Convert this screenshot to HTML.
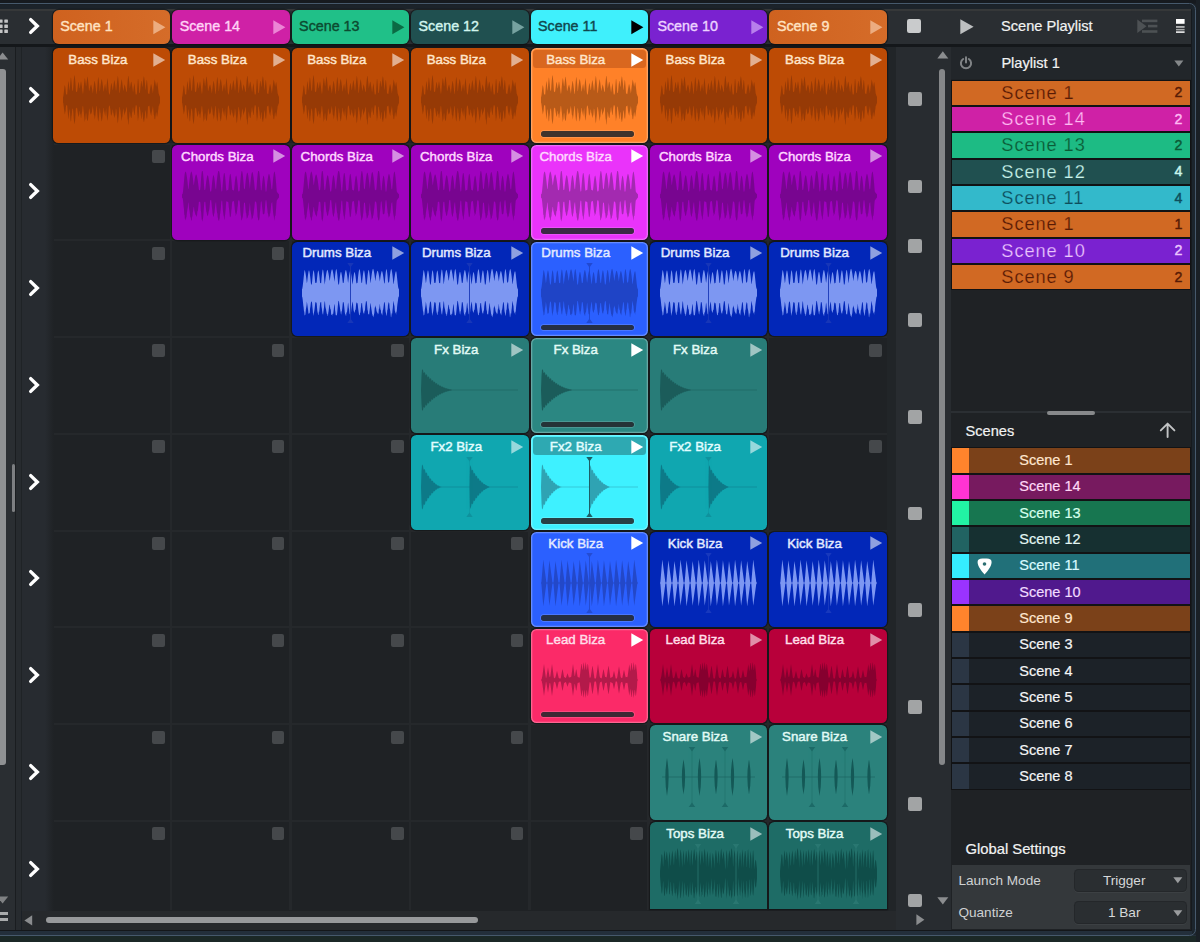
<!DOCTYPE html>
<html lang="en"><head><meta charset="utf-8"><title>Scene Launcher</title>
<style>
*{box-sizing:border-box;margin:0;padding:0}
html,body{width:1200px;height:942px;overflow:hidden;background:#1b2026}
body{position:relative;font-family:"Liberation Sans",Arial,Helvetica,sans-serif;color:#fff;-webkit-font-smoothing:antialiased}
.a{position:absolute}
.t{position:absolute;white-space:nowrap;line-height:1}
svg{position:absolute;overflow:visible}
.sc{position:absolute;top:10.2px;height:33.4px;width:117.5px;border-radius:6px;box-shadow:0 0 0 1.2px rgba(10,12,14,.55)}
.sc .t{left:7.5px;top:8.9px;font-size:14.3px;-webkit-text-stroke:.4px currentColor}
.cl{position:absolute;width:117.5px;height:94.9px;border-radius:5.5px;box-shadow:0 0 0 1.2px rgba(10,12,14,.5);overflow:hidden}
.cl .n{position:absolute;left:0;width:90.4px;top:3.7px;text-align:center;font-size:13.3px;line-height:15px;white-space:nowrap;-webkit-text-stroke:.45px currentColor}
.cl .pb{position:absolute;left:10.3px;width:93.6px;top:83.4px;height:5.4px;border-radius:2.7px;background:rgba(36,40,44,.88);box-shadow:0 0 0 .7px rgba(255,255,255,.2)}
.cl .st{position:absolute;left:2px;right:2px;top:1.8px;height:18.6px;border-radius:3.5px}
.em{position:absolute;width:12.7px;height:13.2px;border-radius:2px;background:#45484b}
.sq{position:absolute;left:908.2px;width:13.8px;height:13.8px;border-radius:2.2px;background:#a2a4a5}
.pr{position:absolute;left:951.5px;width:238.9px;height:24.2px}
.pr .t{left:49.8px;top:3px;font-size:18.2px;letter-spacing:.95px}
.pr .c{position:absolute;right:7.9px;top:4.7px;font-size:14.2px;line-height:1;-webkit-text-stroke:.45px currentColor}
.sr{position:absolute;left:951.5px;width:238.9px;height:24.3px}
.sr i{position:absolute;left:0;top:0;width:17.8px;height:100%}
.sr .t{left:67.8px;top:4.6px;font-size:14.5px;-webkit-text-stroke:.2px currentColor}
.dd{position:absolute;left:1075.2px;width:110.4px;height:20.8px;border-radius:3.5px;background:#2a2e31;box-shadow:0 0 0 1px #24272a, 0 1px 0 1px #3c4043}
.dd .t{left:0;width:98px;text-align:center;top:3.6px;font-size:13.6px;color:#d6d8d9}
</style></head><body>

<div class="a" style="left:0;top:0;width:1200px;height:8.5px;background:linear-gradient(180deg,#161a1f 0,#161a1f 30%,#1c232a 60%)"></div>
<div class="a" style="left:0;top:8.5px;width:1190.5px;height:35.7px;background:#2a2e32;border-top:2.2px solid #363839"></div>
<div class="a" style="left:0;top:44.2px;width:1190.5px;height:2.4px;background:#14171a"></div>
<div class="a" style="left:0;top:46.6px;width:1190.5px;height:864px;background:#1f2225"></div>
<div class="a" style="left:0;top:46.6px;width:14.5px;height:883px;background:#2a2e32"></div>
<div class="a" style="left:14.5px;top:46.6px;width:1.8px;height:883px;background:#1a1d20"></div>
<div class="a" style="left:16.3px;top:46.6px;width:4.5px;height:883px;background:#272b2f"></div>
<div class="a" style="left:20.8px;top:46.6px;width:1.2px;height:864px;background:#1f2326"></div>
<div class="a" style="left:22px;top:46.6px;width:32px;height:864px;background:linear-gradient(90deg,#272b30 0,#272b30 72%,#1f2225 100%)"></div>
<div class="a" style="left:0;top:68.8px;width:5.5px;height:696px;background:#8f9193;border-radius:0 3px 3px 0"></div>
<svg style="left:0;top:51.5px" width="9" height="8"><path d="M-3 7.6 L2.6 0.4 L8.2 7.6Z" fill="#8b8d8f"/></svg>
<svg style="left:0;top:896px" width="9" height="8"><path d="M-3 0.4 L2.6 7.4 L8.2 0.4Z" fill="#7f8183"/></svg>
<div class="a" style="left:0;top:912px;width:8px;height:3px;background:#a9abac"></div><div class="a" style="left:0;top:917.5px;width:8px;height:3px;background:#a9abac"></div>
<div class="a" style="left:11.6px;top:463.5px;width:3.6px;height:48px;background:#7d7f82;border-radius:2px"></div>
<div class="a" style="left:887px;top:46.6px;width:9px;height:864px;background:#212528"></div>
<div class="a" style="left:896px;top:46.6px;width:55px;height:883px;background:#282c30"></div>
<div class="a" style="left:951px;top:46.6px;width:239.5px;height:883px;background:#1f2225"></div>
<div class="a" style="left:22px;top:911px;width:874px;height:18.6px;background:#26292c"></div>
<div class="a" style="left:0;top:929.6px;width:1196px;height:1.8px;background:#14171a"></div>
<div class="a" style="left:0;top:931.4px;width:1200px;height:5px;background:#232f3b"></div>
<div class="a" style="left:0;top:936.4px;width:1200px;height:6px;background:#1b2826"></div>
<div class="a" style="left:1190.5px;top:8.5px;width:1.6px;height:922px;background:#161a1e"></div>
<div class="a" style="left:1192.1px;top:6px;width:4px;height:929px;background:#1c252d"></div>
<div class="a" style="left:1196.3px;top:0;width:3.7px;height:942px;background:#1a2026"></div>
<div class="a" style="left:46px;top:916.8px;width:432px;height:6.5px;background:#97999b;border-radius:3.2px"></div>
<svg style="left:24px;top:914.6px" width="9" height="11"><path d="M8.2 0.3 L0.4 5.4 L8.2 10.5Z" fill="#8a8c8e"/></svg>
<svg style="left:916px;top:914.2px" width="9" height="12"><path d="M0.4 0.3 L8.4 5.8 L0.4 11.3Z" fill="#8a8c8e"/></svg>
<svg style="left:0;top:0" width="10" height="40" fill="#c4c5c6"><rect x="-1" y="19.4" width="3.6" height="3.3" rx=".5"/><rect x="-1" y="24.6" width="3.6" height="3.3" rx=".5"/><rect x="-1" y="29.6" width="3.6" height="3.3" rx=".5"/><rect x="4.3" y="19.4" width="3.6" height="3.3" rx=".5"/><rect x="4.3" y="24.6" width="3.6" height="3.3" rx=".5"/><rect x="4.3" y="29.6" width="3.6" height="3.3" rx=".5"/></svg>
<svg style="left:27px;top:17.4px" width="14" height="18"><path d="M3.7 2.6 L10.3 9 L3.7 15.4" fill="none" stroke="#fff" stroke-width="3.4" stroke-linecap="round" stroke-linejoin="miter"/></svg>
<svg style="left:27px;top:85.5px" width="14" height="18"><path d="M3.7 2.6 L10.3 9 L3.7 15.4" fill="none" stroke="#fff" stroke-width="3.4" stroke-linecap="round" stroke-linejoin="miter"/></svg>
<svg style="left:27px;top:182.25px" width="14" height="18"><path d="M3.7 2.6 L10.3 9 L3.7 15.4" fill="none" stroke="#fff" stroke-width="3.4" stroke-linecap="round" stroke-linejoin="miter"/></svg>
<svg style="left:27px;top:279px" width="14" height="18"><path d="M3.7 2.6 L10.3 9 L3.7 15.4" fill="none" stroke="#fff" stroke-width="3.4" stroke-linecap="round" stroke-linejoin="miter"/></svg>
<svg style="left:27px;top:375.75px" width="14" height="18"><path d="M3.7 2.6 L10.3 9 L3.7 15.4" fill="none" stroke="#fff" stroke-width="3.4" stroke-linecap="round" stroke-linejoin="miter"/></svg>
<svg style="left:27px;top:472.5px" width="14" height="18"><path d="M3.7 2.6 L10.3 9 L3.7 15.4" fill="none" stroke="#fff" stroke-width="3.4" stroke-linecap="round" stroke-linejoin="miter"/></svg>
<svg style="left:27px;top:569.25px" width="14" height="18"><path d="M3.7 2.6 L10.3 9 L3.7 15.4" fill="none" stroke="#fff" stroke-width="3.4" stroke-linecap="round" stroke-linejoin="miter"/></svg>
<svg style="left:27px;top:666px" width="14" height="18"><path d="M3.7 2.6 L10.3 9 L3.7 15.4" fill="none" stroke="#fff" stroke-width="3.4" stroke-linecap="round" stroke-linejoin="miter"/></svg>
<svg style="left:27px;top:762.75px" width="14" height="18"><path d="M3.7 2.6 L10.3 9 L3.7 15.4" fill="none" stroke="#fff" stroke-width="3.4" stroke-linecap="round" stroke-linejoin="miter"/></svg>
<svg style="left:27px;top:859.5px" width="14" height="18"><path d="M3.7 2.6 L10.3 9 L3.7 15.4" fill="none" stroke="#fff" stroke-width="3.4" stroke-linecap="round" stroke-linejoin="miter"/></svg>
<div class="sc" style="left:52.7px;background:#cf621f;background:linear-gradient(90deg,#cf621f,#d56c29)"><span class="t" style="color:#ffe2c2">Scene 1</span><svg style="left:100.6px;top:9.4px" width="13" height="15"><path d="M0.3 0.3 L12.4 7.2 L0.3 14.2Z" fill="rgba(255,225,200,.55)"/></svg></div>
<div class="sc" style="left:172.15px;background:#cf21a6"><span class="t" style="color:#ffd3f6">Scene 14</span><svg style="left:100.6px;top:9.4px" width="13" height="15"><path d="M0.3 0.3 L12.4 7.2 L0.3 14.2Z" fill="rgba(255,200,245,.6)"/></svg></div>
<div class="sc" style="left:291.6px;background:#20c088"><span class="t" style="color:#0c4a30">Scene 13</span><svg style="left:100.6px;top:9.4px" width="13" height="15"><path d="M0.3 0.3 L12.4 7.2 L0.3 14.2Z" fill="#0b6a44"/></svg></div>
<div class="sc" style="left:411.05px;background:#205050"><span class="t" style="color:#d2f5ee">Scene 12</span><svg style="left:100.6px;top:9.4px" width="13" height="15"><path d="M0.3 0.3 L12.4 7.2 L0.3 14.2Z" fill="rgba(190,230,225,.55)"/></svg></div>
<div class="sc" style="left:530.5px;background:#3ff0fc"><span class="t" style="color:#10464c">Scene 11</span><svg style="left:100.6px;top:9.4px" width="13" height="15"><path d="M0.3 0.3 L12.4 7.2 L0.3 14.2Z" fill="#000"/></svg></div>
<div class="sc" style="left:649.95px;background:#7a22d0"><span class="t" style="color:#ecd3ff">Scene 10</span><svg style="left:100.6px;top:9.4px" width="13" height="15"><path d="M0.3 0.3 L12.4 7.2 L0.3 14.2Z" fill="rgba(225,190,255,.6)"/></svg></div>
<div class="sc" style="left:769.4px;background:#cf621f;background:linear-gradient(90deg,#cf621f,#d56c29)"><span class="t" style="color:#ffe2c2">Scene 9</span><svg style="left:100.6px;top:9.4px" width="13" height="15"><path d="M0.3 0.3 L12.4 7.2 L0.3 14.2Z" fill="rgba(255,225,200,.55)"/></svg></div>
<div class="a" style="left:169.65px;top:144px;width:2.6px;height:766px;background:#25282b"></div>
<div class="a" style="left:289.1px;top:144px;width:2.6px;height:766px;background:#25282b"></div>
<div class="a" style="left:408.55px;top:144px;width:2.6px;height:766px;background:#25282b"></div>
<div class="a" style="left:528px;top:144px;width:2.6px;height:766px;background:#25282b"></div>
<div class="a" style="left:647.45px;top:144px;width:2.6px;height:766px;background:#25282b"></div>
<div class="a" style="left:766.9px;top:144px;width:2.6px;height:766px;background:#25282b"></div>
<div class="a" style="left:54px;top:142.65px;width:833px;height:2px;background:#25282b"></div>
<div class="a" style="left:54px;top:239.4px;width:833px;height:2px;background:#25282b"></div>
<div class="a" style="left:54px;top:336.15px;width:833px;height:2px;background:#25282b"></div>
<div class="a" style="left:54px;top:432.9px;width:833px;height:2px;background:#25282b"></div>
<div class="a" style="left:54px;top:529.65px;width:833px;height:2px;background:#25282b"></div>
<div class="a" style="left:54px;top:626.4px;width:833px;height:2px;background:#25282b"></div>
<div class="a" style="left:54px;top:723.15px;width:833px;height:2px;background:#25282b"></div>
<div class="a" style="left:54px;top:819.9px;width:833px;height:2px;background:#25282b"></div>
<div class="cl" style="left:52.7px;top:48.1px;height:94.9px;background:#bd4b05"><span class="n" style="color:#ffe6cc">Bass Biza</span><svg style="left:100.4px;top:4.6px" width="13" height="15"><path d="M0.3 0.3 L12.2 7 L0.3 13.8Z" fill="rgba(255,255,255,.56)"/></svg><svg style="left:10.3px;top:26.5px" width="97" height="50" viewBox="0 0 97 50"><path d="M0 22.28 L0.32 21.18 L0.65 18.64 L0.97 16.02 L1.3 13.17 L1.62 10.16 L1.95 10.8 L2.27 12.03 L2.6 14.32 L2.92 18.31 L3.24 19.44 L3.57 19.49 L3.89 19.5 L4.22 19.47 L4.54 14.73 L4.87 10.95 L5.19 7.62 L5.52 6.1 L5.84 8.92 L6.16 12.09 L6.49 16.07 L6.81 14.11 L7.14 9.73 L7.46 5.98 L7.79 2.56 L8.11 3.21 L8.43 6.17 L8.76 9.52 L9.08 13.8 L9.41 15.87 L9.73 15.72 L10.06 15.61 L10.38 10.38 L10.71 6.44 L11.03 3.06 L11.35 0.5 L11.68 0.5 L12 3.51 L12.33 7.09 L12.65 11.24 L12.98 16.4 L13.3 16.65 L13.63 16.92 L13.95 17.21 L14.27 15.38 L14.6 12.7 L14.92 10.53 L15.25 8.59 L15.57 6.8 L15.9 8.06 L16.22 10.39 L16.55 12.88 L16.87 13.4 L17.19 11.01 L17.52 8.81 L17.84 6.71 L18.17 6.86 L18.49 8.9 L18.82 11.07 L19.14 13.43 L19.46 16.22 L19.79 18.73 L20.11 18.49 L20.44 15.43 L20.76 11.71 L21.09 8.54 L21.41 5.66 L21.74 2.95 L22.06 3.93 L22.38 6.16 L22.71 8.65 L23.03 11.54 L23.36 10.56 L23.68 7.28 L24.01 4.39 L24.33 1.76 L24.66 2.09 L24.98 4.68 L25.3 7.54 L25.63 10.84 L25.95 15.47 L26.28 15.95 L26.6 14.69 L26.93 13.08 L27.25 11.8 L27.58 10.68 L27.9 9.68 L28.22 9.67 L28.55 11.23 L28.87 12.87 L29.2 14.63 L29.52 16.62 L29.85 18.82 L30.17 16.06 L30.49 13.12 L30.82 10.62 L31.14 8.33 L31.47 6.16 L31.79 6.02 L32.12 8.21 L32.44 10.51 L32.77 13.01 L33.09 15.92 L33.41 18.95 L33.74 18.74 L34.06 15.35 L34.39 10.84 L34.71 7.05 L35.04 3.6 L35.36 1.82 L35.69 4.57 L36.01 7.61 L36.33 11.14 L36.66 16.29 L36.98 16.08 L37.31 12.5 L37.63 9.99 L37.96 7.8 L38.28 5.83 L38.61 4.01 L38.93 4.73 L39.25 6.61 L39.58 8.66 L39.9 10.95 L40.23 13.7 L40.55 16.15 L40.88 16.38 L41.2 13.53 L41.53 11.51 L41.85 9.79 L42.17 8.95 L42.5 11.13 L42.82 13.51 L43.15 16.29 L43.47 12.26 L43.8 8.79 L44.12 5.71 L44.44 2.85 L44.77 5.27 L45.09 8.58 L45.42 12.22 L45.74 16.59 L46.07 19.47 L46.39 19.4 L46.72 19.29 L47.04 17.46 L47.36 14.51 L47.69 12.04 L48.01 9.78 L48.34 7.64 L48.66 9.01 L48.99 10.72 L49.31 12.64 L49.64 15.02 L49.96 15.04 L50.28 11.98 L50.61 9.45 L50.93 7.18 L51.26 5.09 L51.58 6.09 L51.91 7.95 L52.23 10.05 L52.56 12.54 L52.88 15.51 L53.2 15.56 L53.53 12.43 L53.85 8.82 L54.18 5.85 L54.5 3.21 L54.83 0.79 L55.15 2.5 L55.47 5.51 L55.8 8.78 L56.12 12.47 L56.45 17.75 L56.77 18.04 L57.1 15.69 L57.42 12.55 L57.75 9.97 L58.07 7.64 L58.39 5.45 L58.72 3.88 L59.04 6.24 L59.37 8.7 L59.69 11.31 L60.02 14.19 L60.34 16.25 L60.67 14.31 L60.99 12.53 L61.31 10.84 L61.64 9.37 L61.96 10.56 L62.29 11.81 L62.61 13.19 L62.94 14.77 L63.26 17.04 L63.59 17.11 L63.91 15.41 L64.23 10.71 L64.56 7.03 L64.88 3.77 L65.21 0.78 L65.53 1.28 L65.86 4.01 L66.18 7.04 L66.51 10.57 L66.83 13.51 L67.15 11.39 L67.48 9.64 L67.8 8.11 L68.13 6.73 L68.45 7.02 L68.78 8.8 L69.1 10.72 L69.42 12.83 L69.75 15.32 L70.07 17.45 L70.4 15.18 L70.72 12.41 L71.05 10.13 L71.37 8.08 L71.7 10.45 L72.02 13.19 L72.34 16.37 L72.67 19.32 L72.99 19.42 L73.32 19.48 L73.64 19.5 L73.97 17.51 L74.29 12 L74.62 7.65 L74.94 3.73 L75.26 4.15 L75.59 7.77 L75.91 11.88 L76.24 17.66 L76.56 17.99 L76.89 17.7 L77.21 15.29 L77.54 11.57 L77.86 8.5 L78.18 5.73 L78.51 6.16 L78.83 8.51 L79.16 11.22 L79.48 12.05 L79.81 8.84 L80.13 6.09 L80.45 3.62 L80.78 1.35 L81.1 2.08 L81.43 4.48 L81.75 7.1 L82.08 10.03 L82.4 13.55 L82.73 15.42 L83.05 10.97 L83.37 7.72 L83.7 4.9 L84.02 5.55 L84.35 8.98 L84.67 12.85 L85 18.29 L85.32 18.55 L85.65 18.79 L85.97 19 L86.29 19.17 L86.62 17.02 L86.94 14.77 L87.27 12.84 L87.59 11.05 L87.92 9.34 L88.24 9.2 L88.57 10.78 L88.89 12.44 L89.21 14.24 L89.54 16.36 L89.86 18.54 L90.19 15.96 L90.51 13.03 L90.84 10.52 L91.16 8.22 L91.48 6.05 L91.81 4.6 L92.13 6.14 L92.46 7.81 L92.78 9.66 L93.11 11.8 L93.43 10.24 L93.76 8.55 L94.08 7 L94.4 8.11 L94.73 10.57 L95.05 13.36 L95.38 16.11 L95.7 18.65 L96.03 19.52 L96.35 20.39 L96.68 21.24 L97 22.06 L97 27.81 L96.68 28.67 L96.35 29.41 L96.03 30.69 L95.7 30.74 L95.38 33.93 L95.05 35.84 L94.73 38.53 L94.4 40.33 L94.08 41.94 L93.76 40.74 L93.43 38.04 L93.11 37.07 L92.78 39.15 L92.46 41.73 L92.13 44.17 L91.81 44.3 L91.48 43.81 L91.16 40.56 L90.84 39.95 L90.51 36.85 L90.19 33.29 L89.86 31.01 L89.54 33.41 L89.21 34.81 L88.89 36.59 L88.57 37.94 L88.24 40.72 L87.92 39.89 L87.59 38.43 L87.27 37.48 L86.94 35.23 L86.62 32.15 L86.29 30.27 L85.97 31.14 L85.65 31.11 L85.32 31.17 L85 31.46 L84.67 37 L84.35 41.04 L84.02 44.27 L83.7 43.2 L83.37 42.27 L83.05 38.27 L82.73 34.92 L82.4 35.99 L82.08 38.37 L81.75 41.95 L81.43 44.21 L81.1 46.63 L80.78 47.21 L80.45 45.16 L80.13 43.92 L79.81 40.82 L79.48 36.91 L79.16 37.52 L78.83 40.15 L78.51 44.07 L78.18 43.7 L77.86 40.37 L77.54 36.95 L77.21 35 L76.89 32.3 L76.56 31.29 L76.24 32.3 L75.91 37.62 L75.59 42.28 L75.26 43.47 L74.94 46.43 L74.62 41.87 L74.29 38.42 L73.97 32.6 L73.64 30.43 L73.32 30.6 L72.99 30.02 L72.67 30.76 L72.34 32.63 L72.02 35.73 L71.7 39.85 L71.37 40.16 L71.05 38.3 L70.72 36.17 L70.4 34.85 L70.07 31.82 L69.75 33.52 L69.42 36.85 L69.1 37.81 L68.78 40.72 L68.45 42.93 L68.13 43.03 L67.8 42 L67.48 40.69 L67.15 38.42 L66.83 36.6 L66.51 37.98 L66.18 42.13 L65.86 44.35 L65.53 48.88 L65.21 49.8 L64.88 44.95 L64.56 43.5 L64.23 39.59 L63.91 34.09 L63.59 32.48 L63.26 32.1 L62.94 35.14 L62.61 36.41 L62.29 37.12 L61.96 38.78 L61.64 40.49 L61.31 38.42 L60.99 37.38 L60.67 35.26 L60.34 33.22 L60.02 35.26 L59.69 38.42 L59.37 41.44 L59.04 42.65 L58.72 46.23 L58.39 44.09 L58.07 41.31 L57.75 38.65 L57.42 36.11 L57.1 33.76 L56.77 31.92 L56.45 32.02 L56.12 36.27 L55.8 40.13 L55.47 42.75 L55.15 46.1 L54.83 48.57 L54.5 46.43 L54.18 42.93 L53.85 40.05 L53.53 36.69 L53.2 34.07 L52.88 33.48 L52.56 37.66 L52.23 40.49 L51.91 40.19 L51.58 42.02 L51.26 42.93 L50.93 40.84 L50.61 38.69 L50.28 38.07 L49.96 34.52 L49.64 34.46 L49.31 36.92 L48.99 38.18 L48.66 39.77 L48.34 40.41 L48.01 40.5 L47.69 37.71 L47.36 34.25 L47.04 32.63 L46.72 30.76 L46.39 30.75 L46.07 30.57 L45.74 32.63 L45.42 37.92 L45.09 40.85 L44.77 42.98 L44.44 45.73 L44.12 44.39 L43.8 40.5 L43.47 37.97 L43.15 33.01 L42.82 35.74 L42.5 38.56 L42.17 41.54 L41.85 39.39 L41.53 38.01 L41.2 36.31 L40.88 33 L40.55 33.03 L40.23 36.29 L39.9 37.39 L39.58 40.89 L39.25 43.83 L38.93 45.74 L38.61 46.57 L38.28 44 L37.96 42.62 L37.63 38.32 L37.31 37.62 L36.98 33.26 L36.66 33.48 L36.33 37.35 L36.01 40.94 L35.69 44.09 L35.36 46.47 L35.04 45.61 L34.71 42.7 L34.39 39.35 L34.06 34.64 L33.74 30.73 L33.41 31.22 L33.09 34.37 L32.77 36.38 L32.44 40.04 L32.12 42.14 L31.79 44.57 L31.47 41.6 L31.14 40.09 L30.82 39.77 L30.49 36.23 L30.17 33.47 L29.85 30.85 L29.52 32.84 L29.2 34.57 L28.87 37.22 L28.55 37.76 L28.22 38.81 L27.9 39.33 L27.58 39.44 L27.25 37.97 L26.93 37.03 L26.6 34.53 L26.28 33.23 L25.95 34.67 L25.63 39.29 L25.3 40.89 L24.98 44.6 L24.66 45.61 L24.33 46.29 L24.01 44.62 L23.68 43.1 L23.36 39.21 L23.03 37.57 L22.71 39.83 L22.38 44.15 L22.06 45.02 L21.74 47.34 L21.41 43.06 L21.09 40.33 L20.76 36.91 L20.44 34.49 L20.11 31.19 L19.79 30.71 L19.46 33.06 L19.14 36.67 L18.82 37.76 L18.49 39.96 L18.17 43.1 L17.84 42.76 L17.52 39.32 L17.19 39.04 L16.87 35.9 L16.55 36.25 L16.22 39.25 L15.9 40.91 L15.57 41.93 L15.25 40.39 L14.92 38.48 L14.6 36.99 L14.27 34.17 L13.95 32.17 L13.63 33.35 L13.3 33.25 L12.98 32.66 L12.65 37.16 L12.33 42.87 L12 46.34 L11.68 47.94 L11.35 49.22 L11.03 45.95 L10.71 43.19 L10.38 38.01 L10.06 34.22 L9.73 34.08 L9.41 33.06 L9.08 35.9 L8.76 39.65 L8.43 41.61 L8.11 46.08 L7.79 46.62 L7.46 44.71 L7.14 39.17 L6.81 35 L6.49 33.89 L6.16 37.26 L5.84 40.45 L5.52 44.47 L5.19 42.02 L4.87 38.62 L4.54 35.02 L4.22 30.44 L3.89 30.3 L3.57 30.26 L3.24 30.23 L2.92 31.84 L2.6 36.03 L2.27 37.06 L1.95 39.47 L1.62 38.16 L1.3 35.71 L0.97 33.78 L0.65 31.01 L0.32 28.49 L0 27.41Z" fill="#963a06"/></svg></div>
<div class="cl" style="left:172.15px;top:48.1px;height:94.9px;background:#bd4b05"><span class="n" style="color:#ffe6cc">Bass Biza</span><svg style="left:100.4px;top:4.6px" width="13" height="15"><path d="M0.3 0.3 L12.2 7 L0.3 13.8Z" fill="rgba(255,255,255,.56)"/></svg><svg style="left:10.3px;top:26.5px" width="97" height="50" viewBox="0 0 97 50"><path d="M0 22.28 L0.32 21.18 L0.65 18.64 L0.97 16.02 L1.3 13.17 L1.62 10.16 L1.95 10.8 L2.27 12.03 L2.6 14.32 L2.92 18.31 L3.24 19.44 L3.57 19.49 L3.89 19.5 L4.22 19.47 L4.54 14.73 L4.87 10.95 L5.19 7.62 L5.52 6.1 L5.84 8.92 L6.16 12.09 L6.49 16.07 L6.81 14.11 L7.14 9.73 L7.46 5.98 L7.79 2.56 L8.11 3.21 L8.43 6.17 L8.76 9.52 L9.08 13.8 L9.41 15.87 L9.73 15.72 L10.06 15.61 L10.38 10.38 L10.71 6.44 L11.03 3.06 L11.35 0.5 L11.68 0.5 L12 3.51 L12.33 7.09 L12.65 11.24 L12.98 16.4 L13.3 16.65 L13.63 16.92 L13.95 17.21 L14.27 15.38 L14.6 12.7 L14.92 10.53 L15.25 8.59 L15.57 6.8 L15.9 8.06 L16.22 10.39 L16.55 12.88 L16.87 13.4 L17.19 11.01 L17.52 8.81 L17.84 6.71 L18.17 6.86 L18.49 8.9 L18.82 11.07 L19.14 13.43 L19.46 16.22 L19.79 18.73 L20.11 18.49 L20.44 15.43 L20.76 11.71 L21.09 8.54 L21.41 5.66 L21.74 2.95 L22.06 3.93 L22.38 6.16 L22.71 8.65 L23.03 11.54 L23.36 10.56 L23.68 7.28 L24.01 4.39 L24.33 1.76 L24.66 2.09 L24.98 4.68 L25.3 7.54 L25.63 10.84 L25.95 15.47 L26.28 15.95 L26.6 14.69 L26.93 13.08 L27.25 11.8 L27.58 10.68 L27.9 9.68 L28.22 9.67 L28.55 11.23 L28.87 12.87 L29.2 14.63 L29.52 16.62 L29.85 18.82 L30.17 16.06 L30.49 13.12 L30.82 10.62 L31.14 8.33 L31.47 6.16 L31.79 6.02 L32.12 8.21 L32.44 10.51 L32.77 13.01 L33.09 15.92 L33.41 18.95 L33.74 18.74 L34.06 15.35 L34.39 10.84 L34.71 7.05 L35.04 3.6 L35.36 1.82 L35.69 4.57 L36.01 7.61 L36.33 11.14 L36.66 16.29 L36.98 16.08 L37.31 12.5 L37.63 9.99 L37.96 7.8 L38.28 5.83 L38.61 4.01 L38.93 4.73 L39.25 6.61 L39.58 8.66 L39.9 10.95 L40.23 13.7 L40.55 16.15 L40.88 16.38 L41.2 13.53 L41.53 11.51 L41.85 9.79 L42.17 8.95 L42.5 11.13 L42.82 13.51 L43.15 16.29 L43.47 12.26 L43.8 8.79 L44.12 5.71 L44.44 2.85 L44.77 5.27 L45.09 8.58 L45.42 12.22 L45.74 16.59 L46.07 19.47 L46.39 19.4 L46.72 19.29 L47.04 17.46 L47.36 14.51 L47.69 12.04 L48.01 9.78 L48.34 7.64 L48.66 9.01 L48.99 10.72 L49.31 12.64 L49.64 15.02 L49.96 15.04 L50.28 11.98 L50.61 9.45 L50.93 7.18 L51.26 5.09 L51.58 6.09 L51.91 7.95 L52.23 10.05 L52.56 12.54 L52.88 15.51 L53.2 15.56 L53.53 12.43 L53.85 8.82 L54.18 5.85 L54.5 3.21 L54.83 0.79 L55.15 2.5 L55.47 5.51 L55.8 8.78 L56.12 12.47 L56.45 17.75 L56.77 18.04 L57.1 15.69 L57.42 12.55 L57.75 9.97 L58.07 7.64 L58.39 5.45 L58.72 3.88 L59.04 6.24 L59.37 8.7 L59.69 11.31 L60.02 14.19 L60.34 16.25 L60.67 14.31 L60.99 12.53 L61.31 10.84 L61.64 9.37 L61.96 10.56 L62.29 11.81 L62.61 13.19 L62.94 14.77 L63.26 17.04 L63.59 17.11 L63.91 15.41 L64.23 10.71 L64.56 7.03 L64.88 3.77 L65.21 0.78 L65.53 1.28 L65.86 4.01 L66.18 7.04 L66.51 10.57 L66.83 13.51 L67.15 11.39 L67.48 9.64 L67.8 8.11 L68.13 6.73 L68.45 7.02 L68.78 8.8 L69.1 10.72 L69.42 12.83 L69.75 15.32 L70.07 17.45 L70.4 15.18 L70.72 12.41 L71.05 10.13 L71.37 8.08 L71.7 10.45 L72.02 13.19 L72.34 16.37 L72.67 19.32 L72.99 19.42 L73.32 19.48 L73.64 19.5 L73.97 17.51 L74.29 12 L74.62 7.65 L74.94 3.73 L75.26 4.15 L75.59 7.77 L75.91 11.88 L76.24 17.66 L76.56 17.99 L76.89 17.7 L77.21 15.29 L77.54 11.57 L77.86 8.5 L78.18 5.73 L78.51 6.16 L78.83 8.51 L79.16 11.22 L79.48 12.05 L79.81 8.84 L80.13 6.09 L80.45 3.62 L80.78 1.35 L81.1 2.08 L81.43 4.48 L81.75 7.1 L82.08 10.03 L82.4 13.55 L82.73 15.42 L83.05 10.97 L83.37 7.72 L83.7 4.9 L84.02 5.55 L84.35 8.98 L84.67 12.85 L85 18.29 L85.32 18.55 L85.65 18.79 L85.97 19 L86.29 19.17 L86.62 17.02 L86.94 14.77 L87.27 12.84 L87.59 11.05 L87.92 9.34 L88.24 9.2 L88.57 10.78 L88.89 12.44 L89.21 14.24 L89.54 16.36 L89.86 18.54 L90.19 15.96 L90.51 13.03 L90.84 10.52 L91.16 8.22 L91.48 6.05 L91.81 4.6 L92.13 6.14 L92.46 7.81 L92.78 9.66 L93.11 11.8 L93.43 10.24 L93.76 8.55 L94.08 7 L94.4 8.11 L94.73 10.57 L95.05 13.36 L95.38 16.11 L95.7 18.65 L96.03 19.52 L96.35 20.39 L96.68 21.24 L97 22.06 L97 27.81 L96.68 28.67 L96.35 29.41 L96.03 30.69 L95.7 30.74 L95.38 33.93 L95.05 35.84 L94.73 38.53 L94.4 40.33 L94.08 41.94 L93.76 40.74 L93.43 38.04 L93.11 37.07 L92.78 39.15 L92.46 41.73 L92.13 44.17 L91.81 44.3 L91.48 43.81 L91.16 40.56 L90.84 39.95 L90.51 36.85 L90.19 33.29 L89.86 31.01 L89.54 33.41 L89.21 34.81 L88.89 36.59 L88.57 37.94 L88.24 40.72 L87.92 39.89 L87.59 38.43 L87.27 37.48 L86.94 35.23 L86.62 32.15 L86.29 30.27 L85.97 31.14 L85.65 31.11 L85.32 31.17 L85 31.46 L84.67 37 L84.35 41.04 L84.02 44.27 L83.7 43.2 L83.37 42.27 L83.05 38.27 L82.73 34.92 L82.4 35.99 L82.08 38.37 L81.75 41.95 L81.43 44.21 L81.1 46.63 L80.78 47.21 L80.45 45.16 L80.13 43.92 L79.81 40.82 L79.48 36.91 L79.16 37.52 L78.83 40.15 L78.51 44.07 L78.18 43.7 L77.86 40.37 L77.54 36.95 L77.21 35 L76.89 32.3 L76.56 31.29 L76.24 32.3 L75.91 37.62 L75.59 42.28 L75.26 43.47 L74.94 46.43 L74.62 41.87 L74.29 38.42 L73.97 32.6 L73.64 30.43 L73.32 30.6 L72.99 30.02 L72.67 30.76 L72.34 32.63 L72.02 35.73 L71.7 39.85 L71.37 40.16 L71.05 38.3 L70.72 36.17 L70.4 34.85 L70.07 31.82 L69.75 33.52 L69.42 36.85 L69.1 37.81 L68.78 40.72 L68.45 42.93 L68.13 43.03 L67.8 42 L67.48 40.69 L67.15 38.42 L66.83 36.6 L66.51 37.98 L66.18 42.13 L65.86 44.35 L65.53 48.88 L65.21 49.8 L64.88 44.95 L64.56 43.5 L64.23 39.59 L63.91 34.09 L63.59 32.48 L63.26 32.1 L62.94 35.14 L62.61 36.41 L62.29 37.12 L61.96 38.78 L61.64 40.49 L61.31 38.42 L60.99 37.38 L60.67 35.26 L60.34 33.22 L60.02 35.26 L59.69 38.42 L59.37 41.44 L59.04 42.65 L58.72 46.23 L58.39 44.09 L58.07 41.31 L57.75 38.65 L57.42 36.11 L57.1 33.76 L56.77 31.92 L56.45 32.02 L56.12 36.27 L55.8 40.13 L55.47 42.75 L55.15 46.1 L54.83 48.57 L54.5 46.43 L54.18 42.93 L53.85 40.05 L53.53 36.69 L53.2 34.07 L52.88 33.48 L52.56 37.66 L52.23 40.49 L51.91 40.19 L51.58 42.02 L51.26 42.93 L50.93 40.84 L50.61 38.69 L50.28 38.07 L49.96 34.52 L49.64 34.46 L49.31 36.92 L48.99 38.18 L48.66 39.77 L48.34 40.41 L48.01 40.5 L47.69 37.71 L47.36 34.25 L47.04 32.63 L46.72 30.76 L46.39 30.75 L46.07 30.57 L45.74 32.63 L45.42 37.92 L45.09 40.85 L44.77 42.98 L44.44 45.73 L44.12 44.39 L43.8 40.5 L43.47 37.97 L43.15 33.01 L42.82 35.74 L42.5 38.56 L42.17 41.54 L41.85 39.39 L41.53 38.01 L41.2 36.31 L40.88 33 L40.55 33.03 L40.23 36.29 L39.9 37.39 L39.58 40.89 L39.25 43.83 L38.93 45.74 L38.61 46.57 L38.28 44 L37.96 42.62 L37.63 38.32 L37.31 37.62 L36.98 33.26 L36.66 33.48 L36.33 37.35 L36.01 40.94 L35.69 44.09 L35.36 46.47 L35.04 45.61 L34.71 42.7 L34.39 39.35 L34.06 34.64 L33.74 30.73 L33.41 31.22 L33.09 34.37 L32.77 36.38 L32.44 40.04 L32.12 42.14 L31.79 44.57 L31.47 41.6 L31.14 40.09 L30.82 39.77 L30.49 36.23 L30.17 33.47 L29.85 30.85 L29.52 32.84 L29.2 34.57 L28.87 37.22 L28.55 37.76 L28.22 38.81 L27.9 39.33 L27.58 39.44 L27.25 37.97 L26.93 37.03 L26.6 34.53 L26.28 33.23 L25.95 34.67 L25.63 39.29 L25.3 40.89 L24.98 44.6 L24.66 45.61 L24.33 46.29 L24.01 44.62 L23.68 43.1 L23.36 39.21 L23.03 37.57 L22.71 39.83 L22.38 44.15 L22.06 45.02 L21.74 47.34 L21.41 43.06 L21.09 40.33 L20.76 36.91 L20.44 34.49 L20.11 31.19 L19.79 30.71 L19.46 33.06 L19.14 36.67 L18.82 37.76 L18.49 39.96 L18.17 43.1 L17.84 42.76 L17.52 39.32 L17.19 39.04 L16.87 35.9 L16.55 36.25 L16.22 39.25 L15.9 40.91 L15.57 41.93 L15.25 40.39 L14.92 38.48 L14.6 36.99 L14.27 34.17 L13.95 32.17 L13.63 33.35 L13.3 33.25 L12.98 32.66 L12.65 37.16 L12.33 42.87 L12 46.34 L11.68 47.94 L11.35 49.22 L11.03 45.95 L10.71 43.19 L10.38 38.01 L10.06 34.22 L9.73 34.08 L9.41 33.06 L9.08 35.9 L8.76 39.65 L8.43 41.61 L8.11 46.08 L7.79 46.62 L7.46 44.71 L7.14 39.17 L6.81 35 L6.49 33.89 L6.16 37.26 L5.84 40.45 L5.52 44.47 L5.19 42.02 L4.87 38.62 L4.54 35.02 L4.22 30.44 L3.89 30.3 L3.57 30.26 L3.24 30.23 L2.92 31.84 L2.6 36.03 L2.27 37.06 L1.95 39.47 L1.62 38.16 L1.3 35.71 L0.97 33.78 L0.65 31.01 L0.32 28.49 L0 27.41Z" fill="#963a06"/></svg></div>
<div class="cl" style="left:291.6px;top:48.1px;height:94.9px;background:#bd4b05"><span class="n" style="color:#ffe6cc">Bass Biza</span><svg style="left:100.4px;top:4.6px" width="13" height="15"><path d="M0.3 0.3 L12.2 7 L0.3 13.8Z" fill="rgba(255,255,255,.56)"/></svg><svg style="left:10.3px;top:26.5px" width="97" height="50" viewBox="0 0 97 50"><path d="M0 22.28 L0.32 21.18 L0.65 18.64 L0.97 16.02 L1.3 13.17 L1.62 10.16 L1.95 10.8 L2.27 12.03 L2.6 14.32 L2.92 18.31 L3.24 19.44 L3.57 19.49 L3.89 19.5 L4.22 19.47 L4.54 14.73 L4.87 10.95 L5.19 7.62 L5.52 6.1 L5.84 8.92 L6.16 12.09 L6.49 16.07 L6.81 14.11 L7.14 9.73 L7.46 5.98 L7.79 2.56 L8.11 3.21 L8.43 6.17 L8.76 9.52 L9.08 13.8 L9.41 15.87 L9.73 15.72 L10.06 15.61 L10.38 10.38 L10.71 6.44 L11.03 3.06 L11.35 0.5 L11.68 0.5 L12 3.51 L12.33 7.09 L12.65 11.24 L12.98 16.4 L13.3 16.65 L13.63 16.92 L13.95 17.21 L14.27 15.38 L14.6 12.7 L14.92 10.53 L15.25 8.59 L15.57 6.8 L15.9 8.06 L16.22 10.39 L16.55 12.88 L16.87 13.4 L17.19 11.01 L17.52 8.81 L17.84 6.71 L18.17 6.86 L18.49 8.9 L18.82 11.07 L19.14 13.43 L19.46 16.22 L19.79 18.73 L20.11 18.49 L20.44 15.43 L20.76 11.71 L21.09 8.54 L21.41 5.66 L21.74 2.95 L22.06 3.93 L22.38 6.16 L22.71 8.65 L23.03 11.54 L23.36 10.56 L23.68 7.28 L24.01 4.39 L24.33 1.76 L24.66 2.09 L24.98 4.68 L25.3 7.54 L25.63 10.84 L25.95 15.47 L26.28 15.95 L26.6 14.69 L26.93 13.08 L27.25 11.8 L27.58 10.68 L27.9 9.68 L28.22 9.67 L28.55 11.23 L28.87 12.87 L29.2 14.63 L29.52 16.62 L29.85 18.82 L30.17 16.06 L30.49 13.12 L30.82 10.62 L31.14 8.33 L31.47 6.16 L31.79 6.02 L32.12 8.21 L32.44 10.51 L32.77 13.01 L33.09 15.92 L33.41 18.95 L33.74 18.74 L34.06 15.35 L34.39 10.84 L34.71 7.05 L35.04 3.6 L35.36 1.82 L35.69 4.57 L36.01 7.61 L36.33 11.14 L36.66 16.29 L36.98 16.08 L37.31 12.5 L37.63 9.99 L37.96 7.8 L38.28 5.83 L38.61 4.01 L38.93 4.73 L39.25 6.61 L39.58 8.66 L39.9 10.95 L40.23 13.7 L40.55 16.15 L40.88 16.38 L41.2 13.53 L41.53 11.51 L41.85 9.79 L42.17 8.95 L42.5 11.13 L42.82 13.51 L43.15 16.29 L43.47 12.26 L43.8 8.79 L44.12 5.71 L44.44 2.85 L44.77 5.27 L45.09 8.58 L45.42 12.22 L45.74 16.59 L46.07 19.47 L46.39 19.4 L46.72 19.29 L47.04 17.46 L47.36 14.51 L47.69 12.04 L48.01 9.78 L48.34 7.64 L48.66 9.01 L48.99 10.72 L49.31 12.64 L49.64 15.02 L49.96 15.04 L50.28 11.98 L50.61 9.45 L50.93 7.18 L51.26 5.09 L51.58 6.09 L51.91 7.95 L52.23 10.05 L52.56 12.54 L52.88 15.51 L53.2 15.56 L53.53 12.43 L53.85 8.82 L54.18 5.85 L54.5 3.21 L54.83 0.79 L55.15 2.5 L55.47 5.51 L55.8 8.78 L56.12 12.47 L56.45 17.75 L56.77 18.04 L57.1 15.69 L57.42 12.55 L57.75 9.97 L58.07 7.64 L58.39 5.45 L58.72 3.88 L59.04 6.24 L59.37 8.7 L59.69 11.31 L60.02 14.19 L60.34 16.25 L60.67 14.31 L60.99 12.53 L61.31 10.84 L61.64 9.37 L61.96 10.56 L62.29 11.81 L62.61 13.19 L62.94 14.77 L63.26 17.04 L63.59 17.11 L63.91 15.41 L64.23 10.71 L64.56 7.03 L64.88 3.77 L65.21 0.78 L65.53 1.28 L65.86 4.01 L66.18 7.04 L66.51 10.57 L66.83 13.51 L67.15 11.39 L67.48 9.64 L67.8 8.11 L68.13 6.73 L68.45 7.02 L68.78 8.8 L69.1 10.72 L69.42 12.83 L69.75 15.32 L70.07 17.45 L70.4 15.18 L70.72 12.41 L71.05 10.13 L71.37 8.08 L71.7 10.45 L72.02 13.19 L72.34 16.37 L72.67 19.32 L72.99 19.42 L73.32 19.48 L73.64 19.5 L73.97 17.51 L74.29 12 L74.62 7.65 L74.94 3.73 L75.26 4.15 L75.59 7.77 L75.91 11.88 L76.24 17.66 L76.56 17.99 L76.89 17.7 L77.21 15.29 L77.54 11.57 L77.86 8.5 L78.18 5.73 L78.51 6.16 L78.83 8.51 L79.16 11.22 L79.48 12.05 L79.81 8.84 L80.13 6.09 L80.45 3.62 L80.78 1.35 L81.1 2.08 L81.43 4.48 L81.75 7.1 L82.08 10.03 L82.4 13.55 L82.73 15.42 L83.05 10.97 L83.37 7.72 L83.7 4.9 L84.02 5.55 L84.35 8.98 L84.67 12.85 L85 18.29 L85.32 18.55 L85.65 18.79 L85.97 19 L86.29 19.17 L86.62 17.02 L86.94 14.77 L87.27 12.84 L87.59 11.05 L87.92 9.34 L88.24 9.2 L88.57 10.78 L88.89 12.44 L89.21 14.24 L89.54 16.36 L89.86 18.54 L90.19 15.96 L90.51 13.03 L90.84 10.52 L91.16 8.22 L91.48 6.05 L91.81 4.6 L92.13 6.14 L92.46 7.81 L92.78 9.66 L93.11 11.8 L93.43 10.24 L93.76 8.55 L94.08 7 L94.4 8.11 L94.73 10.57 L95.05 13.36 L95.38 16.11 L95.7 18.65 L96.03 19.52 L96.35 20.39 L96.68 21.24 L97 22.06 L97 27.81 L96.68 28.67 L96.35 29.41 L96.03 30.69 L95.7 30.74 L95.38 33.93 L95.05 35.84 L94.73 38.53 L94.4 40.33 L94.08 41.94 L93.76 40.74 L93.43 38.04 L93.11 37.07 L92.78 39.15 L92.46 41.73 L92.13 44.17 L91.81 44.3 L91.48 43.81 L91.16 40.56 L90.84 39.95 L90.51 36.85 L90.19 33.29 L89.86 31.01 L89.54 33.41 L89.21 34.81 L88.89 36.59 L88.57 37.94 L88.24 40.72 L87.92 39.89 L87.59 38.43 L87.27 37.48 L86.94 35.23 L86.62 32.15 L86.29 30.27 L85.97 31.14 L85.65 31.11 L85.32 31.17 L85 31.46 L84.67 37 L84.35 41.04 L84.02 44.27 L83.7 43.2 L83.37 42.27 L83.05 38.27 L82.73 34.92 L82.4 35.99 L82.08 38.37 L81.75 41.95 L81.43 44.21 L81.1 46.63 L80.78 47.21 L80.45 45.16 L80.13 43.92 L79.81 40.82 L79.48 36.91 L79.16 37.52 L78.83 40.15 L78.51 44.07 L78.18 43.7 L77.86 40.37 L77.54 36.95 L77.21 35 L76.89 32.3 L76.56 31.29 L76.24 32.3 L75.91 37.62 L75.59 42.28 L75.26 43.47 L74.94 46.43 L74.62 41.87 L74.29 38.42 L73.97 32.6 L73.64 30.43 L73.32 30.6 L72.99 30.02 L72.67 30.76 L72.34 32.63 L72.02 35.73 L71.7 39.85 L71.37 40.16 L71.05 38.3 L70.72 36.17 L70.4 34.85 L70.07 31.82 L69.75 33.52 L69.42 36.85 L69.1 37.81 L68.78 40.72 L68.45 42.93 L68.13 43.03 L67.8 42 L67.48 40.69 L67.15 38.42 L66.83 36.6 L66.51 37.98 L66.18 42.13 L65.86 44.35 L65.53 48.88 L65.21 49.8 L64.88 44.95 L64.56 43.5 L64.23 39.59 L63.91 34.09 L63.59 32.48 L63.26 32.1 L62.94 35.14 L62.61 36.41 L62.29 37.12 L61.96 38.78 L61.64 40.49 L61.31 38.42 L60.99 37.38 L60.67 35.26 L60.34 33.22 L60.02 35.26 L59.69 38.42 L59.37 41.44 L59.04 42.65 L58.72 46.23 L58.39 44.09 L58.07 41.31 L57.75 38.65 L57.42 36.11 L57.1 33.76 L56.77 31.92 L56.45 32.02 L56.12 36.27 L55.8 40.13 L55.47 42.75 L55.15 46.1 L54.83 48.57 L54.5 46.43 L54.18 42.93 L53.85 40.05 L53.53 36.69 L53.2 34.07 L52.88 33.48 L52.56 37.66 L52.23 40.49 L51.91 40.19 L51.58 42.02 L51.26 42.93 L50.93 40.84 L50.61 38.69 L50.28 38.07 L49.96 34.52 L49.64 34.46 L49.31 36.92 L48.99 38.18 L48.66 39.77 L48.34 40.41 L48.01 40.5 L47.69 37.71 L47.36 34.25 L47.04 32.63 L46.72 30.76 L46.39 30.75 L46.07 30.57 L45.74 32.63 L45.42 37.92 L45.09 40.85 L44.77 42.98 L44.44 45.73 L44.12 44.39 L43.8 40.5 L43.47 37.97 L43.15 33.01 L42.82 35.74 L42.5 38.56 L42.17 41.54 L41.85 39.39 L41.53 38.01 L41.2 36.31 L40.88 33 L40.55 33.03 L40.23 36.29 L39.9 37.39 L39.58 40.89 L39.25 43.83 L38.93 45.74 L38.61 46.57 L38.28 44 L37.96 42.62 L37.63 38.32 L37.31 37.62 L36.98 33.26 L36.66 33.48 L36.33 37.35 L36.01 40.94 L35.69 44.09 L35.36 46.47 L35.04 45.61 L34.71 42.7 L34.39 39.35 L34.06 34.64 L33.74 30.73 L33.41 31.22 L33.09 34.37 L32.77 36.38 L32.44 40.04 L32.12 42.14 L31.79 44.57 L31.47 41.6 L31.14 40.09 L30.82 39.77 L30.49 36.23 L30.17 33.47 L29.85 30.85 L29.52 32.84 L29.2 34.57 L28.87 37.22 L28.55 37.76 L28.22 38.81 L27.9 39.33 L27.58 39.44 L27.25 37.97 L26.93 37.03 L26.6 34.53 L26.28 33.23 L25.95 34.67 L25.63 39.29 L25.3 40.89 L24.98 44.6 L24.66 45.61 L24.33 46.29 L24.01 44.62 L23.68 43.1 L23.36 39.21 L23.03 37.57 L22.71 39.83 L22.38 44.15 L22.06 45.02 L21.74 47.34 L21.41 43.06 L21.09 40.33 L20.76 36.91 L20.44 34.49 L20.11 31.19 L19.79 30.71 L19.46 33.06 L19.14 36.67 L18.82 37.76 L18.49 39.96 L18.17 43.1 L17.84 42.76 L17.52 39.32 L17.19 39.04 L16.87 35.9 L16.55 36.25 L16.22 39.25 L15.9 40.91 L15.57 41.93 L15.25 40.39 L14.92 38.48 L14.6 36.99 L14.27 34.17 L13.95 32.17 L13.63 33.35 L13.3 33.25 L12.98 32.66 L12.65 37.16 L12.33 42.87 L12 46.34 L11.68 47.94 L11.35 49.22 L11.03 45.95 L10.71 43.19 L10.38 38.01 L10.06 34.22 L9.73 34.08 L9.41 33.06 L9.08 35.9 L8.76 39.65 L8.43 41.61 L8.11 46.08 L7.79 46.62 L7.46 44.71 L7.14 39.17 L6.81 35 L6.49 33.89 L6.16 37.26 L5.84 40.45 L5.52 44.47 L5.19 42.02 L4.87 38.62 L4.54 35.02 L4.22 30.44 L3.89 30.3 L3.57 30.26 L3.24 30.23 L2.92 31.84 L2.6 36.03 L2.27 37.06 L1.95 39.47 L1.62 38.16 L1.3 35.71 L0.97 33.78 L0.65 31.01 L0.32 28.49 L0 27.41Z" fill="#963a06"/></svg></div>
<div class="cl" style="left:411.05px;top:48.1px;height:94.9px;background:#bd4b05"><span class="n" style="color:#ffe6cc">Bass Biza</span><svg style="left:100.4px;top:4.6px" width="13" height="15"><path d="M0.3 0.3 L12.2 7 L0.3 13.8Z" fill="rgba(255,255,255,.56)"/></svg><svg style="left:10.3px;top:26.5px" width="97" height="50" viewBox="0 0 97 50"><path d="M0 22.28 L0.32 21.18 L0.65 18.64 L0.97 16.02 L1.3 13.17 L1.62 10.16 L1.95 10.8 L2.27 12.03 L2.6 14.32 L2.92 18.31 L3.24 19.44 L3.57 19.49 L3.89 19.5 L4.22 19.47 L4.54 14.73 L4.87 10.95 L5.19 7.62 L5.52 6.1 L5.84 8.92 L6.16 12.09 L6.49 16.07 L6.81 14.11 L7.14 9.73 L7.46 5.98 L7.79 2.56 L8.11 3.21 L8.43 6.17 L8.76 9.52 L9.08 13.8 L9.41 15.87 L9.73 15.72 L10.06 15.61 L10.38 10.38 L10.71 6.44 L11.03 3.06 L11.35 0.5 L11.68 0.5 L12 3.51 L12.33 7.09 L12.65 11.24 L12.98 16.4 L13.3 16.65 L13.63 16.92 L13.95 17.21 L14.27 15.38 L14.6 12.7 L14.92 10.53 L15.25 8.59 L15.57 6.8 L15.9 8.06 L16.22 10.39 L16.55 12.88 L16.87 13.4 L17.19 11.01 L17.52 8.81 L17.84 6.71 L18.17 6.86 L18.49 8.9 L18.82 11.07 L19.14 13.43 L19.46 16.22 L19.79 18.73 L20.11 18.49 L20.44 15.43 L20.76 11.71 L21.09 8.54 L21.41 5.66 L21.74 2.95 L22.06 3.93 L22.38 6.16 L22.71 8.65 L23.03 11.54 L23.36 10.56 L23.68 7.28 L24.01 4.39 L24.33 1.76 L24.66 2.09 L24.98 4.68 L25.3 7.54 L25.63 10.84 L25.95 15.47 L26.28 15.95 L26.6 14.69 L26.93 13.08 L27.25 11.8 L27.58 10.68 L27.9 9.68 L28.22 9.67 L28.55 11.23 L28.87 12.87 L29.2 14.63 L29.52 16.62 L29.85 18.82 L30.17 16.06 L30.49 13.12 L30.82 10.62 L31.14 8.33 L31.47 6.16 L31.79 6.02 L32.12 8.21 L32.44 10.51 L32.77 13.01 L33.09 15.92 L33.41 18.95 L33.74 18.74 L34.06 15.35 L34.39 10.84 L34.71 7.05 L35.04 3.6 L35.36 1.82 L35.69 4.57 L36.01 7.61 L36.33 11.14 L36.66 16.29 L36.98 16.08 L37.31 12.5 L37.63 9.99 L37.96 7.8 L38.28 5.83 L38.61 4.01 L38.93 4.73 L39.25 6.61 L39.58 8.66 L39.9 10.95 L40.23 13.7 L40.55 16.15 L40.88 16.38 L41.2 13.53 L41.53 11.51 L41.85 9.79 L42.17 8.95 L42.5 11.13 L42.82 13.51 L43.15 16.29 L43.47 12.26 L43.8 8.79 L44.12 5.71 L44.44 2.85 L44.77 5.27 L45.09 8.58 L45.42 12.22 L45.74 16.59 L46.07 19.47 L46.39 19.4 L46.72 19.29 L47.04 17.46 L47.36 14.51 L47.69 12.04 L48.01 9.78 L48.34 7.64 L48.66 9.01 L48.99 10.72 L49.31 12.64 L49.64 15.02 L49.96 15.04 L50.28 11.98 L50.61 9.45 L50.93 7.18 L51.26 5.09 L51.58 6.09 L51.91 7.95 L52.23 10.05 L52.56 12.54 L52.88 15.51 L53.2 15.56 L53.53 12.43 L53.85 8.82 L54.18 5.85 L54.5 3.21 L54.83 0.79 L55.15 2.5 L55.47 5.51 L55.8 8.78 L56.12 12.47 L56.45 17.75 L56.77 18.04 L57.1 15.69 L57.42 12.55 L57.75 9.97 L58.07 7.64 L58.39 5.45 L58.72 3.88 L59.04 6.24 L59.37 8.7 L59.69 11.31 L60.02 14.19 L60.34 16.25 L60.67 14.31 L60.99 12.53 L61.31 10.84 L61.64 9.37 L61.96 10.56 L62.29 11.81 L62.61 13.19 L62.94 14.77 L63.26 17.04 L63.59 17.11 L63.91 15.41 L64.23 10.71 L64.56 7.03 L64.88 3.77 L65.21 0.78 L65.53 1.28 L65.86 4.01 L66.18 7.04 L66.51 10.57 L66.83 13.51 L67.15 11.39 L67.48 9.64 L67.8 8.11 L68.13 6.73 L68.45 7.02 L68.78 8.8 L69.1 10.72 L69.42 12.83 L69.75 15.32 L70.07 17.45 L70.4 15.18 L70.72 12.41 L71.05 10.13 L71.37 8.08 L71.7 10.45 L72.02 13.19 L72.34 16.37 L72.67 19.32 L72.99 19.42 L73.32 19.48 L73.64 19.5 L73.97 17.51 L74.29 12 L74.62 7.65 L74.94 3.73 L75.26 4.15 L75.59 7.77 L75.91 11.88 L76.24 17.66 L76.56 17.99 L76.89 17.7 L77.21 15.29 L77.54 11.57 L77.86 8.5 L78.18 5.73 L78.51 6.16 L78.83 8.51 L79.16 11.22 L79.48 12.05 L79.81 8.84 L80.13 6.09 L80.45 3.62 L80.78 1.35 L81.1 2.08 L81.43 4.48 L81.75 7.1 L82.08 10.03 L82.4 13.55 L82.73 15.42 L83.05 10.97 L83.37 7.72 L83.7 4.9 L84.02 5.55 L84.35 8.98 L84.67 12.85 L85 18.29 L85.32 18.55 L85.65 18.79 L85.97 19 L86.29 19.17 L86.62 17.02 L86.94 14.77 L87.27 12.84 L87.59 11.05 L87.92 9.34 L88.24 9.2 L88.57 10.78 L88.89 12.44 L89.21 14.24 L89.54 16.36 L89.86 18.54 L90.19 15.96 L90.51 13.03 L90.84 10.52 L91.16 8.22 L91.48 6.05 L91.81 4.6 L92.13 6.14 L92.46 7.81 L92.78 9.66 L93.11 11.8 L93.43 10.24 L93.76 8.55 L94.08 7 L94.4 8.11 L94.73 10.57 L95.05 13.36 L95.38 16.11 L95.7 18.65 L96.03 19.52 L96.35 20.39 L96.68 21.24 L97 22.06 L97 27.81 L96.68 28.67 L96.35 29.41 L96.03 30.69 L95.7 30.74 L95.38 33.93 L95.05 35.84 L94.73 38.53 L94.4 40.33 L94.08 41.94 L93.76 40.74 L93.43 38.04 L93.11 37.07 L92.78 39.15 L92.46 41.73 L92.13 44.17 L91.81 44.3 L91.48 43.81 L91.16 40.56 L90.84 39.95 L90.51 36.85 L90.19 33.29 L89.86 31.01 L89.54 33.41 L89.21 34.81 L88.89 36.59 L88.57 37.94 L88.24 40.72 L87.92 39.89 L87.59 38.43 L87.27 37.48 L86.94 35.23 L86.62 32.15 L86.29 30.27 L85.97 31.14 L85.65 31.11 L85.32 31.17 L85 31.46 L84.67 37 L84.35 41.04 L84.02 44.27 L83.7 43.2 L83.37 42.27 L83.05 38.27 L82.73 34.92 L82.4 35.99 L82.08 38.37 L81.75 41.95 L81.43 44.21 L81.1 46.63 L80.78 47.21 L80.45 45.16 L80.13 43.92 L79.81 40.82 L79.48 36.91 L79.16 37.52 L78.83 40.15 L78.51 44.07 L78.18 43.7 L77.86 40.37 L77.54 36.95 L77.21 35 L76.89 32.3 L76.56 31.29 L76.24 32.3 L75.91 37.62 L75.59 42.28 L75.26 43.47 L74.94 46.43 L74.62 41.87 L74.29 38.42 L73.97 32.6 L73.64 30.43 L73.32 30.6 L72.99 30.02 L72.67 30.76 L72.34 32.63 L72.02 35.73 L71.7 39.85 L71.37 40.16 L71.05 38.3 L70.72 36.17 L70.4 34.85 L70.07 31.82 L69.75 33.52 L69.42 36.85 L69.1 37.81 L68.78 40.72 L68.45 42.93 L68.13 43.03 L67.8 42 L67.48 40.69 L67.15 38.42 L66.83 36.6 L66.51 37.98 L66.18 42.13 L65.86 44.35 L65.53 48.88 L65.21 49.8 L64.88 44.95 L64.56 43.5 L64.23 39.59 L63.91 34.09 L63.59 32.48 L63.26 32.1 L62.94 35.14 L62.61 36.41 L62.29 37.12 L61.96 38.78 L61.64 40.49 L61.31 38.42 L60.99 37.38 L60.67 35.26 L60.34 33.22 L60.02 35.26 L59.69 38.42 L59.37 41.44 L59.04 42.65 L58.72 46.23 L58.39 44.09 L58.07 41.31 L57.75 38.65 L57.42 36.11 L57.1 33.76 L56.77 31.92 L56.45 32.02 L56.12 36.27 L55.8 40.13 L55.47 42.75 L55.15 46.1 L54.83 48.57 L54.5 46.43 L54.18 42.93 L53.85 40.05 L53.53 36.69 L53.2 34.07 L52.88 33.48 L52.56 37.66 L52.23 40.49 L51.91 40.19 L51.58 42.02 L51.26 42.93 L50.93 40.84 L50.61 38.69 L50.28 38.07 L49.96 34.52 L49.64 34.46 L49.31 36.92 L48.99 38.18 L48.66 39.77 L48.34 40.41 L48.01 40.5 L47.69 37.71 L47.36 34.25 L47.04 32.63 L46.72 30.76 L46.39 30.75 L46.07 30.57 L45.74 32.63 L45.42 37.92 L45.09 40.85 L44.77 42.98 L44.44 45.73 L44.12 44.39 L43.8 40.5 L43.47 37.97 L43.15 33.01 L42.82 35.74 L42.5 38.56 L42.17 41.54 L41.85 39.39 L41.53 38.01 L41.2 36.31 L40.88 33 L40.55 33.03 L40.23 36.29 L39.9 37.39 L39.58 40.89 L39.25 43.83 L38.93 45.74 L38.61 46.57 L38.28 44 L37.96 42.62 L37.63 38.32 L37.31 37.62 L36.98 33.26 L36.66 33.48 L36.33 37.35 L36.01 40.94 L35.69 44.09 L35.36 46.47 L35.04 45.61 L34.71 42.7 L34.39 39.35 L34.06 34.64 L33.74 30.73 L33.41 31.22 L33.09 34.37 L32.77 36.38 L32.44 40.04 L32.12 42.14 L31.79 44.57 L31.47 41.6 L31.14 40.09 L30.82 39.77 L30.49 36.23 L30.17 33.47 L29.85 30.85 L29.52 32.84 L29.2 34.57 L28.87 37.22 L28.55 37.76 L28.22 38.81 L27.9 39.33 L27.58 39.44 L27.25 37.97 L26.93 37.03 L26.6 34.53 L26.28 33.23 L25.95 34.67 L25.63 39.29 L25.3 40.89 L24.98 44.6 L24.66 45.61 L24.33 46.29 L24.01 44.62 L23.68 43.1 L23.36 39.21 L23.03 37.57 L22.71 39.83 L22.38 44.15 L22.06 45.02 L21.74 47.34 L21.41 43.06 L21.09 40.33 L20.76 36.91 L20.44 34.49 L20.11 31.19 L19.79 30.71 L19.46 33.06 L19.14 36.67 L18.82 37.76 L18.49 39.96 L18.17 43.1 L17.84 42.76 L17.52 39.32 L17.19 39.04 L16.87 35.9 L16.55 36.25 L16.22 39.25 L15.9 40.91 L15.57 41.93 L15.25 40.39 L14.92 38.48 L14.6 36.99 L14.27 34.17 L13.95 32.17 L13.63 33.35 L13.3 33.25 L12.98 32.66 L12.65 37.16 L12.33 42.87 L12 46.34 L11.68 47.94 L11.35 49.22 L11.03 45.95 L10.71 43.19 L10.38 38.01 L10.06 34.22 L9.73 34.08 L9.41 33.06 L9.08 35.9 L8.76 39.65 L8.43 41.61 L8.11 46.08 L7.79 46.62 L7.46 44.71 L7.14 39.17 L6.81 35 L6.49 33.89 L6.16 37.26 L5.84 40.45 L5.52 44.47 L5.19 42.02 L4.87 38.62 L4.54 35.02 L4.22 30.44 L3.89 30.3 L3.57 30.26 L3.24 30.23 L2.92 31.84 L2.6 36.03 L2.27 37.06 L1.95 39.47 L1.62 38.16 L1.3 35.71 L0.97 33.78 L0.65 31.01 L0.32 28.49 L0 27.41Z" fill="#963a06"/></svg></div>
<div class="cl" style="left:530.5px;top:48.1px;height:94.9px;background:#ff8128;box-shadow:0 0 0 1.2px rgba(10,12,14,.5), inset 0 0 0 1.3px rgba(255,255,255,.28)"><div class="st" style="background:#d9671f"></div><span class="n" style="color:#ffe6cc">Bass Biza</span><svg style="left:100.4px;top:4.6px" width="13" height="15"><path d="M0.3 0.3 L12.2 7 L0.3 13.8Z" fill="#fff"/></svg><svg style="left:10.3px;top:26.5px" width="97" height="50" viewBox="0 0 97 50"><path d="M0 22.28 L0.32 21.18 L0.65 18.64 L0.97 16.02 L1.3 13.17 L1.62 10.16 L1.95 10.8 L2.27 12.03 L2.6 14.32 L2.92 18.31 L3.24 19.44 L3.57 19.49 L3.89 19.5 L4.22 19.47 L4.54 14.73 L4.87 10.95 L5.19 7.62 L5.52 6.1 L5.84 8.92 L6.16 12.09 L6.49 16.07 L6.81 14.11 L7.14 9.73 L7.46 5.98 L7.79 2.56 L8.11 3.21 L8.43 6.17 L8.76 9.52 L9.08 13.8 L9.41 15.87 L9.73 15.72 L10.06 15.61 L10.38 10.38 L10.71 6.44 L11.03 3.06 L11.35 0.5 L11.68 0.5 L12 3.51 L12.33 7.09 L12.65 11.24 L12.98 16.4 L13.3 16.65 L13.63 16.92 L13.95 17.21 L14.27 15.38 L14.6 12.7 L14.92 10.53 L15.25 8.59 L15.57 6.8 L15.9 8.06 L16.22 10.39 L16.55 12.88 L16.87 13.4 L17.19 11.01 L17.52 8.81 L17.84 6.71 L18.17 6.86 L18.49 8.9 L18.82 11.07 L19.14 13.43 L19.46 16.22 L19.79 18.73 L20.11 18.49 L20.44 15.43 L20.76 11.71 L21.09 8.54 L21.41 5.66 L21.74 2.95 L22.06 3.93 L22.38 6.16 L22.71 8.65 L23.03 11.54 L23.36 10.56 L23.68 7.28 L24.01 4.39 L24.33 1.76 L24.66 2.09 L24.98 4.68 L25.3 7.54 L25.63 10.84 L25.95 15.47 L26.28 15.95 L26.6 14.69 L26.93 13.08 L27.25 11.8 L27.58 10.68 L27.9 9.68 L28.22 9.67 L28.55 11.23 L28.87 12.87 L29.2 14.63 L29.52 16.62 L29.85 18.82 L30.17 16.06 L30.49 13.12 L30.82 10.62 L31.14 8.33 L31.47 6.16 L31.79 6.02 L32.12 8.21 L32.44 10.51 L32.77 13.01 L33.09 15.92 L33.41 18.95 L33.74 18.74 L34.06 15.35 L34.39 10.84 L34.71 7.05 L35.04 3.6 L35.36 1.82 L35.69 4.57 L36.01 7.61 L36.33 11.14 L36.66 16.29 L36.98 16.08 L37.31 12.5 L37.63 9.99 L37.96 7.8 L38.28 5.83 L38.61 4.01 L38.93 4.73 L39.25 6.61 L39.58 8.66 L39.9 10.95 L40.23 13.7 L40.55 16.15 L40.88 16.38 L41.2 13.53 L41.53 11.51 L41.85 9.79 L42.17 8.95 L42.5 11.13 L42.82 13.51 L43.15 16.29 L43.47 12.26 L43.8 8.79 L44.12 5.71 L44.44 2.85 L44.77 5.27 L45.09 8.58 L45.42 12.22 L45.74 16.59 L46.07 19.47 L46.39 19.4 L46.72 19.29 L47.04 17.46 L47.36 14.51 L47.69 12.04 L48.01 9.78 L48.34 7.64 L48.66 9.01 L48.99 10.72 L49.31 12.64 L49.64 15.02 L49.96 15.04 L50.28 11.98 L50.61 9.45 L50.93 7.18 L51.26 5.09 L51.58 6.09 L51.91 7.95 L52.23 10.05 L52.56 12.54 L52.88 15.51 L53.2 15.56 L53.53 12.43 L53.85 8.82 L54.18 5.85 L54.5 3.21 L54.83 0.79 L55.15 2.5 L55.47 5.51 L55.8 8.78 L56.12 12.47 L56.45 17.75 L56.77 18.04 L57.1 15.69 L57.42 12.55 L57.75 9.97 L58.07 7.64 L58.39 5.45 L58.72 3.88 L59.04 6.24 L59.37 8.7 L59.69 11.31 L60.02 14.19 L60.34 16.25 L60.67 14.31 L60.99 12.53 L61.31 10.84 L61.64 9.37 L61.96 10.56 L62.29 11.81 L62.61 13.19 L62.94 14.77 L63.26 17.04 L63.59 17.11 L63.91 15.41 L64.23 10.71 L64.56 7.03 L64.88 3.77 L65.21 0.78 L65.53 1.28 L65.86 4.01 L66.18 7.04 L66.51 10.57 L66.83 13.51 L67.15 11.39 L67.48 9.64 L67.8 8.11 L68.13 6.73 L68.45 7.02 L68.78 8.8 L69.1 10.72 L69.42 12.83 L69.75 15.32 L70.07 17.45 L70.4 15.18 L70.72 12.41 L71.05 10.13 L71.37 8.08 L71.7 10.45 L72.02 13.19 L72.34 16.37 L72.67 19.32 L72.99 19.42 L73.32 19.48 L73.64 19.5 L73.97 17.51 L74.29 12 L74.62 7.65 L74.94 3.73 L75.26 4.15 L75.59 7.77 L75.91 11.88 L76.24 17.66 L76.56 17.99 L76.89 17.7 L77.21 15.29 L77.54 11.57 L77.86 8.5 L78.18 5.73 L78.51 6.16 L78.83 8.51 L79.16 11.22 L79.48 12.05 L79.81 8.84 L80.13 6.09 L80.45 3.62 L80.78 1.35 L81.1 2.08 L81.43 4.48 L81.75 7.1 L82.08 10.03 L82.4 13.55 L82.73 15.42 L83.05 10.97 L83.37 7.72 L83.7 4.9 L84.02 5.55 L84.35 8.98 L84.67 12.85 L85 18.29 L85.32 18.55 L85.65 18.79 L85.97 19 L86.29 19.17 L86.62 17.02 L86.94 14.77 L87.27 12.84 L87.59 11.05 L87.92 9.34 L88.24 9.2 L88.57 10.78 L88.89 12.44 L89.21 14.24 L89.54 16.36 L89.86 18.54 L90.19 15.96 L90.51 13.03 L90.84 10.52 L91.16 8.22 L91.48 6.05 L91.81 4.6 L92.13 6.14 L92.46 7.81 L92.78 9.66 L93.11 11.8 L93.43 10.24 L93.76 8.55 L94.08 7 L94.4 8.11 L94.73 10.57 L95.05 13.36 L95.38 16.11 L95.7 18.65 L96.03 19.52 L96.35 20.39 L96.68 21.24 L97 22.06 L97 27.81 L96.68 28.67 L96.35 29.41 L96.03 30.69 L95.7 30.74 L95.38 33.93 L95.05 35.84 L94.73 38.53 L94.4 40.33 L94.08 41.94 L93.76 40.74 L93.43 38.04 L93.11 37.07 L92.78 39.15 L92.46 41.73 L92.13 44.17 L91.81 44.3 L91.48 43.81 L91.16 40.56 L90.84 39.95 L90.51 36.85 L90.19 33.29 L89.86 31.01 L89.54 33.41 L89.21 34.81 L88.89 36.59 L88.57 37.94 L88.24 40.72 L87.92 39.89 L87.59 38.43 L87.27 37.48 L86.94 35.23 L86.62 32.15 L86.29 30.27 L85.97 31.14 L85.65 31.11 L85.32 31.17 L85 31.46 L84.67 37 L84.35 41.04 L84.02 44.27 L83.7 43.2 L83.37 42.27 L83.05 38.27 L82.73 34.92 L82.4 35.99 L82.08 38.37 L81.75 41.95 L81.43 44.21 L81.1 46.63 L80.78 47.21 L80.45 45.16 L80.13 43.92 L79.81 40.82 L79.48 36.91 L79.16 37.52 L78.83 40.15 L78.51 44.07 L78.18 43.7 L77.86 40.37 L77.54 36.95 L77.21 35 L76.89 32.3 L76.56 31.29 L76.24 32.3 L75.91 37.62 L75.59 42.28 L75.26 43.47 L74.94 46.43 L74.62 41.87 L74.29 38.42 L73.97 32.6 L73.64 30.43 L73.32 30.6 L72.99 30.02 L72.67 30.76 L72.34 32.63 L72.02 35.73 L71.7 39.85 L71.37 40.16 L71.05 38.3 L70.72 36.17 L70.4 34.85 L70.07 31.82 L69.75 33.52 L69.42 36.85 L69.1 37.81 L68.78 40.72 L68.45 42.93 L68.13 43.03 L67.8 42 L67.48 40.69 L67.15 38.42 L66.83 36.6 L66.51 37.98 L66.18 42.13 L65.86 44.35 L65.53 48.88 L65.21 49.8 L64.88 44.95 L64.56 43.5 L64.23 39.59 L63.91 34.09 L63.59 32.48 L63.26 32.1 L62.94 35.14 L62.61 36.41 L62.29 37.12 L61.96 38.78 L61.64 40.49 L61.31 38.42 L60.99 37.38 L60.67 35.26 L60.34 33.22 L60.02 35.26 L59.69 38.42 L59.37 41.44 L59.04 42.65 L58.72 46.23 L58.39 44.09 L58.07 41.31 L57.75 38.65 L57.42 36.11 L57.1 33.76 L56.77 31.92 L56.45 32.02 L56.12 36.27 L55.8 40.13 L55.47 42.75 L55.15 46.1 L54.83 48.57 L54.5 46.43 L54.18 42.93 L53.85 40.05 L53.53 36.69 L53.2 34.07 L52.88 33.48 L52.56 37.66 L52.23 40.49 L51.91 40.19 L51.58 42.02 L51.26 42.93 L50.93 40.84 L50.61 38.69 L50.28 38.07 L49.96 34.52 L49.64 34.46 L49.31 36.92 L48.99 38.18 L48.66 39.77 L48.34 40.41 L48.01 40.5 L47.69 37.71 L47.36 34.25 L47.04 32.63 L46.72 30.76 L46.39 30.75 L46.07 30.57 L45.74 32.63 L45.42 37.92 L45.09 40.85 L44.77 42.98 L44.44 45.73 L44.12 44.39 L43.8 40.5 L43.47 37.97 L43.15 33.01 L42.82 35.74 L42.5 38.56 L42.17 41.54 L41.85 39.39 L41.53 38.01 L41.2 36.31 L40.88 33 L40.55 33.03 L40.23 36.29 L39.9 37.39 L39.58 40.89 L39.25 43.83 L38.93 45.74 L38.61 46.57 L38.28 44 L37.96 42.62 L37.63 38.32 L37.31 37.62 L36.98 33.26 L36.66 33.48 L36.33 37.35 L36.01 40.94 L35.69 44.09 L35.36 46.47 L35.04 45.61 L34.71 42.7 L34.39 39.35 L34.06 34.64 L33.74 30.73 L33.41 31.22 L33.09 34.37 L32.77 36.38 L32.44 40.04 L32.12 42.14 L31.79 44.57 L31.47 41.6 L31.14 40.09 L30.82 39.77 L30.49 36.23 L30.17 33.47 L29.85 30.85 L29.52 32.84 L29.2 34.57 L28.87 37.22 L28.55 37.76 L28.22 38.81 L27.9 39.33 L27.58 39.44 L27.25 37.97 L26.93 37.03 L26.6 34.53 L26.28 33.23 L25.95 34.67 L25.63 39.29 L25.3 40.89 L24.98 44.6 L24.66 45.61 L24.33 46.29 L24.01 44.62 L23.68 43.1 L23.36 39.21 L23.03 37.57 L22.71 39.83 L22.38 44.15 L22.06 45.02 L21.74 47.34 L21.41 43.06 L21.09 40.33 L20.76 36.91 L20.44 34.49 L20.11 31.19 L19.79 30.71 L19.46 33.06 L19.14 36.67 L18.82 37.76 L18.49 39.96 L18.17 43.1 L17.84 42.76 L17.52 39.32 L17.19 39.04 L16.87 35.9 L16.55 36.25 L16.22 39.25 L15.9 40.91 L15.57 41.93 L15.25 40.39 L14.92 38.48 L14.6 36.99 L14.27 34.17 L13.95 32.17 L13.63 33.35 L13.3 33.25 L12.98 32.66 L12.65 37.16 L12.33 42.87 L12 46.34 L11.68 47.94 L11.35 49.22 L11.03 45.95 L10.71 43.19 L10.38 38.01 L10.06 34.22 L9.73 34.08 L9.41 33.06 L9.08 35.9 L8.76 39.65 L8.43 41.61 L8.11 46.08 L7.79 46.62 L7.46 44.71 L7.14 39.17 L6.81 35 L6.49 33.89 L6.16 37.26 L5.84 40.45 L5.52 44.47 L5.19 42.02 L4.87 38.62 L4.54 35.02 L4.22 30.44 L3.89 30.3 L3.57 30.26 L3.24 30.23 L2.92 31.84 L2.6 36.03 L2.27 37.06 L1.95 39.47 L1.62 38.16 L1.3 35.71 L0.97 33.78 L0.65 31.01 L0.32 28.49 L0 27.41Z" fill="#b85a18"/></svg><div class="pb"></div></div>
<div class="cl" style="left:649.95px;top:48.1px;height:94.9px;background:#bd4b05"><span class="n" style="color:#ffe6cc">Bass Biza</span><svg style="left:100.4px;top:4.6px" width="13" height="15"><path d="M0.3 0.3 L12.2 7 L0.3 13.8Z" fill="rgba(255,255,255,.56)"/></svg><svg style="left:10.3px;top:26.5px" width="97" height="50" viewBox="0 0 97 50"><path d="M0 22.28 L0.32 21.18 L0.65 18.64 L0.97 16.02 L1.3 13.17 L1.62 10.16 L1.95 10.8 L2.27 12.03 L2.6 14.32 L2.92 18.31 L3.24 19.44 L3.57 19.49 L3.89 19.5 L4.22 19.47 L4.54 14.73 L4.87 10.95 L5.19 7.62 L5.52 6.1 L5.84 8.92 L6.16 12.09 L6.49 16.07 L6.81 14.11 L7.14 9.73 L7.46 5.98 L7.79 2.56 L8.11 3.21 L8.43 6.17 L8.76 9.52 L9.08 13.8 L9.41 15.87 L9.73 15.72 L10.06 15.61 L10.38 10.38 L10.71 6.44 L11.03 3.06 L11.35 0.5 L11.68 0.5 L12 3.51 L12.33 7.09 L12.65 11.24 L12.98 16.4 L13.3 16.65 L13.63 16.92 L13.95 17.21 L14.27 15.38 L14.6 12.7 L14.92 10.53 L15.25 8.59 L15.57 6.8 L15.9 8.06 L16.22 10.39 L16.55 12.88 L16.87 13.4 L17.19 11.01 L17.52 8.81 L17.84 6.71 L18.17 6.86 L18.49 8.9 L18.82 11.07 L19.14 13.43 L19.46 16.22 L19.79 18.73 L20.11 18.49 L20.44 15.43 L20.76 11.71 L21.09 8.54 L21.41 5.66 L21.74 2.95 L22.06 3.93 L22.38 6.16 L22.71 8.65 L23.03 11.54 L23.36 10.56 L23.68 7.28 L24.01 4.39 L24.33 1.76 L24.66 2.09 L24.98 4.68 L25.3 7.54 L25.63 10.84 L25.95 15.47 L26.28 15.95 L26.6 14.69 L26.93 13.08 L27.25 11.8 L27.58 10.68 L27.9 9.68 L28.22 9.67 L28.55 11.23 L28.87 12.87 L29.2 14.63 L29.52 16.62 L29.85 18.82 L30.17 16.06 L30.49 13.12 L30.82 10.62 L31.14 8.33 L31.47 6.16 L31.79 6.02 L32.12 8.21 L32.44 10.51 L32.77 13.01 L33.09 15.92 L33.41 18.95 L33.74 18.74 L34.06 15.35 L34.39 10.84 L34.71 7.05 L35.04 3.6 L35.36 1.82 L35.69 4.57 L36.01 7.61 L36.33 11.14 L36.66 16.29 L36.98 16.08 L37.31 12.5 L37.63 9.99 L37.96 7.8 L38.28 5.83 L38.61 4.01 L38.93 4.73 L39.25 6.61 L39.58 8.66 L39.9 10.95 L40.23 13.7 L40.55 16.15 L40.88 16.38 L41.2 13.53 L41.53 11.51 L41.85 9.79 L42.17 8.95 L42.5 11.13 L42.82 13.51 L43.15 16.29 L43.47 12.26 L43.8 8.79 L44.12 5.71 L44.44 2.85 L44.77 5.27 L45.09 8.58 L45.42 12.22 L45.74 16.59 L46.07 19.47 L46.39 19.4 L46.72 19.29 L47.04 17.46 L47.36 14.51 L47.69 12.04 L48.01 9.78 L48.34 7.64 L48.66 9.01 L48.99 10.72 L49.31 12.64 L49.64 15.02 L49.96 15.04 L50.28 11.98 L50.61 9.45 L50.93 7.18 L51.26 5.09 L51.58 6.09 L51.91 7.95 L52.23 10.05 L52.56 12.54 L52.88 15.51 L53.2 15.56 L53.53 12.43 L53.85 8.82 L54.18 5.85 L54.5 3.21 L54.83 0.79 L55.15 2.5 L55.47 5.51 L55.8 8.78 L56.12 12.47 L56.45 17.75 L56.77 18.04 L57.1 15.69 L57.42 12.55 L57.75 9.97 L58.07 7.64 L58.39 5.45 L58.72 3.88 L59.04 6.24 L59.37 8.7 L59.69 11.31 L60.02 14.19 L60.34 16.25 L60.67 14.31 L60.99 12.53 L61.31 10.84 L61.64 9.37 L61.96 10.56 L62.29 11.81 L62.61 13.19 L62.94 14.77 L63.26 17.04 L63.59 17.11 L63.91 15.41 L64.23 10.71 L64.56 7.03 L64.88 3.77 L65.21 0.78 L65.53 1.28 L65.86 4.01 L66.18 7.04 L66.51 10.57 L66.83 13.51 L67.15 11.39 L67.48 9.64 L67.8 8.11 L68.13 6.73 L68.45 7.02 L68.78 8.8 L69.1 10.72 L69.42 12.83 L69.75 15.32 L70.07 17.45 L70.4 15.18 L70.72 12.41 L71.05 10.13 L71.37 8.08 L71.7 10.45 L72.02 13.19 L72.34 16.37 L72.67 19.32 L72.99 19.42 L73.32 19.48 L73.64 19.5 L73.97 17.51 L74.29 12 L74.62 7.65 L74.94 3.73 L75.26 4.15 L75.59 7.77 L75.91 11.88 L76.24 17.66 L76.56 17.99 L76.89 17.7 L77.21 15.29 L77.54 11.57 L77.86 8.5 L78.18 5.73 L78.51 6.16 L78.83 8.51 L79.16 11.22 L79.48 12.05 L79.81 8.84 L80.13 6.09 L80.45 3.62 L80.78 1.35 L81.1 2.08 L81.43 4.48 L81.75 7.1 L82.08 10.03 L82.4 13.55 L82.73 15.42 L83.05 10.97 L83.37 7.72 L83.7 4.9 L84.02 5.55 L84.35 8.98 L84.67 12.85 L85 18.29 L85.32 18.55 L85.65 18.79 L85.97 19 L86.29 19.17 L86.62 17.02 L86.94 14.77 L87.27 12.84 L87.59 11.05 L87.92 9.34 L88.24 9.2 L88.57 10.78 L88.89 12.44 L89.21 14.24 L89.54 16.36 L89.86 18.54 L90.19 15.96 L90.51 13.03 L90.84 10.52 L91.16 8.22 L91.48 6.05 L91.81 4.6 L92.13 6.14 L92.46 7.81 L92.78 9.66 L93.11 11.8 L93.43 10.24 L93.76 8.55 L94.08 7 L94.4 8.11 L94.73 10.57 L95.05 13.36 L95.38 16.11 L95.7 18.65 L96.03 19.52 L96.35 20.39 L96.68 21.24 L97 22.06 L97 27.81 L96.68 28.67 L96.35 29.41 L96.03 30.69 L95.7 30.74 L95.38 33.93 L95.05 35.84 L94.73 38.53 L94.4 40.33 L94.08 41.94 L93.76 40.74 L93.43 38.04 L93.11 37.07 L92.78 39.15 L92.46 41.73 L92.13 44.17 L91.81 44.3 L91.48 43.81 L91.16 40.56 L90.84 39.95 L90.51 36.85 L90.19 33.29 L89.86 31.01 L89.54 33.41 L89.21 34.81 L88.89 36.59 L88.57 37.94 L88.24 40.72 L87.92 39.89 L87.59 38.43 L87.27 37.48 L86.94 35.23 L86.62 32.15 L86.29 30.27 L85.97 31.14 L85.65 31.11 L85.32 31.17 L85 31.46 L84.67 37 L84.35 41.04 L84.02 44.27 L83.7 43.2 L83.37 42.27 L83.05 38.27 L82.73 34.92 L82.4 35.99 L82.08 38.37 L81.75 41.95 L81.43 44.21 L81.1 46.63 L80.78 47.21 L80.45 45.16 L80.13 43.92 L79.81 40.82 L79.48 36.91 L79.16 37.52 L78.83 40.15 L78.51 44.07 L78.18 43.7 L77.86 40.37 L77.54 36.95 L77.21 35 L76.89 32.3 L76.56 31.29 L76.24 32.3 L75.91 37.62 L75.59 42.28 L75.26 43.47 L74.94 46.43 L74.62 41.87 L74.29 38.42 L73.97 32.6 L73.64 30.43 L73.32 30.6 L72.99 30.02 L72.67 30.76 L72.34 32.63 L72.02 35.73 L71.7 39.85 L71.37 40.16 L71.05 38.3 L70.72 36.17 L70.4 34.85 L70.07 31.82 L69.75 33.52 L69.42 36.85 L69.1 37.81 L68.78 40.72 L68.45 42.93 L68.13 43.03 L67.8 42 L67.48 40.69 L67.15 38.42 L66.83 36.6 L66.51 37.98 L66.18 42.13 L65.86 44.35 L65.53 48.88 L65.21 49.8 L64.88 44.95 L64.56 43.5 L64.23 39.59 L63.91 34.09 L63.59 32.48 L63.26 32.1 L62.94 35.14 L62.61 36.41 L62.29 37.12 L61.96 38.78 L61.64 40.49 L61.31 38.42 L60.99 37.38 L60.67 35.26 L60.34 33.22 L60.02 35.26 L59.69 38.42 L59.37 41.44 L59.04 42.65 L58.72 46.23 L58.39 44.09 L58.07 41.31 L57.75 38.65 L57.42 36.11 L57.1 33.76 L56.77 31.92 L56.45 32.02 L56.12 36.27 L55.8 40.13 L55.47 42.75 L55.15 46.1 L54.83 48.57 L54.5 46.43 L54.18 42.93 L53.85 40.05 L53.53 36.69 L53.2 34.07 L52.88 33.48 L52.56 37.66 L52.23 40.49 L51.91 40.19 L51.58 42.02 L51.26 42.93 L50.93 40.84 L50.61 38.69 L50.28 38.07 L49.96 34.52 L49.64 34.46 L49.31 36.92 L48.99 38.18 L48.66 39.77 L48.34 40.41 L48.01 40.5 L47.69 37.71 L47.36 34.25 L47.04 32.63 L46.72 30.76 L46.39 30.75 L46.07 30.57 L45.74 32.63 L45.42 37.92 L45.09 40.85 L44.77 42.98 L44.44 45.73 L44.12 44.39 L43.8 40.5 L43.47 37.97 L43.15 33.01 L42.82 35.74 L42.5 38.56 L42.17 41.54 L41.85 39.39 L41.53 38.01 L41.2 36.31 L40.88 33 L40.55 33.03 L40.23 36.29 L39.9 37.39 L39.58 40.89 L39.25 43.83 L38.93 45.74 L38.61 46.57 L38.28 44 L37.96 42.62 L37.63 38.32 L37.31 37.62 L36.98 33.26 L36.66 33.48 L36.33 37.35 L36.01 40.94 L35.69 44.09 L35.36 46.47 L35.04 45.61 L34.71 42.7 L34.39 39.35 L34.06 34.64 L33.74 30.73 L33.41 31.22 L33.09 34.37 L32.77 36.38 L32.44 40.04 L32.12 42.14 L31.79 44.57 L31.47 41.6 L31.14 40.09 L30.82 39.77 L30.49 36.23 L30.17 33.47 L29.85 30.85 L29.52 32.84 L29.2 34.57 L28.87 37.22 L28.55 37.76 L28.22 38.81 L27.9 39.33 L27.58 39.44 L27.25 37.97 L26.93 37.03 L26.6 34.53 L26.28 33.23 L25.95 34.67 L25.63 39.29 L25.3 40.89 L24.98 44.6 L24.66 45.61 L24.33 46.29 L24.01 44.62 L23.68 43.1 L23.36 39.21 L23.03 37.57 L22.71 39.83 L22.38 44.15 L22.06 45.02 L21.74 47.34 L21.41 43.06 L21.09 40.33 L20.76 36.91 L20.44 34.49 L20.11 31.19 L19.79 30.71 L19.46 33.06 L19.14 36.67 L18.82 37.76 L18.49 39.96 L18.17 43.1 L17.84 42.76 L17.52 39.32 L17.19 39.04 L16.87 35.9 L16.55 36.25 L16.22 39.25 L15.9 40.91 L15.57 41.93 L15.25 40.39 L14.92 38.48 L14.6 36.99 L14.27 34.17 L13.95 32.17 L13.63 33.35 L13.3 33.25 L12.98 32.66 L12.65 37.16 L12.33 42.87 L12 46.34 L11.68 47.94 L11.35 49.22 L11.03 45.95 L10.71 43.19 L10.38 38.01 L10.06 34.22 L9.73 34.08 L9.41 33.06 L9.08 35.9 L8.76 39.65 L8.43 41.61 L8.11 46.08 L7.79 46.62 L7.46 44.71 L7.14 39.17 L6.81 35 L6.49 33.89 L6.16 37.26 L5.84 40.45 L5.52 44.47 L5.19 42.02 L4.87 38.62 L4.54 35.02 L4.22 30.44 L3.89 30.3 L3.57 30.26 L3.24 30.23 L2.92 31.84 L2.6 36.03 L2.27 37.06 L1.95 39.47 L1.62 38.16 L1.3 35.71 L0.97 33.78 L0.65 31.01 L0.32 28.49 L0 27.41Z" fill="#963a06"/></svg></div>
<div class="cl" style="left:769.4px;top:48.1px;height:94.9px;background:#bd4b05"><span class="n" style="color:#ffe6cc">Bass Biza</span><svg style="left:100.4px;top:4.6px" width="13" height="15"><path d="M0.3 0.3 L12.2 7 L0.3 13.8Z" fill="rgba(255,255,255,.56)"/></svg><svg style="left:10.3px;top:26.5px" width="97" height="50" viewBox="0 0 97 50"><path d="M0 22.28 L0.32 21.18 L0.65 18.64 L0.97 16.02 L1.3 13.17 L1.62 10.16 L1.95 10.8 L2.27 12.03 L2.6 14.32 L2.92 18.31 L3.24 19.44 L3.57 19.49 L3.89 19.5 L4.22 19.47 L4.54 14.73 L4.87 10.95 L5.19 7.62 L5.52 6.1 L5.84 8.92 L6.16 12.09 L6.49 16.07 L6.81 14.11 L7.14 9.73 L7.46 5.98 L7.79 2.56 L8.11 3.21 L8.43 6.17 L8.76 9.52 L9.08 13.8 L9.41 15.87 L9.73 15.72 L10.06 15.61 L10.38 10.38 L10.71 6.44 L11.03 3.06 L11.35 0.5 L11.68 0.5 L12 3.51 L12.33 7.09 L12.65 11.24 L12.98 16.4 L13.3 16.65 L13.63 16.92 L13.95 17.21 L14.27 15.38 L14.6 12.7 L14.92 10.53 L15.25 8.59 L15.57 6.8 L15.9 8.06 L16.22 10.39 L16.55 12.88 L16.87 13.4 L17.19 11.01 L17.52 8.81 L17.84 6.71 L18.17 6.86 L18.49 8.9 L18.82 11.07 L19.14 13.43 L19.46 16.22 L19.79 18.73 L20.11 18.49 L20.44 15.43 L20.76 11.71 L21.09 8.54 L21.41 5.66 L21.74 2.95 L22.06 3.93 L22.38 6.16 L22.71 8.65 L23.03 11.54 L23.36 10.56 L23.68 7.28 L24.01 4.39 L24.33 1.76 L24.66 2.09 L24.98 4.68 L25.3 7.54 L25.63 10.84 L25.95 15.47 L26.28 15.95 L26.6 14.69 L26.93 13.08 L27.25 11.8 L27.58 10.68 L27.9 9.68 L28.22 9.67 L28.55 11.23 L28.87 12.87 L29.2 14.63 L29.52 16.62 L29.85 18.82 L30.17 16.06 L30.49 13.12 L30.82 10.62 L31.14 8.33 L31.47 6.16 L31.79 6.02 L32.12 8.21 L32.44 10.51 L32.77 13.01 L33.09 15.92 L33.41 18.95 L33.74 18.74 L34.06 15.35 L34.39 10.84 L34.71 7.05 L35.04 3.6 L35.36 1.82 L35.69 4.57 L36.01 7.61 L36.33 11.14 L36.66 16.29 L36.98 16.08 L37.31 12.5 L37.63 9.99 L37.96 7.8 L38.28 5.83 L38.61 4.01 L38.93 4.73 L39.25 6.61 L39.58 8.66 L39.9 10.95 L40.23 13.7 L40.55 16.15 L40.88 16.38 L41.2 13.53 L41.53 11.51 L41.85 9.79 L42.17 8.95 L42.5 11.13 L42.82 13.51 L43.15 16.29 L43.47 12.26 L43.8 8.79 L44.12 5.71 L44.44 2.85 L44.77 5.27 L45.09 8.58 L45.42 12.22 L45.74 16.59 L46.07 19.47 L46.39 19.4 L46.72 19.29 L47.04 17.46 L47.36 14.51 L47.69 12.04 L48.01 9.78 L48.34 7.64 L48.66 9.01 L48.99 10.72 L49.31 12.64 L49.64 15.02 L49.96 15.04 L50.28 11.98 L50.61 9.45 L50.93 7.18 L51.26 5.09 L51.58 6.09 L51.91 7.95 L52.23 10.05 L52.56 12.54 L52.88 15.51 L53.2 15.56 L53.53 12.43 L53.85 8.82 L54.18 5.85 L54.5 3.21 L54.83 0.79 L55.15 2.5 L55.47 5.51 L55.8 8.78 L56.12 12.47 L56.45 17.75 L56.77 18.04 L57.1 15.69 L57.42 12.55 L57.75 9.97 L58.07 7.64 L58.39 5.45 L58.72 3.88 L59.04 6.24 L59.37 8.7 L59.69 11.31 L60.02 14.19 L60.34 16.25 L60.67 14.31 L60.99 12.53 L61.31 10.84 L61.64 9.37 L61.96 10.56 L62.29 11.81 L62.61 13.19 L62.94 14.77 L63.26 17.04 L63.59 17.11 L63.91 15.41 L64.23 10.71 L64.56 7.03 L64.88 3.77 L65.21 0.78 L65.53 1.28 L65.86 4.01 L66.18 7.04 L66.51 10.57 L66.83 13.51 L67.15 11.39 L67.48 9.64 L67.8 8.11 L68.13 6.73 L68.45 7.02 L68.78 8.8 L69.1 10.72 L69.42 12.83 L69.75 15.32 L70.07 17.45 L70.4 15.18 L70.72 12.41 L71.05 10.13 L71.37 8.08 L71.7 10.45 L72.02 13.19 L72.34 16.37 L72.67 19.32 L72.99 19.42 L73.32 19.48 L73.64 19.5 L73.97 17.51 L74.29 12 L74.62 7.65 L74.94 3.73 L75.26 4.15 L75.59 7.77 L75.91 11.88 L76.24 17.66 L76.56 17.99 L76.89 17.7 L77.21 15.29 L77.54 11.57 L77.86 8.5 L78.18 5.73 L78.51 6.16 L78.83 8.51 L79.16 11.22 L79.48 12.05 L79.81 8.84 L80.13 6.09 L80.45 3.62 L80.78 1.35 L81.1 2.08 L81.43 4.48 L81.75 7.1 L82.08 10.03 L82.4 13.55 L82.73 15.42 L83.05 10.97 L83.37 7.72 L83.7 4.9 L84.02 5.55 L84.35 8.98 L84.67 12.85 L85 18.29 L85.32 18.55 L85.65 18.79 L85.97 19 L86.29 19.17 L86.62 17.02 L86.94 14.77 L87.27 12.84 L87.59 11.05 L87.92 9.34 L88.24 9.2 L88.57 10.78 L88.89 12.44 L89.21 14.24 L89.54 16.36 L89.86 18.54 L90.19 15.96 L90.51 13.03 L90.84 10.52 L91.16 8.22 L91.48 6.05 L91.81 4.6 L92.13 6.14 L92.46 7.81 L92.78 9.66 L93.11 11.8 L93.43 10.24 L93.76 8.55 L94.08 7 L94.4 8.11 L94.73 10.57 L95.05 13.36 L95.38 16.11 L95.7 18.65 L96.03 19.52 L96.35 20.39 L96.68 21.24 L97 22.06 L97 27.81 L96.68 28.67 L96.35 29.41 L96.03 30.69 L95.7 30.74 L95.38 33.93 L95.05 35.84 L94.73 38.53 L94.4 40.33 L94.08 41.94 L93.76 40.74 L93.43 38.04 L93.11 37.07 L92.78 39.15 L92.46 41.73 L92.13 44.17 L91.81 44.3 L91.48 43.81 L91.16 40.56 L90.84 39.95 L90.51 36.85 L90.19 33.29 L89.86 31.01 L89.54 33.41 L89.21 34.81 L88.89 36.59 L88.57 37.94 L88.24 40.72 L87.92 39.89 L87.59 38.43 L87.27 37.48 L86.94 35.23 L86.62 32.15 L86.29 30.27 L85.97 31.14 L85.65 31.11 L85.32 31.17 L85 31.46 L84.67 37 L84.35 41.04 L84.02 44.27 L83.7 43.2 L83.37 42.27 L83.05 38.27 L82.73 34.92 L82.4 35.99 L82.08 38.37 L81.75 41.95 L81.43 44.21 L81.1 46.63 L80.78 47.21 L80.45 45.16 L80.13 43.92 L79.81 40.82 L79.48 36.91 L79.16 37.52 L78.83 40.15 L78.51 44.07 L78.18 43.7 L77.86 40.37 L77.54 36.95 L77.21 35 L76.89 32.3 L76.56 31.29 L76.24 32.3 L75.91 37.62 L75.59 42.28 L75.26 43.47 L74.94 46.43 L74.62 41.87 L74.29 38.42 L73.97 32.6 L73.64 30.43 L73.32 30.6 L72.99 30.02 L72.67 30.76 L72.34 32.63 L72.02 35.73 L71.7 39.85 L71.37 40.16 L71.05 38.3 L70.72 36.17 L70.4 34.85 L70.07 31.82 L69.75 33.52 L69.42 36.85 L69.1 37.81 L68.78 40.72 L68.45 42.93 L68.13 43.03 L67.8 42 L67.48 40.69 L67.15 38.42 L66.83 36.6 L66.51 37.98 L66.18 42.13 L65.86 44.35 L65.53 48.88 L65.21 49.8 L64.88 44.95 L64.56 43.5 L64.23 39.59 L63.91 34.09 L63.59 32.48 L63.26 32.1 L62.94 35.14 L62.61 36.41 L62.29 37.12 L61.96 38.78 L61.64 40.49 L61.31 38.42 L60.99 37.38 L60.67 35.26 L60.34 33.22 L60.02 35.26 L59.69 38.42 L59.37 41.44 L59.04 42.65 L58.72 46.23 L58.39 44.09 L58.07 41.31 L57.75 38.65 L57.42 36.11 L57.1 33.76 L56.77 31.92 L56.45 32.02 L56.12 36.27 L55.8 40.13 L55.47 42.75 L55.15 46.1 L54.83 48.57 L54.5 46.43 L54.18 42.93 L53.85 40.05 L53.53 36.69 L53.2 34.07 L52.88 33.48 L52.56 37.66 L52.23 40.49 L51.91 40.19 L51.58 42.02 L51.26 42.93 L50.93 40.84 L50.61 38.69 L50.28 38.07 L49.96 34.52 L49.64 34.46 L49.31 36.92 L48.99 38.18 L48.66 39.77 L48.34 40.41 L48.01 40.5 L47.69 37.71 L47.36 34.25 L47.04 32.63 L46.72 30.76 L46.39 30.75 L46.07 30.57 L45.74 32.63 L45.42 37.92 L45.09 40.85 L44.77 42.98 L44.44 45.73 L44.12 44.39 L43.8 40.5 L43.47 37.97 L43.15 33.01 L42.82 35.74 L42.5 38.56 L42.17 41.54 L41.85 39.39 L41.53 38.01 L41.2 36.31 L40.88 33 L40.55 33.03 L40.23 36.29 L39.9 37.39 L39.58 40.89 L39.25 43.83 L38.93 45.74 L38.61 46.57 L38.28 44 L37.96 42.62 L37.63 38.32 L37.31 37.62 L36.98 33.26 L36.66 33.48 L36.33 37.35 L36.01 40.94 L35.69 44.09 L35.36 46.47 L35.04 45.61 L34.71 42.7 L34.39 39.35 L34.06 34.64 L33.74 30.73 L33.41 31.22 L33.09 34.37 L32.77 36.38 L32.44 40.04 L32.12 42.14 L31.79 44.57 L31.47 41.6 L31.14 40.09 L30.82 39.77 L30.49 36.23 L30.17 33.47 L29.85 30.85 L29.52 32.84 L29.2 34.57 L28.87 37.22 L28.55 37.76 L28.22 38.81 L27.9 39.33 L27.58 39.44 L27.25 37.97 L26.93 37.03 L26.6 34.53 L26.28 33.23 L25.95 34.67 L25.63 39.29 L25.3 40.89 L24.98 44.6 L24.66 45.61 L24.33 46.29 L24.01 44.62 L23.68 43.1 L23.36 39.21 L23.03 37.57 L22.71 39.83 L22.38 44.15 L22.06 45.02 L21.74 47.34 L21.41 43.06 L21.09 40.33 L20.76 36.91 L20.44 34.49 L20.11 31.19 L19.79 30.71 L19.46 33.06 L19.14 36.67 L18.82 37.76 L18.49 39.96 L18.17 43.1 L17.84 42.76 L17.52 39.32 L17.19 39.04 L16.87 35.9 L16.55 36.25 L16.22 39.25 L15.9 40.91 L15.57 41.93 L15.25 40.39 L14.92 38.48 L14.6 36.99 L14.27 34.17 L13.95 32.17 L13.63 33.35 L13.3 33.25 L12.98 32.66 L12.65 37.16 L12.33 42.87 L12 46.34 L11.68 47.94 L11.35 49.22 L11.03 45.95 L10.71 43.19 L10.38 38.01 L10.06 34.22 L9.73 34.08 L9.41 33.06 L9.08 35.9 L8.76 39.65 L8.43 41.61 L8.11 46.08 L7.79 46.62 L7.46 44.71 L7.14 39.17 L6.81 35 L6.49 33.89 L6.16 37.26 L5.84 40.45 L5.52 44.47 L5.19 42.02 L4.87 38.62 L4.54 35.02 L4.22 30.44 L3.89 30.3 L3.57 30.26 L3.24 30.23 L2.92 31.84 L2.6 36.03 L2.27 37.06 L1.95 39.47 L1.62 38.16 L1.3 35.71 L0.97 33.78 L0.65 31.01 L0.32 28.49 L0 27.41Z" fill="#963a06"/></svg></div>
<div class="em" style="left:152.3px;top:150.05px"></div>
<div class="cl" style="left:172.15px;top:144.85px;height:94.9px;background:#9f02be"><span class="n" style="color:#ffd8ff">Chords Biza</span><svg style="left:100.4px;top:4.6px" width="13" height="15"><path d="M0.3 0.3 L12.2 7 L0.3 13.8Z" fill="rgba(255,255,255,.56)"/></svg><svg style="left:10.3px;top:26.5px" width="97" height="50" viewBox="0 0 97 50"><path d="M0 23.48 L0.32 23.08 L0.65 22.67 L0.97 20.78 L1.3 17.75 L1.62 14.37 L1.95 10.74 L2.27 6.97 L2.6 3.72 L2.92 2.04 L3.24 0.88 L3.57 0.46 L3.89 1 L4.22 2.12 L4.54 3.72 L4.87 5.77 L5.19 8.22 L5.52 11.06 L5.84 14.27 L6.16 17.84 L6.49 18.3 L6.81 15.47 L7.14 12.29 L7.46 9.45 L7.79 6.95 L8.11 4.82 L8.43 3.07 L8.76 1.73 L9.08 0.85 L9.41 0.57 L9.73 1.22 L10.06 2.45 L10.38 4.12 L10.71 6.19 L11.03 8.61 L11.35 11.36 L11.68 14.41 L12 13.19 L12.33 10.77 L12.65 8.64 L12.98 6.8 L13.3 5.29 L13.63 4.14 L13.95 3.43 L14.27 3.43 L14.6 4.09 L14.92 5.18 L15.25 6.64 L15.57 8.42 L15.9 10.51 L16.22 12.89 L16.55 15.56 L16.87 18.49 L17.19 19.3 L17.52 19.13 L17.84 18.96 L18.17 18.81 L18.49 15.75 L18.82 10.92 L19.14 6.78 L19.46 3.38 L19.79 0.8 L20.11 0 L20.44 0 L20.76 0.39 L21.09 2.79 L21.41 6.03 L21.74 10.02 L22.06 14.72 L22.38 18.79 L22.71 18.94 L23.03 19.1 L23.36 18.33 L23.68 15.12 L24.01 12.27 L24.33 9.79 L24.66 7.7 L24.98 6.03 L25.3 4.84 L25.63 4.22 L25.95 4.54 L26.28 5.62 L26.6 7.21 L26.93 9.24 L27.25 11.67 L27.58 14.46 L27.9 17.59 L28.22 20.59 L28.55 20.51 L28.87 20.41 L29.2 20.28 L29.52 17.83 L29.85 14.22 L30.17 11.06 L30.49 8.39 L30.82 6.26 L31.14 4.75 L31.47 4.08 L31.79 4.65 L32.12 5.97 L32.44 7.91 L32.77 10.39 L33.09 13.39 L33.41 16.86 L33.74 18.33 L34.06 18.13 L34.39 14.3 L34.71 10.85 L35.04 7.79 L35.36 5.14 L35.69 2.94 L36.01 1.2 L36.33 0 L36.66 0 L36.98 0 L37.31 1.07 L37.63 2.85 L37.96 5.11 L38.28 7.8 L38.61 10.88 L38.93 14.33 L39.25 18.13 L39.58 20.38 L39.9 20.49 L40.23 20.03 L40.55 15.29 L40.88 11.13 L41.2 7.61 L41.53 4.78 L41.85 2.73 L42.17 1.64 L42.5 2.18 L42.82 3.84 L43.15 6.33 L43.47 9.53 L43.8 13.39 L44.12 17.87 L44.44 19.66 L44.77 19.48 L45.09 19.31 L45.42 19.14 L45.74 18.98 L46.07 18.83 L46.39 18.69 L46.72 14.32 L47.04 10.5 L47.36 7.33 L47.69 4.87 L48.01 3.23 L48.34 2.71 L48.66 3.74 L48.99 5.71 L49.31 8.45 L49.64 11.88 L49.96 15.93 L50.28 18.78 L50.61 18.92 L50.93 19.08 L51.26 19.25 L51.58 19.43 L51.91 19.6 L52.23 17.18 L52.56 13.68 L52.88 10.67 L53.2 8.17 L53.53 6.24 L53.85 4.95 L54.18 4.55 L54.5 5.43 L54.83 7.07 L55.15 9.32 L55.47 12.11 L55.8 15.39 L56.12 19.13 L56.45 20.52 L56.77 20.42 L57.1 20.29 L57.42 20.15 L57.75 18.67 L58.07 14.03 L58.39 9.91 L58.72 6.37 L59.04 3.45 L59.37 1.23 L59.69 0 L60.02 0 L60.34 0.9 L60.67 2.89 L60.99 5.58 L61.31 8.92 L61.64 12.84 L61.96 17.34 L62.29 18.3 L62.61 18.32 L62.94 17.09 L63.26 13.69 L63.59 10.65 L63.91 8 L64.23 5.75 L64.56 3.94 L64.88 2.6 L65.21 1.8 L65.53 1.8 L65.86 2.74 L66.18 4.26 L66.51 6.24 L66.83 8.65 L67.15 11.43 L67.48 14.58 L67.8 18.05 L68.13 14.9 L68.45 11.54 L68.78 8.56 L69.1 5.99 L69.42 3.85 L69.75 2.21 L70.07 1.13 L70.4 0.94 L70.72 1.74 L71.05 3.13 L71.37 5.03 L71.7 7.39 L72.02 10.17 L72.34 13.36 L72.67 16.92 L72.99 19.32 L73.32 19.15 L73.64 18.99 L73.97 18.84 L74.29 18.7 L74.62 15.87 L74.94 11.44 L75.26 7.57 L75.59 4.32 L75.91 1.72 L76.24 0 L76.56 0 L76.89 0 L77.21 1.01 L77.54 3.4 L77.86 6.46 L78.18 10.15 L78.51 14.42 L78.83 19.07 L79.16 19.24 L79.48 19.41 L79.81 16.8 L80.13 13.26 L80.45 10.25 L80.78 7.79 L81.1 5.95 L81.43 4.82 L81.75 4.79 L82.08 5.98 L82.4 7.91 L82.73 10.46 L83.05 13.55 L83.37 17.16 L83.7 20.66 L84.02 20.61 L84.35 20.53 L84.67 17.58 L85 14.29 L85.32 11.33 L85.65 8.73 L85.97 6.52 L86.29 4.74 L86.62 3.46 L86.94 2.83 L87.27 3.21 L87.59 4.21 L87.92 5.72 L88.24 7.67 L88.57 10.04 L88.89 12.8 L89.21 15.93 L89.54 18.34 L89.86 18.31 L90.19 18.3 L90.51 14.51 L90.84 10.68 L91.16 7.37 L91.48 4.64 L91.81 2.51 L92.13 1.08 L92.46 0.52 L92.78 1.35 L93.11 3.05 L93.43 5.44 L93.76 8.42 L94.08 11.95 L94.4 15.98 L94.73 20.37 L95.05 20.91 L95.38 21.42 L95.7 21.89 L96.03 22.32 L96.35 22.73 L96.68 23.12 L97 23.49 L97 26.48 L96.68 26.72 L96.35 27.3 L96.03 27.38 L95.7 28.09 L95.38 28.73 L95.05 29.24 L94.73 29.61 L94.4 32.98 L94.08 37.87 L93.76 41.69 L93.43 44.78 L93.11 45.12 L92.78 46.07 L92.46 49.73 L92.13 48.29 L91.81 45.34 L91.48 44 L91.16 41.91 L90.84 38.86 L90.51 35.04 L90.19 31.05 L89.86 31.86 L89.54 31.69 L89.21 33.4 L88.89 36.58 L88.57 39.83 L88.24 42.57 L87.92 42.17 L87.59 46.05 L87.27 45.21 L86.94 45.21 L86.62 46.89 L86.29 44.1 L85.97 42.4 L85.65 41.69 L85.32 38.08 L85 35.51 L84.67 32.37 L84.35 29.35 L84.02 29.17 L83.7 29.36 L83.37 31.92 L83.05 36.07 L82.73 39.86 L82.4 42.55 L82.08 43.12 L81.75 43.6 L81.43 42.87 L81.1 43.57 L80.78 42.2 L80.45 38.83 L80.13 36.2 L79.81 32.91 L79.48 30.18 L79.16 30.38 L78.83 30.72 L78.51 34.82 L78.18 39.87 L77.86 41.66 L77.54 46.58 L77.21 48.43 L76.89 49.58 L76.56 48.9 L76.24 49.43 L75.91 46.58 L75.59 46.47 L75.26 40.77 L74.94 37.51 L74.62 33.39 L74.29 31.33 L73.97 31.35 L73.64 30.55 L73.32 30.64 L72.99 30.01 L72.67 33.17 L72.34 36.7 L72.02 38.74 L71.7 41.74 L71.37 44.56 L71.05 44.67 L70.72 47.25 L70.4 47.27 L70.07 47.88 L69.75 48.65 L69.42 44.69 L69.1 42.99 L68.78 40.77 L68.45 38.96 L68.13 34.31 L67.8 31.77 L67.48 35.7 L67.15 39.02 L66.83 40.38 L66.51 44.43 L66.18 44.22 L65.86 45.39 L65.53 47.01 L65.21 46.81 L64.88 47.91 L64.56 45.65 L64.23 42.37 L63.91 41.63 L63.59 38.93 L63.26 35.15 L62.94 31.96 L62.61 31.83 L62.29 31.27 L61.96 32.49 L61.64 37.58 L61.31 41.62 L60.99 43.84 L60.67 46.56 L60.34 46.76 L60.02 48.48 L59.69 49.57 L59.37 49.01 L59.04 45.41 L58.72 43.83 L58.39 40.59 L58.07 35.68 L57.75 30.91 L57.42 29.69 L57.1 29.21 L56.77 29.48 L56.45 28.97 L56.12 30.51 L55.8 34.74 L55.47 36.58 L55.15 39.83 L54.83 41.58 L54.5 43.49 L54.18 43 L53.85 45.54 L53.53 42.23 L53.2 41.4 L52.88 39.02 L52.56 35.65 L52.23 32.46 L51.91 29.78 L51.58 30.08 L51.26 30.23 L50.93 30.51 L50.61 30.48 L50.28 30.53 L49.96 33.31 L49.64 37.54 L49.31 39.67 L48.99 43.92 L48.66 46.04 L48.34 45.39 L48.01 46.42 L47.69 44.14 L47.36 41 L47.04 37.83 L46.72 35.63 L46.39 31.2 L46.07 31.2 L45.74 30.9 L45.42 30.55 L45.09 30.61 L44.77 30.37 L44.44 30.37 L44.12 31.47 L43.8 36.57 L43.47 40.39 L43.15 43.5 L42.82 45.23 L42.5 48.5 L42.17 48.68 L41.85 45.19 L41.53 44.51 L41.2 41.74 L40.88 39.32 L40.55 35.07 L40.23 29.92 L39.9 29.6 L39.58 29.69 L39.25 31.43 L38.93 35.8 L38.61 39.09 L38.28 41.91 L37.96 43.61 L37.63 47.32 L37.31 48.54 L36.98 50.27 L36.66 48.85 L36.33 49.69 L36.01 46.9 L35.69 46.35 L35.36 42.51 L35.04 41.74 L34.71 38.92 L34.39 36.03 L34.06 31.36 L33.74 31.6 L33.41 33.16 L33.09 36.12 L32.77 38.51 L32.44 41.97 L32.12 42.85 L31.79 45.39 L31.47 45.63 L31.14 45.07 L30.82 43.81 L30.49 41.7 L30.17 38.07 L29.85 35.98 L29.52 32.21 L29.2 29.36 L28.87 29.11 L28.55 29.19 L28.22 29.23 L27.9 32.27 L27.58 35.9 L27.25 38.84 L26.93 39.82 L26.6 41.07 L26.28 43.31 L25.95 43.96 L25.63 44.88 L25.3 45.09 L24.98 43.17 L24.66 41.48 L24.33 40.76 L24.01 37.94 L23.68 35.27 L23.36 31.35 L23.03 30.47 L22.71 31.16 L22.38 30.61 L22.06 34.76 L21.74 38.43 L21.41 44.09 L21.09 46.79 L20.76 50.4 L20.44 49.93 L20.11 47.52 L19.79 49.54 L19.46 45.73 L19.14 41.13 L18.82 39.45 L18.49 33.22 L18.17 30.86 L17.84 30.75 L17.52 30.95 L17.19 30.56 L16.87 30.98 L16.55 33.92 L16.22 36.69 L15.9 40.04 L15.57 39.72 L15.25 41.63 L14.92 45.6 L14.6 45.7 L14.27 44.5 L13.95 44.26 L13.63 43.95 L13.3 43.35 L12.98 41.92 L12.65 40.83 L12.33 39.62 L12 36.03 L11.68 35.88 L11.35 38.34 L11.03 40.32 L10.71 41.83 L10.38 46.53 L10.06 44.98 L9.73 49.19 L9.41 49.61 L9.08 49.14 L8.76 45.88 L8.43 47.02 L8.11 44.45 L7.79 41.91 L7.46 39.54 L7.14 38.1 L6.81 34.81 L6.49 31.7 L6.16 31.53 L5.84 36.08 L5.52 37.67 L5.19 39.89 L4.87 41.95 L4.54 45.69 L4.22 46.48 L3.89 49.15 L3.57 46.66 L3.24 49.49 L2.92 47.96 L2.6 43.81 L2.27 43.68 L1.95 37.68 L1.62 35.55 L1.3 31.94 L0.97 28.93 L0.65 27.23 L0.32 26.94 L0 26.42Z" fill="#780590"/></svg></div>
<div class="cl" style="left:291.6px;top:144.85px;height:94.9px;background:#9f02be"><span class="n" style="color:#ffd8ff">Chords Biza</span><svg style="left:100.4px;top:4.6px" width="13" height="15"><path d="M0.3 0.3 L12.2 7 L0.3 13.8Z" fill="rgba(255,255,255,.56)"/></svg><svg style="left:10.3px;top:26.5px" width="97" height="50" viewBox="0 0 97 50"><path d="M0 23.48 L0.32 23.08 L0.65 22.67 L0.97 20.78 L1.3 17.75 L1.62 14.37 L1.95 10.74 L2.27 6.97 L2.6 3.72 L2.92 2.04 L3.24 0.88 L3.57 0.46 L3.89 1 L4.22 2.12 L4.54 3.72 L4.87 5.77 L5.19 8.22 L5.52 11.06 L5.84 14.27 L6.16 17.84 L6.49 18.3 L6.81 15.47 L7.14 12.29 L7.46 9.45 L7.79 6.95 L8.11 4.82 L8.43 3.07 L8.76 1.73 L9.08 0.85 L9.41 0.57 L9.73 1.22 L10.06 2.45 L10.38 4.12 L10.71 6.19 L11.03 8.61 L11.35 11.36 L11.68 14.41 L12 13.19 L12.33 10.77 L12.65 8.64 L12.98 6.8 L13.3 5.29 L13.63 4.14 L13.95 3.43 L14.27 3.43 L14.6 4.09 L14.92 5.18 L15.25 6.64 L15.57 8.42 L15.9 10.51 L16.22 12.89 L16.55 15.56 L16.87 18.49 L17.19 19.3 L17.52 19.13 L17.84 18.96 L18.17 18.81 L18.49 15.75 L18.82 10.92 L19.14 6.78 L19.46 3.38 L19.79 0.8 L20.11 0 L20.44 0 L20.76 0.39 L21.09 2.79 L21.41 6.03 L21.74 10.02 L22.06 14.72 L22.38 18.79 L22.71 18.94 L23.03 19.1 L23.36 18.33 L23.68 15.12 L24.01 12.27 L24.33 9.79 L24.66 7.7 L24.98 6.03 L25.3 4.84 L25.63 4.22 L25.95 4.54 L26.28 5.62 L26.6 7.21 L26.93 9.24 L27.25 11.67 L27.58 14.46 L27.9 17.59 L28.22 20.59 L28.55 20.51 L28.87 20.41 L29.2 20.28 L29.52 17.83 L29.85 14.22 L30.17 11.06 L30.49 8.39 L30.82 6.26 L31.14 4.75 L31.47 4.08 L31.79 4.65 L32.12 5.97 L32.44 7.91 L32.77 10.39 L33.09 13.39 L33.41 16.86 L33.74 18.33 L34.06 18.13 L34.39 14.3 L34.71 10.85 L35.04 7.79 L35.36 5.14 L35.69 2.94 L36.01 1.2 L36.33 0 L36.66 0 L36.98 0 L37.31 1.07 L37.63 2.85 L37.96 5.11 L38.28 7.8 L38.61 10.88 L38.93 14.33 L39.25 18.13 L39.58 20.38 L39.9 20.49 L40.23 20.03 L40.55 15.29 L40.88 11.13 L41.2 7.61 L41.53 4.78 L41.85 2.73 L42.17 1.64 L42.5 2.18 L42.82 3.84 L43.15 6.33 L43.47 9.53 L43.8 13.39 L44.12 17.87 L44.44 19.66 L44.77 19.48 L45.09 19.31 L45.42 19.14 L45.74 18.98 L46.07 18.83 L46.39 18.69 L46.72 14.32 L47.04 10.5 L47.36 7.33 L47.69 4.87 L48.01 3.23 L48.34 2.71 L48.66 3.74 L48.99 5.71 L49.31 8.45 L49.64 11.88 L49.96 15.93 L50.28 18.78 L50.61 18.92 L50.93 19.08 L51.26 19.25 L51.58 19.43 L51.91 19.6 L52.23 17.18 L52.56 13.68 L52.88 10.67 L53.2 8.17 L53.53 6.24 L53.85 4.95 L54.18 4.55 L54.5 5.43 L54.83 7.07 L55.15 9.32 L55.47 12.11 L55.8 15.39 L56.12 19.13 L56.45 20.52 L56.77 20.42 L57.1 20.29 L57.42 20.15 L57.75 18.67 L58.07 14.03 L58.39 9.91 L58.72 6.37 L59.04 3.45 L59.37 1.23 L59.69 0 L60.02 0 L60.34 0.9 L60.67 2.89 L60.99 5.58 L61.31 8.92 L61.64 12.84 L61.96 17.34 L62.29 18.3 L62.61 18.32 L62.94 17.09 L63.26 13.69 L63.59 10.65 L63.91 8 L64.23 5.75 L64.56 3.94 L64.88 2.6 L65.21 1.8 L65.53 1.8 L65.86 2.74 L66.18 4.26 L66.51 6.24 L66.83 8.65 L67.15 11.43 L67.48 14.58 L67.8 18.05 L68.13 14.9 L68.45 11.54 L68.78 8.56 L69.1 5.99 L69.42 3.85 L69.75 2.21 L70.07 1.13 L70.4 0.94 L70.72 1.74 L71.05 3.13 L71.37 5.03 L71.7 7.39 L72.02 10.17 L72.34 13.36 L72.67 16.92 L72.99 19.32 L73.32 19.15 L73.64 18.99 L73.97 18.84 L74.29 18.7 L74.62 15.87 L74.94 11.44 L75.26 7.57 L75.59 4.32 L75.91 1.72 L76.24 0 L76.56 0 L76.89 0 L77.21 1.01 L77.54 3.4 L77.86 6.46 L78.18 10.15 L78.51 14.42 L78.83 19.07 L79.16 19.24 L79.48 19.41 L79.81 16.8 L80.13 13.26 L80.45 10.25 L80.78 7.79 L81.1 5.95 L81.43 4.82 L81.75 4.79 L82.08 5.98 L82.4 7.91 L82.73 10.46 L83.05 13.55 L83.37 17.16 L83.7 20.66 L84.02 20.61 L84.35 20.53 L84.67 17.58 L85 14.29 L85.32 11.33 L85.65 8.73 L85.97 6.52 L86.29 4.74 L86.62 3.46 L86.94 2.83 L87.27 3.21 L87.59 4.21 L87.92 5.72 L88.24 7.67 L88.57 10.04 L88.89 12.8 L89.21 15.93 L89.54 18.34 L89.86 18.31 L90.19 18.3 L90.51 14.51 L90.84 10.68 L91.16 7.37 L91.48 4.64 L91.81 2.51 L92.13 1.08 L92.46 0.52 L92.78 1.35 L93.11 3.05 L93.43 5.44 L93.76 8.42 L94.08 11.95 L94.4 15.98 L94.73 20.37 L95.05 20.91 L95.38 21.42 L95.7 21.89 L96.03 22.32 L96.35 22.73 L96.68 23.12 L97 23.49 L97 26.48 L96.68 26.72 L96.35 27.3 L96.03 27.38 L95.7 28.09 L95.38 28.73 L95.05 29.24 L94.73 29.61 L94.4 32.98 L94.08 37.87 L93.76 41.69 L93.43 44.78 L93.11 45.12 L92.78 46.07 L92.46 49.73 L92.13 48.29 L91.81 45.34 L91.48 44 L91.16 41.91 L90.84 38.86 L90.51 35.04 L90.19 31.05 L89.86 31.86 L89.54 31.69 L89.21 33.4 L88.89 36.58 L88.57 39.83 L88.24 42.57 L87.92 42.17 L87.59 46.05 L87.27 45.21 L86.94 45.21 L86.62 46.89 L86.29 44.1 L85.97 42.4 L85.65 41.69 L85.32 38.08 L85 35.51 L84.67 32.37 L84.35 29.35 L84.02 29.17 L83.7 29.36 L83.37 31.92 L83.05 36.07 L82.73 39.86 L82.4 42.55 L82.08 43.12 L81.75 43.6 L81.43 42.87 L81.1 43.57 L80.78 42.2 L80.45 38.83 L80.13 36.2 L79.81 32.91 L79.48 30.18 L79.16 30.38 L78.83 30.72 L78.51 34.82 L78.18 39.87 L77.86 41.66 L77.54 46.58 L77.21 48.43 L76.89 49.58 L76.56 48.9 L76.24 49.43 L75.91 46.58 L75.59 46.47 L75.26 40.77 L74.94 37.51 L74.62 33.39 L74.29 31.33 L73.97 31.35 L73.64 30.55 L73.32 30.64 L72.99 30.01 L72.67 33.17 L72.34 36.7 L72.02 38.74 L71.7 41.74 L71.37 44.56 L71.05 44.67 L70.72 47.25 L70.4 47.27 L70.07 47.88 L69.75 48.65 L69.42 44.69 L69.1 42.99 L68.78 40.77 L68.45 38.96 L68.13 34.31 L67.8 31.77 L67.48 35.7 L67.15 39.02 L66.83 40.38 L66.51 44.43 L66.18 44.22 L65.86 45.39 L65.53 47.01 L65.21 46.81 L64.88 47.91 L64.56 45.65 L64.23 42.37 L63.91 41.63 L63.59 38.93 L63.26 35.15 L62.94 31.96 L62.61 31.83 L62.29 31.27 L61.96 32.49 L61.64 37.58 L61.31 41.62 L60.99 43.84 L60.67 46.56 L60.34 46.76 L60.02 48.48 L59.69 49.57 L59.37 49.01 L59.04 45.41 L58.72 43.83 L58.39 40.59 L58.07 35.68 L57.75 30.91 L57.42 29.69 L57.1 29.21 L56.77 29.48 L56.45 28.97 L56.12 30.51 L55.8 34.74 L55.47 36.58 L55.15 39.83 L54.83 41.58 L54.5 43.49 L54.18 43 L53.85 45.54 L53.53 42.23 L53.2 41.4 L52.88 39.02 L52.56 35.65 L52.23 32.46 L51.91 29.78 L51.58 30.08 L51.26 30.23 L50.93 30.51 L50.61 30.48 L50.28 30.53 L49.96 33.31 L49.64 37.54 L49.31 39.67 L48.99 43.92 L48.66 46.04 L48.34 45.39 L48.01 46.42 L47.69 44.14 L47.36 41 L47.04 37.83 L46.72 35.63 L46.39 31.2 L46.07 31.2 L45.74 30.9 L45.42 30.55 L45.09 30.61 L44.77 30.37 L44.44 30.37 L44.12 31.47 L43.8 36.57 L43.47 40.39 L43.15 43.5 L42.82 45.23 L42.5 48.5 L42.17 48.68 L41.85 45.19 L41.53 44.51 L41.2 41.74 L40.88 39.32 L40.55 35.07 L40.23 29.92 L39.9 29.6 L39.58 29.69 L39.25 31.43 L38.93 35.8 L38.61 39.09 L38.28 41.91 L37.96 43.61 L37.63 47.32 L37.31 48.54 L36.98 50.27 L36.66 48.85 L36.33 49.69 L36.01 46.9 L35.69 46.35 L35.36 42.51 L35.04 41.74 L34.71 38.92 L34.39 36.03 L34.06 31.36 L33.74 31.6 L33.41 33.16 L33.09 36.12 L32.77 38.51 L32.44 41.97 L32.12 42.85 L31.79 45.39 L31.47 45.63 L31.14 45.07 L30.82 43.81 L30.49 41.7 L30.17 38.07 L29.85 35.98 L29.52 32.21 L29.2 29.36 L28.87 29.11 L28.55 29.19 L28.22 29.23 L27.9 32.27 L27.58 35.9 L27.25 38.84 L26.93 39.82 L26.6 41.07 L26.28 43.31 L25.95 43.96 L25.63 44.88 L25.3 45.09 L24.98 43.17 L24.66 41.48 L24.33 40.76 L24.01 37.94 L23.68 35.27 L23.36 31.35 L23.03 30.47 L22.71 31.16 L22.38 30.61 L22.06 34.76 L21.74 38.43 L21.41 44.09 L21.09 46.79 L20.76 50.4 L20.44 49.93 L20.11 47.52 L19.79 49.54 L19.46 45.73 L19.14 41.13 L18.82 39.45 L18.49 33.22 L18.17 30.86 L17.84 30.75 L17.52 30.95 L17.19 30.56 L16.87 30.98 L16.55 33.92 L16.22 36.69 L15.9 40.04 L15.57 39.72 L15.25 41.63 L14.92 45.6 L14.6 45.7 L14.27 44.5 L13.95 44.26 L13.63 43.95 L13.3 43.35 L12.98 41.92 L12.65 40.83 L12.33 39.62 L12 36.03 L11.68 35.88 L11.35 38.34 L11.03 40.32 L10.71 41.83 L10.38 46.53 L10.06 44.98 L9.73 49.19 L9.41 49.61 L9.08 49.14 L8.76 45.88 L8.43 47.02 L8.11 44.45 L7.79 41.91 L7.46 39.54 L7.14 38.1 L6.81 34.81 L6.49 31.7 L6.16 31.53 L5.84 36.08 L5.52 37.67 L5.19 39.89 L4.87 41.95 L4.54 45.69 L4.22 46.48 L3.89 49.15 L3.57 46.66 L3.24 49.49 L2.92 47.96 L2.6 43.81 L2.27 43.68 L1.95 37.68 L1.62 35.55 L1.3 31.94 L0.97 28.93 L0.65 27.23 L0.32 26.94 L0 26.42Z" fill="#780590"/></svg></div>
<div class="cl" style="left:411.05px;top:144.85px;height:94.9px;background:#9f02be"><span class="n" style="color:#ffd8ff">Chords Biza</span><svg style="left:100.4px;top:4.6px" width="13" height="15"><path d="M0.3 0.3 L12.2 7 L0.3 13.8Z" fill="rgba(255,255,255,.56)"/></svg><svg style="left:10.3px;top:26.5px" width="97" height="50" viewBox="0 0 97 50"><path d="M0 23.48 L0.32 23.08 L0.65 22.67 L0.97 20.78 L1.3 17.75 L1.62 14.37 L1.95 10.74 L2.27 6.97 L2.6 3.72 L2.92 2.04 L3.24 0.88 L3.57 0.46 L3.89 1 L4.22 2.12 L4.54 3.72 L4.87 5.77 L5.19 8.22 L5.52 11.06 L5.84 14.27 L6.16 17.84 L6.49 18.3 L6.81 15.47 L7.14 12.29 L7.46 9.45 L7.79 6.95 L8.11 4.82 L8.43 3.07 L8.76 1.73 L9.08 0.85 L9.41 0.57 L9.73 1.22 L10.06 2.45 L10.38 4.12 L10.71 6.19 L11.03 8.61 L11.35 11.36 L11.68 14.41 L12 13.19 L12.33 10.77 L12.65 8.64 L12.98 6.8 L13.3 5.29 L13.63 4.14 L13.95 3.43 L14.27 3.43 L14.6 4.09 L14.92 5.18 L15.25 6.64 L15.57 8.42 L15.9 10.51 L16.22 12.89 L16.55 15.56 L16.87 18.49 L17.19 19.3 L17.52 19.13 L17.84 18.96 L18.17 18.81 L18.49 15.75 L18.82 10.92 L19.14 6.78 L19.46 3.38 L19.79 0.8 L20.11 0 L20.44 0 L20.76 0.39 L21.09 2.79 L21.41 6.03 L21.74 10.02 L22.06 14.72 L22.38 18.79 L22.71 18.94 L23.03 19.1 L23.36 18.33 L23.68 15.12 L24.01 12.27 L24.33 9.79 L24.66 7.7 L24.98 6.03 L25.3 4.84 L25.63 4.22 L25.95 4.54 L26.28 5.62 L26.6 7.21 L26.93 9.24 L27.25 11.67 L27.58 14.46 L27.9 17.59 L28.22 20.59 L28.55 20.51 L28.87 20.41 L29.2 20.28 L29.52 17.83 L29.85 14.22 L30.17 11.06 L30.49 8.39 L30.82 6.26 L31.14 4.75 L31.47 4.08 L31.79 4.65 L32.12 5.97 L32.44 7.91 L32.77 10.39 L33.09 13.39 L33.41 16.86 L33.74 18.33 L34.06 18.13 L34.39 14.3 L34.71 10.85 L35.04 7.79 L35.36 5.14 L35.69 2.94 L36.01 1.2 L36.33 0 L36.66 0 L36.98 0 L37.31 1.07 L37.63 2.85 L37.96 5.11 L38.28 7.8 L38.61 10.88 L38.93 14.33 L39.25 18.13 L39.58 20.38 L39.9 20.49 L40.23 20.03 L40.55 15.29 L40.88 11.13 L41.2 7.61 L41.53 4.78 L41.85 2.73 L42.17 1.64 L42.5 2.18 L42.82 3.84 L43.15 6.33 L43.47 9.53 L43.8 13.39 L44.12 17.87 L44.44 19.66 L44.77 19.48 L45.09 19.31 L45.42 19.14 L45.74 18.98 L46.07 18.83 L46.39 18.69 L46.72 14.32 L47.04 10.5 L47.36 7.33 L47.69 4.87 L48.01 3.23 L48.34 2.71 L48.66 3.74 L48.99 5.71 L49.31 8.45 L49.64 11.88 L49.96 15.93 L50.28 18.78 L50.61 18.92 L50.93 19.08 L51.26 19.25 L51.58 19.43 L51.91 19.6 L52.23 17.18 L52.56 13.68 L52.88 10.67 L53.2 8.17 L53.53 6.24 L53.85 4.95 L54.18 4.55 L54.5 5.43 L54.83 7.07 L55.15 9.32 L55.47 12.11 L55.8 15.39 L56.12 19.13 L56.45 20.52 L56.77 20.42 L57.1 20.29 L57.42 20.15 L57.75 18.67 L58.07 14.03 L58.39 9.91 L58.72 6.37 L59.04 3.45 L59.37 1.23 L59.69 0 L60.02 0 L60.34 0.9 L60.67 2.89 L60.99 5.58 L61.31 8.92 L61.64 12.84 L61.96 17.34 L62.29 18.3 L62.61 18.32 L62.94 17.09 L63.26 13.69 L63.59 10.65 L63.91 8 L64.23 5.75 L64.56 3.94 L64.88 2.6 L65.21 1.8 L65.53 1.8 L65.86 2.74 L66.18 4.26 L66.51 6.24 L66.83 8.65 L67.15 11.43 L67.48 14.58 L67.8 18.05 L68.13 14.9 L68.45 11.54 L68.78 8.56 L69.1 5.99 L69.42 3.85 L69.75 2.21 L70.07 1.13 L70.4 0.94 L70.72 1.74 L71.05 3.13 L71.37 5.03 L71.7 7.39 L72.02 10.17 L72.34 13.36 L72.67 16.92 L72.99 19.32 L73.32 19.15 L73.64 18.99 L73.97 18.84 L74.29 18.7 L74.62 15.87 L74.94 11.44 L75.26 7.57 L75.59 4.32 L75.91 1.72 L76.24 0 L76.56 0 L76.89 0 L77.21 1.01 L77.54 3.4 L77.86 6.46 L78.18 10.15 L78.51 14.42 L78.83 19.07 L79.16 19.24 L79.48 19.41 L79.81 16.8 L80.13 13.26 L80.45 10.25 L80.78 7.79 L81.1 5.95 L81.43 4.82 L81.75 4.79 L82.08 5.98 L82.4 7.91 L82.73 10.46 L83.05 13.55 L83.37 17.16 L83.7 20.66 L84.02 20.61 L84.35 20.53 L84.67 17.58 L85 14.29 L85.32 11.33 L85.65 8.73 L85.97 6.52 L86.29 4.74 L86.62 3.46 L86.94 2.83 L87.27 3.21 L87.59 4.21 L87.92 5.72 L88.24 7.67 L88.57 10.04 L88.89 12.8 L89.21 15.93 L89.54 18.34 L89.86 18.31 L90.19 18.3 L90.51 14.51 L90.84 10.68 L91.16 7.37 L91.48 4.64 L91.81 2.51 L92.13 1.08 L92.46 0.52 L92.78 1.35 L93.11 3.05 L93.43 5.44 L93.76 8.42 L94.08 11.95 L94.4 15.98 L94.73 20.37 L95.05 20.91 L95.38 21.42 L95.7 21.89 L96.03 22.32 L96.35 22.73 L96.68 23.12 L97 23.49 L97 26.48 L96.68 26.72 L96.35 27.3 L96.03 27.38 L95.7 28.09 L95.38 28.73 L95.05 29.24 L94.73 29.61 L94.4 32.98 L94.08 37.87 L93.76 41.69 L93.43 44.78 L93.11 45.12 L92.78 46.07 L92.46 49.73 L92.13 48.29 L91.81 45.34 L91.48 44 L91.16 41.91 L90.84 38.86 L90.51 35.04 L90.19 31.05 L89.86 31.86 L89.54 31.69 L89.21 33.4 L88.89 36.58 L88.57 39.83 L88.24 42.57 L87.92 42.17 L87.59 46.05 L87.27 45.21 L86.94 45.21 L86.62 46.89 L86.29 44.1 L85.97 42.4 L85.65 41.69 L85.32 38.08 L85 35.51 L84.67 32.37 L84.35 29.35 L84.02 29.17 L83.7 29.36 L83.37 31.92 L83.05 36.07 L82.73 39.86 L82.4 42.55 L82.08 43.12 L81.75 43.6 L81.43 42.87 L81.1 43.57 L80.78 42.2 L80.45 38.83 L80.13 36.2 L79.81 32.91 L79.48 30.18 L79.16 30.38 L78.83 30.72 L78.51 34.82 L78.18 39.87 L77.86 41.66 L77.54 46.58 L77.21 48.43 L76.89 49.58 L76.56 48.9 L76.24 49.43 L75.91 46.58 L75.59 46.47 L75.26 40.77 L74.94 37.51 L74.62 33.39 L74.29 31.33 L73.97 31.35 L73.64 30.55 L73.32 30.64 L72.99 30.01 L72.67 33.17 L72.34 36.7 L72.02 38.74 L71.7 41.74 L71.37 44.56 L71.05 44.67 L70.72 47.25 L70.4 47.27 L70.07 47.88 L69.75 48.65 L69.42 44.69 L69.1 42.99 L68.78 40.77 L68.45 38.96 L68.13 34.31 L67.8 31.77 L67.48 35.7 L67.15 39.02 L66.83 40.38 L66.51 44.43 L66.18 44.22 L65.86 45.39 L65.53 47.01 L65.21 46.81 L64.88 47.91 L64.56 45.65 L64.23 42.37 L63.91 41.63 L63.59 38.93 L63.26 35.15 L62.94 31.96 L62.61 31.83 L62.29 31.27 L61.96 32.49 L61.64 37.58 L61.31 41.62 L60.99 43.84 L60.67 46.56 L60.34 46.76 L60.02 48.48 L59.69 49.57 L59.37 49.01 L59.04 45.41 L58.72 43.83 L58.39 40.59 L58.07 35.68 L57.75 30.91 L57.42 29.69 L57.1 29.21 L56.77 29.48 L56.45 28.97 L56.12 30.51 L55.8 34.74 L55.47 36.58 L55.15 39.83 L54.83 41.58 L54.5 43.49 L54.18 43 L53.85 45.54 L53.53 42.23 L53.2 41.4 L52.88 39.02 L52.56 35.65 L52.23 32.46 L51.91 29.78 L51.58 30.08 L51.26 30.23 L50.93 30.51 L50.61 30.48 L50.28 30.53 L49.96 33.31 L49.64 37.54 L49.31 39.67 L48.99 43.92 L48.66 46.04 L48.34 45.39 L48.01 46.42 L47.69 44.14 L47.36 41 L47.04 37.83 L46.72 35.63 L46.39 31.2 L46.07 31.2 L45.74 30.9 L45.42 30.55 L45.09 30.61 L44.77 30.37 L44.44 30.37 L44.12 31.47 L43.8 36.57 L43.47 40.39 L43.15 43.5 L42.82 45.23 L42.5 48.5 L42.17 48.68 L41.85 45.19 L41.53 44.51 L41.2 41.74 L40.88 39.32 L40.55 35.07 L40.23 29.92 L39.9 29.6 L39.58 29.69 L39.25 31.43 L38.93 35.8 L38.61 39.09 L38.28 41.91 L37.96 43.61 L37.63 47.32 L37.31 48.54 L36.98 50.27 L36.66 48.85 L36.33 49.69 L36.01 46.9 L35.69 46.35 L35.36 42.51 L35.04 41.74 L34.71 38.92 L34.39 36.03 L34.06 31.36 L33.74 31.6 L33.41 33.16 L33.09 36.12 L32.77 38.51 L32.44 41.97 L32.12 42.85 L31.79 45.39 L31.47 45.63 L31.14 45.07 L30.82 43.81 L30.49 41.7 L30.17 38.07 L29.85 35.98 L29.52 32.21 L29.2 29.36 L28.87 29.11 L28.55 29.19 L28.22 29.23 L27.9 32.27 L27.58 35.9 L27.25 38.84 L26.93 39.82 L26.6 41.07 L26.28 43.31 L25.95 43.96 L25.63 44.88 L25.3 45.09 L24.98 43.17 L24.66 41.48 L24.33 40.76 L24.01 37.94 L23.68 35.27 L23.36 31.35 L23.03 30.47 L22.71 31.16 L22.38 30.61 L22.06 34.76 L21.74 38.43 L21.41 44.09 L21.09 46.79 L20.76 50.4 L20.44 49.93 L20.11 47.52 L19.79 49.54 L19.46 45.73 L19.14 41.13 L18.82 39.45 L18.49 33.22 L18.17 30.86 L17.84 30.75 L17.52 30.95 L17.19 30.56 L16.87 30.98 L16.55 33.92 L16.22 36.69 L15.9 40.04 L15.57 39.72 L15.25 41.63 L14.92 45.6 L14.6 45.7 L14.27 44.5 L13.95 44.26 L13.63 43.95 L13.3 43.35 L12.98 41.92 L12.65 40.83 L12.33 39.62 L12 36.03 L11.68 35.88 L11.35 38.34 L11.03 40.32 L10.71 41.83 L10.38 46.53 L10.06 44.98 L9.73 49.19 L9.41 49.61 L9.08 49.14 L8.76 45.88 L8.43 47.02 L8.11 44.45 L7.79 41.91 L7.46 39.54 L7.14 38.1 L6.81 34.81 L6.49 31.7 L6.16 31.53 L5.84 36.08 L5.52 37.67 L5.19 39.89 L4.87 41.95 L4.54 45.69 L4.22 46.48 L3.89 49.15 L3.57 46.66 L3.24 49.49 L2.92 47.96 L2.6 43.81 L2.27 43.68 L1.95 37.68 L1.62 35.55 L1.3 31.94 L0.97 28.93 L0.65 27.23 L0.32 26.94 L0 26.42Z" fill="#780590"/></svg></div>
<div class="cl" style="left:530.5px;top:144.85px;height:94.9px;background:#ea33fa;box-shadow:0 0 0 1.2px rgba(10,12,14,.5), inset 0 0 0 1.3px rgba(255,255,255,.28)"><span class="n" style="color:#ffd8ff">Chords Biza</span><svg style="left:100.4px;top:4.6px" width="13" height="15"><path d="M0.3 0.3 L12.2 7 L0.3 13.8Z" fill="#fff"/></svg><svg style="left:10.3px;top:26.5px" width="97" height="50" viewBox="0 0 97 50"><path d="M0 23.48 L0.32 23.08 L0.65 22.67 L0.97 20.78 L1.3 17.75 L1.62 14.37 L1.95 10.74 L2.27 6.97 L2.6 3.72 L2.92 2.04 L3.24 0.88 L3.57 0.46 L3.89 1 L4.22 2.12 L4.54 3.72 L4.87 5.77 L5.19 8.22 L5.52 11.06 L5.84 14.27 L6.16 17.84 L6.49 18.3 L6.81 15.47 L7.14 12.29 L7.46 9.45 L7.79 6.95 L8.11 4.82 L8.43 3.07 L8.76 1.73 L9.08 0.85 L9.41 0.57 L9.73 1.22 L10.06 2.45 L10.38 4.12 L10.71 6.19 L11.03 8.61 L11.35 11.36 L11.68 14.41 L12 13.19 L12.33 10.77 L12.65 8.64 L12.98 6.8 L13.3 5.29 L13.63 4.14 L13.95 3.43 L14.27 3.43 L14.6 4.09 L14.92 5.18 L15.25 6.64 L15.57 8.42 L15.9 10.51 L16.22 12.89 L16.55 15.56 L16.87 18.49 L17.19 19.3 L17.52 19.13 L17.84 18.96 L18.17 18.81 L18.49 15.75 L18.82 10.92 L19.14 6.78 L19.46 3.38 L19.79 0.8 L20.11 0 L20.44 0 L20.76 0.39 L21.09 2.79 L21.41 6.03 L21.74 10.02 L22.06 14.72 L22.38 18.79 L22.71 18.94 L23.03 19.1 L23.36 18.33 L23.68 15.12 L24.01 12.27 L24.33 9.79 L24.66 7.7 L24.98 6.03 L25.3 4.84 L25.63 4.22 L25.95 4.54 L26.28 5.62 L26.6 7.21 L26.93 9.24 L27.25 11.67 L27.58 14.46 L27.9 17.59 L28.22 20.59 L28.55 20.51 L28.87 20.41 L29.2 20.28 L29.52 17.83 L29.85 14.22 L30.17 11.06 L30.49 8.39 L30.82 6.26 L31.14 4.75 L31.47 4.08 L31.79 4.65 L32.12 5.97 L32.44 7.91 L32.77 10.39 L33.09 13.39 L33.41 16.86 L33.74 18.33 L34.06 18.13 L34.39 14.3 L34.71 10.85 L35.04 7.79 L35.36 5.14 L35.69 2.94 L36.01 1.2 L36.33 0 L36.66 0 L36.98 0 L37.31 1.07 L37.63 2.85 L37.96 5.11 L38.28 7.8 L38.61 10.88 L38.93 14.33 L39.25 18.13 L39.58 20.38 L39.9 20.49 L40.23 20.03 L40.55 15.29 L40.88 11.13 L41.2 7.61 L41.53 4.78 L41.85 2.73 L42.17 1.64 L42.5 2.18 L42.82 3.84 L43.15 6.33 L43.47 9.53 L43.8 13.39 L44.12 17.87 L44.44 19.66 L44.77 19.48 L45.09 19.31 L45.42 19.14 L45.74 18.98 L46.07 18.83 L46.39 18.69 L46.72 14.32 L47.04 10.5 L47.36 7.33 L47.69 4.87 L48.01 3.23 L48.34 2.71 L48.66 3.74 L48.99 5.71 L49.31 8.45 L49.64 11.88 L49.96 15.93 L50.28 18.78 L50.61 18.92 L50.93 19.08 L51.26 19.25 L51.58 19.43 L51.91 19.6 L52.23 17.18 L52.56 13.68 L52.88 10.67 L53.2 8.17 L53.53 6.24 L53.85 4.95 L54.18 4.55 L54.5 5.43 L54.83 7.07 L55.15 9.32 L55.47 12.11 L55.8 15.39 L56.12 19.13 L56.45 20.52 L56.77 20.42 L57.1 20.29 L57.42 20.15 L57.75 18.67 L58.07 14.03 L58.39 9.91 L58.72 6.37 L59.04 3.45 L59.37 1.23 L59.69 0 L60.02 0 L60.34 0.9 L60.67 2.89 L60.99 5.58 L61.31 8.92 L61.64 12.84 L61.96 17.34 L62.29 18.3 L62.61 18.32 L62.94 17.09 L63.26 13.69 L63.59 10.65 L63.91 8 L64.23 5.75 L64.56 3.94 L64.88 2.6 L65.21 1.8 L65.53 1.8 L65.86 2.74 L66.18 4.26 L66.51 6.24 L66.83 8.65 L67.15 11.43 L67.48 14.58 L67.8 18.05 L68.13 14.9 L68.45 11.54 L68.78 8.56 L69.1 5.99 L69.42 3.85 L69.75 2.21 L70.07 1.13 L70.4 0.94 L70.72 1.74 L71.05 3.13 L71.37 5.03 L71.7 7.39 L72.02 10.17 L72.34 13.36 L72.67 16.92 L72.99 19.32 L73.32 19.15 L73.64 18.99 L73.97 18.84 L74.29 18.7 L74.62 15.87 L74.94 11.44 L75.26 7.57 L75.59 4.32 L75.91 1.72 L76.24 0 L76.56 0 L76.89 0 L77.21 1.01 L77.54 3.4 L77.86 6.46 L78.18 10.15 L78.51 14.42 L78.83 19.07 L79.16 19.24 L79.48 19.41 L79.81 16.8 L80.13 13.26 L80.45 10.25 L80.78 7.79 L81.1 5.95 L81.43 4.82 L81.75 4.79 L82.08 5.98 L82.4 7.91 L82.73 10.46 L83.05 13.55 L83.37 17.16 L83.7 20.66 L84.02 20.61 L84.35 20.53 L84.67 17.58 L85 14.29 L85.32 11.33 L85.65 8.73 L85.97 6.52 L86.29 4.74 L86.62 3.46 L86.94 2.83 L87.27 3.21 L87.59 4.21 L87.92 5.72 L88.24 7.67 L88.57 10.04 L88.89 12.8 L89.21 15.93 L89.54 18.34 L89.86 18.31 L90.19 18.3 L90.51 14.51 L90.84 10.68 L91.16 7.37 L91.48 4.64 L91.81 2.51 L92.13 1.08 L92.46 0.52 L92.78 1.35 L93.11 3.05 L93.43 5.44 L93.76 8.42 L94.08 11.95 L94.4 15.98 L94.73 20.37 L95.05 20.91 L95.38 21.42 L95.7 21.89 L96.03 22.32 L96.35 22.73 L96.68 23.12 L97 23.49 L97 26.48 L96.68 26.72 L96.35 27.3 L96.03 27.38 L95.7 28.09 L95.38 28.73 L95.05 29.24 L94.73 29.61 L94.4 32.98 L94.08 37.87 L93.76 41.69 L93.43 44.78 L93.11 45.12 L92.78 46.07 L92.46 49.73 L92.13 48.29 L91.81 45.34 L91.48 44 L91.16 41.91 L90.84 38.86 L90.51 35.04 L90.19 31.05 L89.86 31.86 L89.54 31.69 L89.21 33.4 L88.89 36.58 L88.57 39.83 L88.24 42.57 L87.92 42.17 L87.59 46.05 L87.27 45.21 L86.94 45.21 L86.62 46.89 L86.29 44.1 L85.97 42.4 L85.65 41.69 L85.32 38.08 L85 35.51 L84.67 32.37 L84.35 29.35 L84.02 29.17 L83.7 29.36 L83.37 31.92 L83.05 36.07 L82.73 39.86 L82.4 42.55 L82.08 43.12 L81.75 43.6 L81.43 42.87 L81.1 43.57 L80.78 42.2 L80.45 38.83 L80.13 36.2 L79.81 32.91 L79.48 30.18 L79.16 30.38 L78.83 30.72 L78.51 34.82 L78.18 39.87 L77.86 41.66 L77.54 46.58 L77.21 48.43 L76.89 49.58 L76.56 48.9 L76.24 49.43 L75.91 46.58 L75.59 46.47 L75.26 40.77 L74.94 37.51 L74.62 33.39 L74.29 31.33 L73.97 31.35 L73.64 30.55 L73.32 30.64 L72.99 30.01 L72.67 33.17 L72.34 36.7 L72.02 38.74 L71.7 41.74 L71.37 44.56 L71.05 44.67 L70.72 47.25 L70.4 47.27 L70.07 47.88 L69.75 48.65 L69.42 44.69 L69.1 42.99 L68.78 40.77 L68.45 38.96 L68.13 34.31 L67.8 31.77 L67.48 35.7 L67.15 39.02 L66.83 40.38 L66.51 44.43 L66.18 44.22 L65.86 45.39 L65.53 47.01 L65.21 46.81 L64.88 47.91 L64.56 45.65 L64.23 42.37 L63.91 41.63 L63.59 38.93 L63.26 35.15 L62.94 31.96 L62.61 31.83 L62.29 31.27 L61.96 32.49 L61.64 37.58 L61.31 41.62 L60.99 43.84 L60.67 46.56 L60.34 46.76 L60.02 48.48 L59.69 49.57 L59.37 49.01 L59.04 45.41 L58.72 43.83 L58.39 40.59 L58.07 35.68 L57.75 30.91 L57.42 29.69 L57.1 29.21 L56.77 29.48 L56.45 28.97 L56.12 30.51 L55.8 34.74 L55.47 36.58 L55.15 39.83 L54.83 41.58 L54.5 43.49 L54.18 43 L53.85 45.54 L53.53 42.23 L53.2 41.4 L52.88 39.02 L52.56 35.65 L52.23 32.46 L51.91 29.78 L51.58 30.08 L51.26 30.23 L50.93 30.51 L50.61 30.48 L50.28 30.53 L49.96 33.31 L49.64 37.54 L49.31 39.67 L48.99 43.92 L48.66 46.04 L48.34 45.39 L48.01 46.42 L47.69 44.14 L47.36 41 L47.04 37.83 L46.72 35.63 L46.39 31.2 L46.07 31.2 L45.74 30.9 L45.42 30.55 L45.09 30.61 L44.77 30.37 L44.44 30.37 L44.12 31.47 L43.8 36.57 L43.47 40.39 L43.15 43.5 L42.82 45.23 L42.5 48.5 L42.17 48.68 L41.85 45.19 L41.53 44.51 L41.2 41.74 L40.88 39.32 L40.55 35.07 L40.23 29.92 L39.9 29.6 L39.58 29.69 L39.25 31.43 L38.93 35.8 L38.61 39.09 L38.28 41.91 L37.96 43.61 L37.63 47.32 L37.31 48.54 L36.98 50.27 L36.66 48.85 L36.33 49.69 L36.01 46.9 L35.69 46.35 L35.36 42.51 L35.04 41.74 L34.71 38.92 L34.39 36.03 L34.06 31.36 L33.74 31.6 L33.41 33.16 L33.09 36.12 L32.77 38.51 L32.44 41.97 L32.12 42.85 L31.79 45.39 L31.47 45.63 L31.14 45.07 L30.82 43.81 L30.49 41.7 L30.17 38.07 L29.85 35.98 L29.52 32.21 L29.2 29.36 L28.87 29.11 L28.55 29.19 L28.22 29.23 L27.9 32.27 L27.58 35.9 L27.25 38.84 L26.93 39.82 L26.6 41.07 L26.28 43.31 L25.95 43.96 L25.63 44.88 L25.3 45.09 L24.98 43.17 L24.66 41.48 L24.33 40.76 L24.01 37.94 L23.68 35.27 L23.36 31.35 L23.03 30.47 L22.71 31.16 L22.38 30.61 L22.06 34.76 L21.74 38.43 L21.41 44.09 L21.09 46.79 L20.76 50.4 L20.44 49.93 L20.11 47.52 L19.79 49.54 L19.46 45.73 L19.14 41.13 L18.82 39.45 L18.49 33.22 L18.17 30.86 L17.84 30.75 L17.52 30.95 L17.19 30.56 L16.87 30.98 L16.55 33.92 L16.22 36.69 L15.9 40.04 L15.57 39.72 L15.25 41.63 L14.92 45.6 L14.6 45.7 L14.27 44.5 L13.95 44.26 L13.63 43.95 L13.3 43.35 L12.98 41.92 L12.65 40.83 L12.33 39.62 L12 36.03 L11.68 35.88 L11.35 38.34 L11.03 40.32 L10.71 41.83 L10.38 46.53 L10.06 44.98 L9.73 49.19 L9.41 49.61 L9.08 49.14 L8.76 45.88 L8.43 47.02 L8.11 44.45 L7.79 41.91 L7.46 39.54 L7.14 38.1 L6.81 34.81 L6.49 31.7 L6.16 31.53 L5.84 36.08 L5.52 37.67 L5.19 39.89 L4.87 41.95 L4.54 45.69 L4.22 46.48 L3.89 49.15 L3.57 46.66 L3.24 49.49 L2.92 47.96 L2.6 43.81 L2.27 43.68 L1.95 37.68 L1.62 35.55 L1.3 31.94 L0.97 28.93 L0.65 27.23 L0.32 26.94 L0 26.42Z" fill="#a32ab0"/></svg><div class="pb"></div></div>
<div class="cl" style="left:649.95px;top:144.85px;height:94.9px;background:#9f02be"><span class="n" style="color:#ffd8ff">Chords Biza</span><svg style="left:100.4px;top:4.6px" width="13" height="15"><path d="M0.3 0.3 L12.2 7 L0.3 13.8Z" fill="rgba(255,255,255,.56)"/></svg><svg style="left:10.3px;top:26.5px" width="97" height="50" viewBox="0 0 97 50"><path d="M0 23.48 L0.32 23.08 L0.65 22.67 L0.97 20.78 L1.3 17.75 L1.62 14.37 L1.95 10.74 L2.27 6.97 L2.6 3.72 L2.92 2.04 L3.24 0.88 L3.57 0.46 L3.89 1 L4.22 2.12 L4.54 3.72 L4.87 5.77 L5.19 8.22 L5.52 11.06 L5.84 14.27 L6.16 17.84 L6.49 18.3 L6.81 15.47 L7.14 12.29 L7.46 9.45 L7.79 6.95 L8.11 4.82 L8.43 3.07 L8.76 1.73 L9.08 0.85 L9.41 0.57 L9.73 1.22 L10.06 2.45 L10.38 4.12 L10.71 6.19 L11.03 8.61 L11.35 11.36 L11.68 14.41 L12 13.19 L12.33 10.77 L12.65 8.64 L12.98 6.8 L13.3 5.29 L13.63 4.14 L13.95 3.43 L14.27 3.43 L14.6 4.09 L14.92 5.18 L15.25 6.64 L15.57 8.42 L15.9 10.51 L16.22 12.89 L16.55 15.56 L16.87 18.49 L17.19 19.3 L17.52 19.13 L17.84 18.96 L18.17 18.81 L18.49 15.75 L18.82 10.92 L19.14 6.78 L19.46 3.38 L19.79 0.8 L20.11 0 L20.44 0 L20.76 0.39 L21.09 2.79 L21.41 6.03 L21.74 10.02 L22.06 14.72 L22.38 18.79 L22.71 18.94 L23.03 19.1 L23.36 18.33 L23.68 15.12 L24.01 12.27 L24.33 9.79 L24.66 7.7 L24.98 6.03 L25.3 4.84 L25.63 4.22 L25.95 4.54 L26.28 5.62 L26.6 7.21 L26.93 9.24 L27.25 11.67 L27.58 14.46 L27.9 17.59 L28.22 20.59 L28.55 20.51 L28.87 20.41 L29.2 20.28 L29.52 17.83 L29.85 14.22 L30.17 11.06 L30.49 8.39 L30.82 6.26 L31.14 4.75 L31.47 4.08 L31.79 4.65 L32.12 5.97 L32.44 7.91 L32.77 10.39 L33.09 13.39 L33.41 16.86 L33.74 18.33 L34.06 18.13 L34.39 14.3 L34.71 10.85 L35.04 7.79 L35.36 5.14 L35.69 2.94 L36.01 1.2 L36.33 0 L36.66 0 L36.98 0 L37.31 1.07 L37.63 2.85 L37.96 5.11 L38.28 7.8 L38.61 10.88 L38.93 14.33 L39.25 18.13 L39.58 20.38 L39.9 20.49 L40.23 20.03 L40.55 15.29 L40.88 11.13 L41.2 7.61 L41.53 4.78 L41.85 2.73 L42.17 1.64 L42.5 2.18 L42.82 3.84 L43.15 6.33 L43.47 9.53 L43.8 13.39 L44.12 17.87 L44.44 19.66 L44.77 19.48 L45.09 19.31 L45.42 19.14 L45.74 18.98 L46.07 18.83 L46.39 18.69 L46.72 14.32 L47.04 10.5 L47.36 7.33 L47.69 4.87 L48.01 3.23 L48.34 2.71 L48.66 3.74 L48.99 5.71 L49.31 8.45 L49.64 11.88 L49.96 15.93 L50.28 18.78 L50.61 18.92 L50.93 19.08 L51.26 19.25 L51.58 19.43 L51.91 19.6 L52.23 17.18 L52.56 13.68 L52.88 10.67 L53.2 8.17 L53.53 6.24 L53.85 4.95 L54.18 4.55 L54.5 5.43 L54.83 7.07 L55.15 9.32 L55.47 12.11 L55.8 15.39 L56.12 19.13 L56.45 20.52 L56.77 20.42 L57.1 20.29 L57.42 20.15 L57.75 18.67 L58.07 14.03 L58.39 9.91 L58.72 6.37 L59.04 3.45 L59.37 1.23 L59.69 0 L60.02 0 L60.34 0.9 L60.67 2.89 L60.99 5.58 L61.31 8.92 L61.64 12.84 L61.96 17.34 L62.29 18.3 L62.61 18.32 L62.94 17.09 L63.26 13.69 L63.59 10.65 L63.91 8 L64.23 5.75 L64.56 3.94 L64.88 2.6 L65.21 1.8 L65.53 1.8 L65.86 2.74 L66.18 4.26 L66.51 6.24 L66.83 8.65 L67.15 11.43 L67.48 14.58 L67.8 18.05 L68.13 14.9 L68.45 11.54 L68.78 8.56 L69.1 5.99 L69.42 3.85 L69.75 2.21 L70.07 1.13 L70.4 0.94 L70.72 1.74 L71.05 3.13 L71.37 5.03 L71.7 7.39 L72.02 10.17 L72.34 13.36 L72.67 16.92 L72.99 19.32 L73.32 19.15 L73.64 18.99 L73.97 18.84 L74.29 18.7 L74.62 15.87 L74.94 11.44 L75.26 7.57 L75.59 4.32 L75.91 1.72 L76.24 0 L76.56 0 L76.89 0 L77.21 1.01 L77.54 3.4 L77.86 6.46 L78.18 10.15 L78.51 14.42 L78.83 19.07 L79.16 19.24 L79.48 19.41 L79.81 16.8 L80.13 13.26 L80.45 10.25 L80.78 7.79 L81.1 5.95 L81.43 4.82 L81.75 4.79 L82.08 5.98 L82.4 7.91 L82.73 10.46 L83.05 13.55 L83.37 17.16 L83.7 20.66 L84.02 20.61 L84.35 20.53 L84.67 17.58 L85 14.29 L85.32 11.33 L85.65 8.73 L85.97 6.52 L86.29 4.74 L86.62 3.46 L86.94 2.83 L87.27 3.21 L87.59 4.21 L87.92 5.72 L88.24 7.67 L88.57 10.04 L88.89 12.8 L89.21 15.93 L89.54 18.34 L89.86 18.31 L90.19 18.3 L90.51 14.51 L90.84 10.68 L91.16 7.37 L91.48 4.64 L91.81 2.51 L92.13 1.08 L92.46 0.52 L92.78 1.35 L93.11 3.05 L93.43 5.44 L93.76 8.42 L94.08 11.95 L94.4 15.98 L94.73 20.37 L95.05 20.91 L95.38 21.42 L95.7 21.89 L96.03 22.32 L96.35 22.73 L96.68 23.12 L97 23.49 L97 26.48 L96.68 26.72 L96.35 27.3 L96.03 27.38 L95.7 28.09 L95.38 28.73 L95.05 29.24 L94.73 29.61 L94.4 32.98 L94.08 37.87 L93.76 41.69 L93.43 44.78 L93.11 45.12 L92.78 46.07 L92.46 49.73 L92.13 48.29 L91.81 45.34 L91.48 44 L91.16 41.91 L90.84 38.86 L90.51 35.04 L90.19 31.05 L89.86 31.86 L89.54 31.69 L89.21 33.4 L88.89 36.58 L88.57 39.83 L88.24 42.57 L87.92 42.17 L87.59 46.05 L87.27 45.21 L86.94 45.21 L86.62 46.89 L86.29 44.1 L85.97 42.4 L85.65 41.69 L85.32 38.08 L85 35.51 L84.67 32.37 L84.35 29.35 L84.02 29.17 L83.7 29.36 L83.37 31.92 L83.05 36.07 L82.73 39.86 L82.4 42.55 L82.08 43.12 L81.75 43.6 L81.43 42.87 L81.1 43.57 L80.78 42.2 L80.45 38.83 L80.13 36.2 L79.81 32.91 L79.48 30.18 L79.16 30.38 L78.83 30.72 L78.51 34.82 L78.18 39.87 L77.86 41.66 L77.54 46.58 L77.21 48.43 L76.89 49.58 L76.56 48.9 L76.24 49.43 L75.91 46.58 L75.59 46.47 L75.26 40.77 L74.94 37.51 L74.62 33.39 L74.29 31.33 L73.97 31.35 L73.64 30.55 L73.32 30.64 L72.99 30.01 L72.67 33.17 L72.34 36.7 L72.02 38.74 L71.7 41.74 L71.37 44.56 L71.05 44.67 L70.72 47.25 L70.4 47.27 L70.07 47.88 L69.75 48.65 L69.42 44.69 L69.1 42.99 L68.78 40.77 L68.45 38.96 L68.13 34.31 L67.8 31.77 L67.48 35.7 L67.15 39.02 L66.83 40.38 L66.51 44.43 L66.18 44.22 L65.86 45.39 L65.53 47.01 L65.21 46.81 L64.88 47.91 L64.56 45.65 L64.23 42.37 L63.91 41.63 L63.59 38.93 L63.26 35.15 L62.94 31.96 L62.61 31.83 L62.29 31.27 L61.96 32.49 L61.64 37.58 L61.31 41.62 L60.99 43.84 L60.67 46.56 L60.34 46.76 L60.02 48.48 L59.69 49.57 L59.37 49.01 L59.04 45.41 L58.72 43.83 L58.39 40.59 L58.07 35.68 L57.75 30.91 L57.42 29.69 L57.1 29.21 L56.77 29.48 L56.45 28.97 L56.12 30.51 L55.8 34.74 L55.47 36.58 L55.15 39.83 L54.83 41.58 L54.5 43.49 L54.18 43 L53.85 45.54 L53.53 42.23 L53.2 41.4 L52.88 39.02 L52.56 35.65 L52.23 32.46 L51.91 29.78 L51.58 30.08 L51.26 30.23 L50.93 30.51 L50.61 30.48 L50.28 30.53 L49.96 33.31 L49.64 37.54 L49.31 39.67 L48.99 43.92 L48.66 46.04 L48.34 45.39 L48.01 46.42 L47.69 44.14 L47.36 41 L47.04 37.83 L46.72 35.63 L46.39 31.2 L46.07 31.2 L45.74 30.9 L45.42 30.55 L45.09 30.61 L44.77 30.37 L44.44 30.37 L44.12 31.47 L43.8 36.57 L43.47 40.39 L43.15 43.5 L42.82 45.23 L42.5 48.5 L42.17 48.68 L41.85 45.19 L41.53 44.51 L41.2 41.74 L40.88 39.32 L40.55 35.07 L40.23 29.92 L39.9 29.6 L39.58 29.69 L39.25 31.43 L38.93 35.8 L38.61 39.09 L38.28 41.91 L37.96 43.61 L37.63 47.32 L37.31 48.54 L36.98 50.27 L36.66 48.85 L36.33 49.69 L36.01 46.9 L35.69 46.35 L35.36 42.51 L35.04 41.74 L34.71 38.92 L34.39 36.03 L34.06 31.36 L33.74 31.6 L33.41 33.16 L33.09 36.12 L32.77 38.51 L32.44 41.97 L32.12 42.85 L31.79 45.39 L31.47 45.63 L31.14 45.07 L30.82 43.81 L30.49 41.7 L30.17 38.07 L29.85 35.98 L29.52 32.21 L29.2 29.36 L28.87 29.11 L28.55 29.19 L28.22 29.23 L27.9 32.27 L27.58 35.9 L27.25 38.84 L26.93 39.82 L26.6 41.07 L26.28 43.31 L25.95 43.96 L25.63 44.88 L25.3 45.09 L24.98 43.17 L24.66 41.48 L24.33 40.76 L24.01 37.94 L23.68 35.27 L23.36 31.35 L23.03 30.47 L22.71 31.16 L22.38 30.61 L22.06 34.76 L21.74 38.43 L21.41 44.09 L21.09 46.79 L20.76 50.4 L20.44 49.93 L20.11 47.52 L19.79 49.54 L19.46 45.73 L19.14 41.13 L18.82 39.45 L18.49 33.22 L18.17 30.86 L17.84 30.75 L17.52 30.95 L17.19 30.56 L16.87 30.98 L16.55 33.92 L16.22 36.69 L15.9 40.04 L15.57 39.72 L15.25 41.63 L14.92 45.6 L14.6 45.7 L14.27 44.5 L13.95 44.26 L13.63 43.95 L13.3 43.35 L12.98 41.92 L12.65 40.83 L12.33 39.62 L12 36.03 L11.68 35.88 L11.35 38.34 L11.03 40.32 L10.71 41.83 L10.38 46.53 L10.06 44.98 L9.73 49.19 L9.41 49.61 L9.08 49.14 L8.76 45.88 L8.43 47.02 L8.11 44.45 L7.79 41.91 L7.46 39.54 L7.14 38.1 L6.81 34.81 L6.49 31.7 L6.16 31.53 L5.84 36.08 L5.52 37.67 L5.19 39.89 L4.87 41.95 L4.54 45.69 L4.22 46.48 L3.89 49.15 L3.57 46.66 L3.24 49.49 L2.92 47.96 L2.6 43.81 L2.27 43.68 L1.95 37.68 L1.62 35.55 L1.3 31.94 L0.97 28.93 L0.65 27.23 L0.32 26.94 L0 26.42Z" fill="#780590"/></svg></div>
<div class="cl" style="left:769.4px;top:144.85px;height:94.9px;background:#9f02be"><span class="n" style="color:#ffd8ff">Chords Biza</span><svg style="left:100.4px;top:4.6px" width="13" height="15"><path d="M0.3 0.3 L12.2 7 L0.3 13.8Z" fill="rgba(255,255,255,.56)"/></svg><svg style="left:10.3px;top:26.5px" width="97" height="50" viewBox="0 0 97 50"><path d="M0 23.48 L0.32 23.08 L0.65 22.67 L0.97 20.78 L1.3 17.75 L1.62 14.37 L1.95 10.74 L2.27 6.97 L2.6 3.72 L2.92 2.04 L3.24 0.88 L3.57 0.46 L3.89 1 L4.22 2.12 L4.54 3.72 L4.87 5.77 L5.19 8.22 L5.52 11.06 L5.84 14.27 L6.16 17.84 L6.49 18.3 L6.81 15.47 L7.14 12.29 L7.46 9.45 L7.79 6.95 L8.11 4.82 L8.43 3.07 L8.76 1.73 L9.08 0.85 L9.41 0.57 L9.73 1.22 L10.06 2.45 L10.38 4.12 L10.71 6.19 L11.03 8.61 L11.35 11.36 L11.68 14.41 L12 13.19 L12.33 10.77 L12.65 8.64 L12.98 6.8 L13.3 5.29 L13.63 4.14 L13.95 3.43 L14.27 3.43 L14.6 4.09 L14.92 5.18 L15.25 6.64 L15.57 8.42 L15.9 10.51 L16.22 12.89 L16.55 15.56 L16.87 18.49 L17.19 19.3 L17.52 19.13 L17.84 18.96 L18.17 18.81 L18.49 15.75 L18.82 10.92 L19.14 6.78 L19.46 3.38 L19.79 0.8 L20.11 0 L20.44 0 L20.76 0.39 L21.09 2.79 L21.41 6.03 L21.74 10.02 L22.06 14.72 L22.38 18.79 L22.71 18.94 L23.03 19.1 L23.36 18.33 L23.68 15.12 L24.01 12.27 L24.33 9.79 L24.66 7.7 L24.98 6.03 L25.3 4.84 L25.63 4.22 L25.95 4.54 L26.28 5.62 L26.6 7.21 L26.93 9.24 L27.25 11.67 L27.58 14.46 L27.9 17.59 L28.22 20.59 L28.55 20.51 L28.87 20.41 L29.2 20.28 L29.52 17.83 L29.85 14.22 L30.17 11.06 L30.49 8.39 L30.82 6.26 L31.14 4.75 L31.47 4.08 L31.79 4.65 L32.12 5.97 L32.44 7.91 L32.77 10.39 L33.09 13.39 L33.41 16.86 L33.74 18.33 L34.06 18.13 L34.39 14.3 L34.71 10.85 L35.04 7.79 L35.36 5.14 L35.69 2.94 L36.01 1.2 L36.33 0 L36.66 0 L36.98 0 L37.31 1.07 L37.63 2.85 L37.96 5.11 L38.28 7.8 L38.61 10.88 L38.93 14.33 L39.25 18.13 L39.58 20.38 L39.9 20.49 L40.23 20.03 L40.55 15.29 L40.88 11.13 L41.2 7.61 L41.53 4.78 L41.85 2.73 L42.17 1.64 L42.5 2.18 L42.82 3.84 L43.15 6.33 L43.47 9.53 L43.8 13.39 L44.12 17.87 L44.44 19.66 L44.77 19.48 L45.09 19.31 L45.42 19.14 L45.74 18.98 L46.07 18.83 L46.39 18.69 L46.72 14.32 L47.04 10.5 L47.36 7.33 L47.69 4.87 L48.01 3.23 L48.34 2.71 L48.66 3.74 L48.99 5.71 L49.31 8.45 L49.64 11.88 L49.96 15.93 L50.28 18.78 L50.61 18.92 L50.93 19.08 L51.26 19.25 L51.58 19.43 L51.91 19.6 L52.23 17.18 L52.56 13.68 L52.88 10.67 L53.2 8.17 L53.53 6.24 L53.85 4.95 L54.18 4.55 L54.5 5.43 L54.83 7.07 L55.15 9.32 L55.47 12.11 L55.8 15.39 L56.12 19.13 L56.45 20.52 L56.77 20.42 L57.1 20.29 L57.42 20.15 L57.75 18.67 L58.07 14.03 L58.39 9.91 L58.72 6.37 L59.04 3.45 L59.37 1.23 L59.69 0 L60.02 0 L60.34 0.9 L60.67 2.89 L60.99 5.58 L61.31 8.92 L61.64 12.84 L61.96 17.34 L62.29 18.3 L62.61 18.32 L62.94 17.09 L63.26 13.69 L63.59 10.65 L63.91 8 L64.23 5.75 L64.56 3.94 L64.88 2.6 L65.21 1.8 L65.53 1.8 L65.86 2.74 L66.18 4.26 L66.51 6.24 L66.83 8.65 L67.15 11.43 L67.48 14.58 L67.8 18.05 L68.13 14.9 L68.45 11.54 L68.78 8.56 L69.1 5.99 L69.42 3.85 L69.75 2.21 L70.07 1.13 L70.4 0.94 L70.72 1.74 L71.05 3.13 L71.37 5.03 L71.7 7.39 L72.02 10.17 L72.34 13.36 L72.67 16.92 L72.99 19.32 L73.32 19.15 L73.64 18.99 L73.97 18.84 L74.29 18.7 L74.62 15.87 L74.94 11.44 L75.26 7.57 L75.59 4.32 L75.91 1.72 L76.24 0 L76.56 0 L76.89 0 L77.21 1.01 L77.54 3.4 L77.86 6.46 L78.18 10.15 L78.51 14.42 L78.83 19.07 L79.16 19.24 L79.48 19.41 L79.81 16.8 L80.13 13.26 L80.45 10.25 L80.78 7.79 L81.1 5.95 L81.43 4.82 L81.75 4.79 L82.08 5.98 L82.4 7.91 L82.73 10.46 L83.05 13.55 L83.37 17.16 L83.7 20.66 L84.02 20.61 L84.35 20.53 L84.67 17.58 L85 14.29 L85.32 11.33 L85.65 8.73 L85.97 6.52 L86.29 4.74 L86.62 3.46 L86.94 2.83 L87.27 3.21 L87.59 4.21 L87.92 5.72 L88.24 7.67 L88.57 10.04 L88.89 12.8 L89.21 15.93 L89.54 18.34 L89.86 18.31 L90.19 18.3 L90.51 14.51 L90.84 10.68 L91.16 7.37 L91.48 4.64 L91.81 2.51 L92.13 1.08 L92.46 0.52 L92.78 1.35 L93.11 3.05 L93.43 5.44 L93.76 8.42 L94.08 11.95 L94.4 15.98 L94.73 20.37 L95.05 20.91 L95.38 21.42 L95.7 21.89 L96.03 22.32 L96.35 22.73 L96.68 23.12 L97 23.49 L97 26.48 L96.68 26.72 L96.35 27.3 L96.03 27.38 L95.7 28.09 L95.38 28.73 L95.05 29.24 L94.73 29.61 L94.4 32.98 L94.08 37.87 L93.76 41.69 L93.43 44.78 L93.11 45.12 L92.78 46.07 L92.46 49.73 L92.13 48.29 L91.81 45.34 L91.48 44 L91.16 41.91 L90.84 38.86 L90.51 35.04 L90.19 31.05 L89.86 31.86 L89.54 31.69 L89.21 33.4 L88.89 36.58 L88.57 39.83 L88.24 42.57 L87.92 42.17 L87.59 46.05 L87.27 45.21 L86.94 45.21 L86.62 46.89 L86.29 44.1 L85.97 42.4 L85.65 41.69 L85.32 38.08 L85 35.51 L84.67 32.37 L84.35 29.35 L84.02 29.17 L83.7 29.36 L83.37 31.92 L83.05 36.07 L82.73 39.86 L82.4 42.55 L82.08 43.12 L81.75 43.6 L81.43 42.87 L81.1 43.57 L80.78 42.2 L80.45 38.83 L80.13 36.2 L79.81 32.91 L79.48 30.18 L79.16 30.38 L78.83 30.72 L78.51 34.82 L78.18 39.87 L77.86 41.66 L77.54 46.58 L77.21 48.43 L76.89 49.58 L76.56 48.9 L76.24 49.43 L75.91 46.58 L75.59 46.47 L75.26 40.77 L74.94 37.51 L74.62 33.39 L74.29 31.33 L73.97 31.35 L73.64 30.55 L73.32 30.64 L72.99 30.01 L72.67 33.17 L72.34 36.7 L72.02 38.74 L71.7 41.74 L71.37 44.56 L71.05 44.67 L70.72 47.25 L70.4 47.27 L70.07 47.88 L69.75 48.65 L69.42 44.69 L69.1 42.99 L68.78 40.77 L68.45 38.96 L68.13 34.31 L67.8 31.77 L67.48 35.7 L67.15 39.02 L66.83 40.38 L66.51 44.43 L66.18 44.22 L65.86 45.39 L65.53 47.01 L65.21 46.81 L64.88 47.91 L64.56 45.65 L64.23 42.37 L63.91 41.63 L63.59 38.93 L63.26 35.15 L62.94 31.96 L62.61 31.83 L62.29 31.27 L61.96 32.49 L61.64 37.58 L61.31 41.62 L60.99 43.84 L60.67 46.56 L60.34 46.76 L60.02 48.48 L59.69 49.57 L59.37 49.01 L59.04 45.41 L58.72 43.83 L58.39 40.59 L58.07 35.68 L57.75 30.91 L57.42 29.69 L57.1 29.21 L56.77 29.48 L56.45 28.97 L56.12 30.51 L55.8 34.74 L55.47 36.58 L55.15 39.83 L54.83 41.58 L54.5 43.49 L54.18 43 L53.85 45.54 L53.53 42.23 L53.2 41.4 L52.88 39.02 L52.56 35.65 L52.23 32.46 L51.91 29.78 L51.58 30.08 L51.26 30.23 L50.93 30.51 L50.61 30.48 L50.28 30.53 L49.96 33.31 L49.64 37.54 L49.31 39.67 L48.99 43.92 L48.66 46.04 L48.34 45.39 L48.01 46.42 L47.69 44.14 L47.36 41 L47.04 37.83 L46.72 35.63 L46.39 31.2 L46.07 31.2 L45.74 30.9 L45.42 30.55 L45.09 30.61 L44.77 30.37 L44.44 30.37 L44.12 31.47 L43.8 36.57 L43.47 40.39 L43.15 43.5 L42.82 45.23 L42.5 48.5 L42.17 48.68 L41.85 45.19 L41.53 44.51 L41.2 41.74 L40.88 39.32 L40.55 35.07 L40.23 29.92 L39.9 29.6 L39.58 29.69 L39.25 31.43 L38.93 35.8 L38.61 39.09 L38.28 41.91 L37.96 43.61 L37.63 47.32 L37.31 48.54 L36.98 50.27 L36.66 48.85 L36.33 49.69 L36.01 46.9 L35.69 46.35 L35.36 42.51 L35.04 41.74 L34.71 38.92 L34.39 36.03 L34.06 31.36 L33.74 31.6 L33.41 33.16 L33.09 36.12 L32.77 38.51 L32.44 41.97 L32.12 42.85 L31.79 45.39 L31.47 45.63 L31.14 45.07 L30.82 43.81 L30.49 41.7 L30.17 38.07 L29.85 35.98 L29.52 32.21 L29.2 29.36 L28.87 29.11 L28.55 29.19 L28.22 29.23 L27.9 32.27 L27.58 35.9 L27.25 38.84 L26.93 39.82 L26.6 41.07 L26.28 43.31 L25.95 43.96 L25.63 44.88 L25.3 45.09 L24.98 43.17 L24.66 41.48 L24.33 40.76 L24.01 37.94 L23.68 35.27 L23.36 31.35 L23.03 30.47 L22.71 31.16 L22.38 30.61 L22.06 34.76 L21.74 38.43 L21.41 44.09 L21.09 46.79 L20.76 50.4 L20.44 49.93 L20.11 47.52 L19.79 49.54 L19.46 45.73 L19.14 41.13 L18.82 39.45 L18.49 33.22 L18.17 30.86 L17.84 30.75 L17.52 30.95 L17.19 30.56 L16.87 30.98 L16.55 33.92 L16.22 36.69 L15.9 40.04 L15.57 39.72 L15.25 41.63 L14.92 45.6 L14.6 45.7 L14.27 44.5 L13.95 44.26 L13.63 43.95 L13.3 43.35 L12.98 41.92 L12.65 40.83 L12.33 39.62 L12 36.03 L11.68 35.88 L11.35 38.34 L11.03 40.32 L10.71 41.83 L10.38 46.53 L10.06 44.98 L9.73 49.19 L9.41 49.61 L9.08 49.14 L8.76 45.88 L8.43 47.02 L8.11 44.45 L7.79 41.91 L7.46 39.54 L7.14 38.1 L6.81 34.81 L6.49 31.7 L6.16 31.53 L5.84 36.08 L5.52 37.67 L5.19 39.89 L4.87 41.95 L4.54 45.69 L4.22 46.48 L3.89 49.15 L3.57 46.66 L3.24 49.49 L2.92 47.96 L2.6 43.81 L2.27 43.68 L1.95 37.68 L1.62 35.55 L1.3 31.94 L0.97 28.93 L0.65 27.23 L0.32 26.94 L0 26.42Z" fill="#780590"/></svg></div>
<div class="em" style="left:152.3px;top:246.8px"></div>
<div class="em" style="left:271.75px;top:246.8px"></div>
<div class="cl" style="left:291.6px;top:241.6px;height:94.9px;background:#0227b8"><span class="n" style="color:#e4eaff">Drums Biza</span><svg style="left:100.4px;top:4.6px" width="13" height="15"><path d="M0.3 0.3 L12.2 7 L0.3 13.8Z" fill="rgba(255,255,255,.56)"/></svg><svg style="left:10.3px;top:26.5px" width="97" height="50" viewBox="0 0 97 50"><path d="M0 21.45 L0.32 20.54 L0.65 18.45 L0.97 15.8 L1.3 12.92 L1.62 9.9 L1.95 6.87 L2.27 3.97 L2.6 2.03 L2.92 2.57 L3.24 3.75 L3.57 5.39 L3.89 7.39 L4.22 9.73 L4.54 12.37 L4.87 15.27 L5.19 13.82 L5.52 10.68 L5.84 7.93 L6.16 5.63 L6.49 3.81 L6.81 2.61 L7.14 2.48 L7.46 3.67 L7.79 5.53 L8.11 7.89 L8.43 10.69 L8.76 13.89 L9.08 16.5 L9.41 16.47 L9.73 16.43 L10.06 14.24 L10.38 10.41 L10.71 7.14 L11.03 4.51 L11.35 2.66 L11.68 2.22 L12 3.5 L12.33 5.66 L12.65 8.5 L12.98 11.94 L13.3 15.09 L13.63 14.96 L13.95 14.85 L14.27 14.74 L14.6 14.66 L14.92 11.29 L15.25 8.2 L15.57 5.62 L15.9 3.65 L16.22 2.44 L16.55 2.71 L16.87 4.21 L17.19 6.41 L17.52 9.18 L17.84 12.46 L18.17 14.99 L18.49 15.12 L18.82 15.26 L19.14 15.27 L19.46 11.28 L19.79 7.81 L20.11 4.94 L20.44 2.74 L20.76 1.41 L21.09 1.78 L21.41 3.58 L21.74 6.17 L22.06 9.39 L22.38 13.18 L22.71 16.5 L23.03 14.44 L23.36 11.78 L23.68 9.34 L24.01 7.15 L24.33 5.25 L24.66 3.65 L24.98 2.44 L25.3 1.75 L25.63 2.13 L25.95 3.06 L26.28 4.39 L26.6 6.05 L26.93 8.01 L27.25 10.25 L27.58 12.75 L27.9 11.92 L28.22 9.43 L28.55 7.21 L28.87 5.25 L29.2 3.6 L29.52 2.29 L29.85 1.4 L30.17 1.19 L30.49 1.91 L30.82 3.08 L31.14 4.63 L31.47 6.49 L31.79 8.63 L32.12 11.03 L32.44 13.67 L32.77 10.93 L33.09 7.71 L33.41 5 L33.74 2.85 L34.06 1.39 L34.39 1.05 L34.71 2.34 L35.04 4.42 L35.36 7.09 L35.69 10.29 L36.01 13.94 L36.33 16.48 L36.66 16.5 L36.98 16.5 L37.31 13.38 L37.63 10.52 L37.96 8.04 L38.28 5.98 L38.61 4.45 L38.93 3.67 L39.25 4.31 L39.58 5.66 L39.9 7.52 L40.23 9.83 L40.55 12.54 L40.88 15.24 L41.2 15.1 L41.53 14.97 L41.85 13.44 L42.17 10.59 L42.5 8.06 L42.82 5.88 L43.15 4.07 L43.47 2.71 L43.8 1.92 L44.12 2.28 L44.44 3.41 L44.77 5.04 L45.09 7.06 L45.42 9.45 L45.74 12.16 L46.07 14.98 L46.39 12.97 L46.72 10.25 L47.04 7.86 L47.36 5.84 L47.69 4.23 L48.01 3.09 L48.34 2.67 L48.66 3.51 L48.99 4.98 L49.31 6.9 L49.64 9.2 L49.96 11.84 L50.28 14.79 L50.61 16.5 L50.93 13.98 L51.26 10.99 L51.58 8.4 L51.91 6.28 L52.23 4.71 L52.56 4.01 L52.88 4.79 L53.2 6.29 L53.53 8.34 L53.85 10.84 L54.18 13.77 L54.5 15.39 L54.83 15.25 L55.15 15.11 L55.47 14.98 L55.8 11.76 L56.12 8.56 L56.45 5.81 L56.77 3.56 L57.1 1.89 L57.42 1.02 L57.75 1.72 L58.07 3.28 L58.39 5.44 L58.72 8.1 L59.04 11.22 L59.37 14.75 L59.69 14.86 L60.02 14.96 L60.34 11.6 L60.67 8.65 L60.99 6.16 L61.31 4.16 L61.64 2.76 L61.96 2.25 L62.29 3.29 L62.61 5.09 L62.94 7.44 L63.26 10.27 L63.59 13.52 L63.91 16.43 L64.23 16.48 L64.56 16.5 L64.88 14.78 L65.21 11.15 L65.53 7.97 L65.86 5.29 L66.18 3.21 L66.51 1.89 L66.83 2.12 L67.15 3.55 L67.48 5.66 L67.8 8.34 L68.13 11.51 L68.45 15.15 L68.78 13.5 L69.1 10.7 L69.42 8.16 L69.75 5.91 L70.07 3.97 L70.4 2.4 L70.72 1.25 L71.05 0.71 L71.37 1.28 L71.7 2.41 L72.02 3.95 L72.34 5.85 L72.67 8.08 L72.99 10.59 L73.32 13.2 L73.64 10.88 L73.97 8.8 L74.29 6.96 L74.62 5.4 L74.94 4.13 L75.26 3.2 L75.59 2.72 L75.91 3.12 L76.24 4.13 L76.56 5.51 L76.89 7.19 L77.21 9.12 L77.54 11.29 L77.86 13.38 L78.18 10.84 L78.51 8.57 L78.83 6.59 L79.16 4.94 L79.48 3.68 L79.81 2.94 L80.13 3.28 L80.45 4.28 L80.78 5.7 L81.1 7.46 L81.43 9.54 L81.75 11.9 L82.08 14.53 L82.4 15.4 L82.73 15.26 L83.05 11.35 L83.37 7.73 L83.7 4.72 L84.02 2.42 L84.35 1.05 L84.67 1.55 L85 3.31 L85.32 5.87 L85.65 9.08 L85.97 12.88 L86.29 14.54 L86.62 14.59 L86.94 14.66 L87.27 13.1 L87.59 10.01 L87.92 7.29 L88.24 4.95 L88.57 3.05 L88.89 1.65 L89.21 0.9 L89.54 1.48 L89.86 2.92 L90.19 4.9 L90.51 7.32 L90.84 10.13 L91.16 13.28 L91.48 16.36 L91.81 15.21 L92.13 12.51 L92.46 10.07 L92.78 7.92 L93.11 6.07 L93.43 4.59 L93.76 3.55 L94.08 3.33 L94.4 4.08 L94.73 6.49 L95.05 9.54 L95.38 12.57 L95.7 15.48 L96.03 18.17 L96.35 20.02 L96.68 20.77 L97 21.54 L97 28.33 L96.68 28.81 L96.35 29.59 L96.03 32.02 L95.7 34.22 L95.38 36.61 L95.05 39.73 L94.73 43.84 L94.4 43.63 L94.08 47.04 L93.76 44.17 L93.43 45.58 L93.11 43.58 L92.78 42.6 L92.46 38.31 L92.13 36.84 L91.81 34.7 L91.48 32.68 L91.16 35.48 L90.84 39.75 L90.51 42.17 L90.19 45.64 L89.86 44.96 L89.54 46.67 L89.21 49.36 L88.89 48.95 L88.57 45.8 L88.24 43.06 L87.92 41.36 L87.59 40.06 L87.27 35.55 L86.94 34.54 L86.62 34.34 L86.29 35.83 L85.97 37.2 L85.65 41.52 L85.32 42.03 L85 45.86 L84.67 47.98 L84.35 47.34 L84.02 44.93 L83.7 44.27 L83.37 41.73 L83.05 37.05 L82.73 34.7 L82.4 33.94 L82.08 34.54 L81.75 37.24 L81.43 39.88 L81.1 41.64 L80.78 42.48 L80.45 45.99 L80.13 47.55 L79.81 46.13 L79.48 45.12 L79.16 45.71 L78.83 41.84 L78.51 42 L78.18 39.46 L77.86 35.49 L77.54 38.51 L77.21 40.79 L76.89 41.12 L76.56 44.95 L76.24 45.98 L75.91 46.6 L75.59 44.87 L75.26 45.02 L74.94 43.61 L74.62 43.64 L74.29 41.22 L73.97 39.62 L73.64 39.32 L73.32 37.17 L72.99 38.97 L72.67 40.6 L72.34 44.73 L72.02 46.47 L71.7 47.41 L71.37 49.45 L71.05 48.23 L70.72 47.93 L70.4 46.53 L70.07 45.84 L69.75 43.37 L69.42 41.19 L69.1 38.99 L68.78 35.94 L68.45 35.11 L68.13 38.51 L67.8 41.16 L67.48 43.59 L67.15 46.53 L66.83 46.15 L66.51 46.26 L66.18 46.13 L65.86 42.68 L65.53 42.12 L65.21 38.42 L64.88 34.84 L64.56 32.93 L64.23 33.26 L63.91 33.53 L63.59 35.98 L63.26 38.37 L62.94 42.7 L62.61 42.54 L62.29 44.74 L61.96 46.62 L61.64 44.63 L61.31 45.08 L60.99 43.18 L60.67 40.7 L60.34 38.76 L60.02 34.52 L59.69 35.39 L59.37 34.97 L59.04 38.14 L58.72 40.83 L58.39 45.07 L58.07 44.57 L57.75 47.05 L57.42 47.1 L57.1 47.51 L56.77 44.7 L56.45 42.79 L56.12 40.13 L55.8 37.1 L55.47 35.14 L55.15 35.08 L54.83 34.26 L54.5 34.89 L54.18 35.83 L53.85 38.93 L53.53 42.25 L53.2 41.51 L52.88 43.21 L52.56 45.31 L52.23 43.99 L51.91 43.45 L51.58 42.21 L51.26 39.18 L50.93 34.95 L50.61 33.58 L50.28 35.46 L49.96 36.9 L49.64 39.22 L49.31 41.42 L48.99 44.94 L48.66 47.17 L48.34 46.09 L48.01 45.67 L47.69 46.51 L47.36 44.31 L47.04 40.99 L46.72 39.84 L46.39 35.93 L46.07 34.58 L45.74 37.84 L45.42 40.63 L45.09 43.39 L44.77 44.68 L44.44 44.29 L44.12 47.9 L43.8 47.72 L43.47 46.32 L43.15 46.23 L42.82 44.58 L42.5 41.6 L42.17 38.15 L41.85 35.54 L41.53 34.19 L41.2 34.06 L40.88 34.16 L40.55 37.87 L40.23 40.75 L39.9 43 L39.58 43.41 L39.25 46.38 L38.93 46.14 L38.61 43.94 L38.28 42.58 L37.96 40 L37.63 37.81 L37.31 35.89 L36.98 33.19 L36.66 32.79 L36.33 33.51 L36.01 36.18 L35.69 39.84 L35.36 43.2 L35.04 46.36 L34.71 47.88 L34.39 46.93 L34.06 47.02 L33.74 47.25 L33.41 44.31 L33.09 42.35 L32.77 37.76 L32.44 35.64 L32.12 37.88 L31.79 41.23 L31.47 43.85 L31.14 46.12 L30.82 46.14 L30.49 45.42 L30.17 48.02 L29.85 46.32 L29.52 46.9 L29.2 47.09 L28.87 42.45 L28.55 41.12 L28.22 40.76 L27.9 37.07 L27.58 36.45 L27.25 38.22 L26.93 40.18 L26.6 43.14 L26.28 44.67 L25.95 47.79 L25.63 48.24 L25.3 45.92 L24.98 46.17 L24.66 44.97 L24.33 43.18 L24.01 41.13 L23.68 40.32 L23.36 38.49 L23.03 34.33 L22.71 32.98 L22.38 35.6 L22.06 39.11 L21.74 41.57 L21.41 44.03 L21.09 46.7 L20.76 46.37 L20.44 45.33 L20.11 42.87 L19.79 40.3 L19.46 38.47 L19.14 33.72 L18.82 34.19 L18.49 34.31 L18.17 35.08 L17.84 37.79 L17.52 40.89 L17.19 44.04 L16.87 43.48 L16.55 47.03 L16.22 47.08 L15.9 45.55 L15.57 44.19 L15.25 42.35 L14.92 38.3 L14.6 34.71 L14.27 34.71 L13.95 33.94 L13.63 34.25 L13.3 34.65 L12.98 37.51 L12.65 40.14 L12.33 42.74 L12 44.52 L11.68 45.6 L11.35 48.08 L11.03 45.93 L10.71 41.74 L10.38 38.81 L10.06 34.95 L9.73 33.73 L9.41 33.62 L9.08 33.69 L8.76 35.76 L8.43 38.62 L8.11 40.28 L7.79 44.85 L7.46 45.1 L7.14 45.71 L6.81 45.17 L6.49 46.25 L6.16 42.23 L5.84 40.34 L5.52 37.99 L5.19 35.66 L4.87 33.6 L4.54 37.47 L4.22 39.38 L3.89 41.3 L3.57 44.84 L3.24 47.07 L2.92 47.06 L2.6 47.79 L2.27 43.71 L1.95 42.88 L1.62 39.43 L1.3 37.46 L0.97 34.33 L0.65 31.24 L0.32 29.33 L0 28.47Z" fill="#7d97f2"/><g fill="#1a38b8" opacity=".9"><rect x="48" y="-2" width="1" height="54" opacity="1"/><path d="M45.3 -5h6.4l-3.2 4.6z M45.3 55h6.4l-3.2 -4.6z"/></g></svg></div>
<div class="cl" style="left:411.05px;top:241.6px;height:94.9px;background:#0227b8"><span class="n" style="color:#e4eaff">Drums Biza</span><svg style="left:100.4px;top:4.6px" width="13" height="15"><path d="M0.3 0.3 L12.2 7 L0.3 13.8Z" fill="rgba(255,255,255,.56)"/></svg><svg style="left:10.3px;top:26.5px" width="97" height="50" viewBox="0 0 97 50"><path d="M0 21.45 L0.32 20.54 L0.65 18.45 L0.97 15.8 L1.3 12.92 L1.62 9.9 L1.95 6.87 L2.27 3.97 L2.6 2.03 L2.92 2.57 L3.24 3.75 L3.57 5.39 L3.89 7.39 L4.22 9.73 L4.54 12.37 L4.87 15.27 L5.19 13.82 L5.52 10.68 L5.84 7.93 L6.16 5.63 L6.49 3.81 L6.81 2.61 L7.14 2.48 L7.46 3.67 L7.79 5.53 L8.11 7.89 L8.43 10.69 L8.76 13.89 L9.08 16.5 L9.41 16.47 L9.73 16.43 L10.06 14.24 L10.38 10.41 L10.71 7.14 L11.03 4.51 L11.35 2.66 L11.68 2.22 L12 3.5 L12.33 5.66 L12.65 8.5 L12.98 11.94 L13.3 15.09 L13.63 14.96 L13.95 14.85 L14.27 14.74 L14.6 14.66 L14.92 11.29 L15.25 8.2 L15.57 5.62 L15.9 3.65 L16.22 2.44 L16.55 2.71 L16.87 4.21 L17.19 6.41 L17.52 9.18 L17.84 12.46 L18.17 14.99 L18.49 15.12 L18.82 15.26 L19.14 15.27 L19.46 11.28 L19.79 7.81 L20.11 4.94 L20.44 2.74 L20.76 1.41 L21.09 1.78 L21.41 3.58 L21.74 6.17 L22.06 9.39 L22.38 13.18 L22.71 16.5 L23.03 14.44 L23.36 11.78 L23.68 9.34 L24.01 7.15 L24.33 5.25 L24.66 3.65 L24.98 2.44 L25.3 1.75 L25.63 2.13 L25.95 3.06 L26.28 4.39 L26.6 6.05 L26.93 8.01 L27.25 10.25 L27.58 12.75 L27.9 11.92 L28.22 9.43 L28.55 7.21 L28.87 5.25 L29.2 3.6 L29.52 2.29 L29.85 1.4 L30.17 1.19 L30.49 1.91 L30.82 3.08 L31.14 4.63 L31.47 6.49 L31.79 8.63 L32.12 11.03 L32.44 13.67 L32.77 10.93 L33.09 7.71 L33.41 5 L33.74 2.85 L34.06 1.39 L34.39 1.05 L34.71 2.34 L35.04 4.42 L35.36 7.09 L35.69 10.29 L36.01 13.94 L36.33 16.48 L36.66 16.5 L36.98 16.5 L37.31 13.38 L37.63 10.52 L37.96 8.04 L38.28 5.98 L38.61 4.45 L38.93 3.67 L39.25 4.31 L39.58 5.66 L39.9 7.52 L40.23 9.83 L40.55 12.54 L40.88 15.24 L41.2 15.1 L41.53 14.97 L41.85 13.44 L42.17 10.59 L42.5 8.06 L42.82 5.88 L43.15 4.07 L43.47 2.71 L43.8 1.92 L44.12 2.28 L44.44 3.41 L44.77 5.04 L45.09 7.06 L45.42 9.45 L45.74 12.16 L46.07 14.98 L46.39 12.97 L46.72 10.25 L47.04 7.86 L47.36 5.84 L47.69 4.23 L48.01 3.09 L48.34 2.67 L48.66 3.51 L48.99 4.98 L49.31 6.9 L49.64 9.2 L49.96 11.84 L50.28 14.79 L50.61 16.5 L50.93 13.98 L51.26 10.99 L51.58 8.4 L51.91 6.28 L52.23 4.71 L52.56 4.01 L52.88 4.79 L53.2 6.29 L53.53 8.34 L53.85 10.84 L54.18 13.77 L54.5 15.39 L54.83 15.25 L55.15 15.11 L55.47 14.98 L55.8 11.76 L56.12 8.56 L56.45 5.81 L56.77 3.56 L57.1 1.89 L57.42 1.02 L57.75 1.72 L58.07 3.28 L58.39 5.44 L58.72 8.1 L59.04 11.22 L59.37 14.75 L59.69 14.86 L60.02 14.96 L60.34 11.6 L60.67 8.65 L60.99 6.16 L61.31 4.16 L61.64 2.76 L61.96 2.25 L62.29 3.29 L62.61 5.09 L62.94 7.44 L63.26 10.27 L63.59 13.52 L63.91 16.43 L64.23 16.48 L64.56 16.5 L64.88 14.78 L65.21 11.15 L65.53 7.97 L65.86 5.29 L66.18 3.21 L66.51 1.89 L66.83 2.12 L67.15 3.55 L67.48 5.66 L67.8 8.34 L68.13 11.51 L68.45 15.15 L68.78 13.5 L69.1 10.7 L69.42 8.16 L69.75 5.91 L70.07 3.97 L70.4 2.4 L70.72 1.25 L71.05 0.71 L71.37 1.28 L71.7 2.41 L72.02 3.95 L72.34 5.85 L72.67 8.08 L72.99 10.59 L73.32 13.2 L73.64 10.88 L73.97 8.8 L74.29 6.96 L74.62 5.4 L74.94 4.13 L75.26 3.2 L75.59 2.72 L75.91 3.12 L76.24 4.13 L76.56 5.51 L76.89 7.19 L77.21 9.12 L77.54 11.29 L77.86 13.38 L78.18 10.84 L78.51 8.57 L78.83 6.59 L79.16 4.94 L79.48 3.68 L79.81 2.94 L80.13 3.28 L80.45 4.28 L80.78 5.7 L81.1 7.46 L81.43 9.54 L81.75 11.9 L82.08 14.53 L82.4 15.4 L82.73 15.26 L83.05 11.35 L83.37 7.73 L83.7 4.72 L84.02 2.42 L84.35 1.05 L84.67 1.55 L85 3.31 L85.32 5.87 L85.65 9.08 L85.97 12.88 L86.29 14.54 L86.62 14.59 L86.94 14.66 L87.27 13.1 L87.59 10.01 L87.92 7.29 L88.24 4.95 L88.57 3.05 L88.89 1.65 L89.21 0.9 L89.54 1.48 L89.86 2.92 L90.19 4.9 L90.51 7.32 L90.84 10.13 L91.16 13.28 L91.48 16.36 L91.81 15.21 L92.13 12.51 L92.46 10.07 L92.78 7.92 L93.11 6.07 L93.43 4.59 L93.76 3.55 L94.08 3.33 L94.4 4.08 L94.73 6.49 L95.05 9.54 L95.38 12.57 L95.7 15.48 L96.03 18.17 L96.35 20.02 L96.68 20.77 L97 21.54 L97 28.33 L96.68 28.81 L96.35 29.59 L96.03 32.02 L95.7 34.22 L95.38 36.61 L95.05 39.73 L94.73 43.84 L94.4 43.63 L94.08 47.04 L93.76 44.17 L93.43 45.58 L93.11 43.58 L92.78 42.6 L92.46 38.31 L92.13 36.84 L91.81 34.7 L91.48 32.68 L91.16 35.48 L90.84 39.75 L90.51 42.17 L90.19 45.64 L89.86 44.96 L89.54 46.67 L89.21 49.36 L88.89 48.95 L88.57 45.8 L88.24 43.06 L87.92 41.36 L87.59 40.06 L87.27 35.55 L86.94 34.54 L86.62 34.34 L86.29 35.83 L85.97 37.2 L85.65 41.52 L85.32 42.03 L85 45.86 L84.67 47.98 L84.35 47.34 L84.02 44.93 L83.7 44.27 L83.37 41.73 L83.05 37.05 L82.73 34.7 L82.4 33.94 L82.08 34.54 L81.75 37.24 L81.43 39.88 L81.1 41.64 L80.78 42.48 L80.45 45.99 L80.13 47.55 L79.81 46.13 L79.48 45.12 L79.16 45.71 L78.83 41.84 L78.51 42 L78.18 39.46 L77.86 35.49 L77.54 38.51 L77.21 40.79 L76.89 41.12 L76.56 44.95 L76.24 45.98 L75.91 46.6 L75.59 44.87 L75.26 45.02 L74.94 43.61 L74.62 43.64 L74.29 41.22 L73.97 39.62 L73.64 39.32 L73.32 37.17 L72.99 38.97 L72.67 40.6 L72.34 44.73 L72.02 46.47 L71.7 47.41 L71.37 49.45 L71.05 48.23 L70.72 47.93 L70.4 46.53 L70.07 45.84 L69.75 43.37 L69.42 41.19 L69.1 38.99 L68.78 35.94 L68.45 35.11 L68.13 38.51 L67.8 41.16 L67.48 43.59 L67.15 46.53 L66.83 46.15 L66.51 46.26 L66.18 46.13 L65.86 42.68 L65.53 42.12 L65.21 38.42 L64.88 34.84 L64.56 32.93 L64.23 33.26 L63.91 33.53 L63.59 35.98 L63.26 38.37 L62.94 42.7 L62.61 42.54 L62.29 44.74 L61.96 46.62 L61.64 44.63 L61.31 45.08 L60.99 43.18 L60.67 40.7 L60.34 38.76 L60.02 34.52 L59.69 35.39 L59.37 34.97 L59.04 38.14 L58.72 40.83 L58.39 45.07 L58.07 44.57 L57.75 47.05 L57.42 47.1 L57.1 47.51 L56.77 44.7 L56.45 42.79 L56.12 40.13 L55.8 37.1 L55.47 35.14 L55.15 35.08 L54.83 34.26 L54.5 34.89 L54.18 35.83 L53.85 38.93 L53.53 42.25 L53.2 41.51 L52.88 43.21 L52.56 45.31 L52.23 43.99 L51.91 43.45 L51.58 42.21 L51.26 39.18 L50.93 34.95 L50.61 33.58 L50.28 35.46 L49.96 36.9 L49.64 39.22 L49.31 41.42 L48.99 44.94 L48.66 47.17 L48.34 46.09 L48.01 45.67 L47.69 46.51 L47.36 44.31 L47.04 40.99 L46.72 39.84 L46.39 35.93 L46.07 34.58 L45.74 37.84 L45.42 40.63 L45.09 43.39 L44.77 44.68 L44.44 44.29 L44.12 47.9 L43.8 47.72 L43.47 46.32 L43.15 46.23 L42.82 44.58 L42.5 41.6 L42.17 38.15 L41.85 35.54 L41.53 34.19 L41.2 34.06 L40.88 34.16 L40.55 37.87 L40.23 40.75 L39.9 43 L39.58 43.41 L39.25 46.38 L38.93 46.14 L38.61 43.94 L38.28 42.58 L37.96 40 L37.63 37.81 L37.31 35.89 L36.98 33.19 L36.66 32.79 L36.33 33.51 L36.01 36.18 L35.69 39.84 L35.36 43.2 L35.04 46.36 L34.71 47.88 L34.39 46.93 L34.06 47.02 L33.74 47.25 L33.41 44.31 L33.09 42.35 L32.77 37.76 L32.44 35.64 L32.12 37.88 L31.79 41.23 L31.47 43.85 L31.14 46.12 L30.82 46.14 L30.49 45.42 L30.17 48.02 L29.85 46.32 L29.52 46.9 L29.2 47.09 L28.87 42.45 L28.55 41.12 L28.22 40.76 L27.9 37.07 L27.58 36.45 L27.25 38.22 L26.93 40.18 L26.6 43.14 L26.28 44.67 L25.95 47.79 L25.63 48.24 L25.3 45.92 L24.98 46.17 L24.66 44.97 L24.33 43.18 L24.01 41.13 L23.68 40.32 L23.36 38.49 L23.03 34.33 L22.71 32.98 L22.38 35.6 L22.06 39.11 L21.74 41.57 L21.41 44.03 L21.09 46.7 L20.76 46.37 L20.44 45.33 L20.11 42.87 L19.79 40.3 L19.46 38.47 L19.14 33.72 L18.82 34.19 L18.49 34.31 L18.17 35.08 L17.84 37.79 L17.52 40.89 L17.19 44.04 L16.87 43.48 L16.55 47.03 L16.22 47.08 L15.9 45.55 L15.57 44.19 L15.25 42.35 L14.92 38.3 L14.6 34.71 L14.27 34.71 L13.95 33.94 L13.63 34.25 L13.3 34.65 L12.98 37.51 L12.65 40.14 L12.33 42.74 L12 44.52 L11.68 45.6 L11.35 48.08 L11.03 45.93 L10.71 41.74 L10.38 38.81 L10.06 34.95 L9.73 33.73 L9.41 33.62 L9.08 33.69 L8.76 35.76 L8.43 38.62 L8.11 40.28 L7.79 44.85 L7.46 45.1 L7.14 45.71 L6.81 45.17 L6.49 46.25 L6.16 42.23 L5.84 40.34 L5.52 37.99 L5.19 35.66 L4.87 33.6 L4.54 37.47 L4.22 39.38 L3.89 41.3 L3.57 44.84 L3.24 47.07 L2.92 47.06 L2.6 47.79 L2.27 43.71 L1.95 42.88 L1.62 39.43 L1.3 37.46 L0.97 34.33 L0.65 31.24 L0.32 29.33 L0 28.47Z" fill="#7d97f2"/><g fill="#1a38b8" opacity=".9"><rect x="48" y="-2" width="1" height="54" opacity="1"/><path d="M45.3 -5h6.4l-3.2 4.6z M45.3 55h6.4l-3.2 -4.6z"/></g></svg></div>
<div class="cl" style="left:530.5px;top:241.6px;height:94.9px;background:#2b60ff;box-shadow:0 0 0 1.2px rgba(10,12,14,.5), inset 0 0 0 1.3px rgba(255,255,255,.28)"><span class="n" style="color:#e4eaff">Drums Biza</span><svg style="left:100.4px;top:4.6px" width="13" height="15"><path d="M0.3 0.3 L12.2 7 L0.3 13.8Z" fill="#fff"/></svg><svg style="left:10.3px;top:26.5px" width="97" height="50" viewBox="0 0 97 50"><path d="M0 21.45 L0.32 20.54 L0.65 18.45 L0.97 15.8 L1.3 12.92 L1.62 9.9 L1.95 6.87 L2.27 3.97 L2.6 2.03 L2.92 2.57 L3.24 3.75 L3.57 5.39 L3.89 7.39 L4.22 9.73 L4.54 12.37 L4.87 15.27 L5.19 13.82 L5.52 10.68 L5.84 7.93 L6.16 5.63 L6.49 3.81 L6.81 2.61 L7.14 2.48 L7.46 3.67 L7.79 5.53 L8.11 7.89 L8.43 10.69 L8.76 13.89 L9.08 16.5 L9.41 16.47 L9.73 16.43 L10.06 14.24 L10.38 10.41 L10.71 7.14 L11.03 4.51 L11.35 2.66 L11.68 2.22 L12 3.5 L12.33 5.66 L12.65 8.5 L12.98 11.94 L13.3 15.09 L13.63 14.96 L13.95 14.85 L14.27 14.74 L14.6 14.66 L14.92 11.29 L15.25 8.2 L15.57 5.62 L15.9 3.65 L16.22 2.44 L16.55 2.71 L16.87 4.21 L17.19 6.41 L17.52 9.18 L17.84 12.46 L18.17 14.99 L18.49 15.12 L18.82 15.26 L19.14 15.27 L19.46 11.28 L19.79 7.81 L20.11 4.94 L20.44 2.74 L20.76 1.41 L21.09 1.78 L21.41 3.58 L21.74 6.17 L22.06 9.39 L22.38 13.18 L22.71 16.5 L23.03 14.44 L23.36 11.78 L23.68 9.34 L24.01 7.15 L24.33 5.25 L24.66 3.65 L24.98 2.44 L25.3 1.75 L25.63 2.13 L25.95 3.06 L26.28 4.39 L26.6 6.05 L26.93 8.01 L27.25 10.25 L27.58 12.75 L27.9 11.92 L28.22 9.43 L28.55 7.21 L28.87 5.25 L29.2 3.6 L29.52 2.29 L29.85 1.4 L30.17 1.19 L30.49 1.91 L30.82 3.08 L31.14 4.63 L31.47 6.49 L31.79 8.63 L32.12 11.03 L32.44 13.67 L32.77 10.93 L33.09 7.71 L33.41 5 L33.74 2.85 L34.06 1.39 L34.39 1.05 L34.71 2.34 L35.04 4.42 L35.36 7.09 L35.69 10.29 L36.01 13.94 L36.33 16.48 L36.66 16.5 L36.98 16.5 L37.31 13.38 L37.63 10.52 L37.96 8.04 L38.28 5.98 L38.61 4.45 L38.93 3.67 L39.25 4.31 L39.58 5.66 L39.9 7.52 L40.23 9.83 L40.55 12.54 L40.88 15.24 L41.2 15.1 L41.53 14.97 L41.85 13.44 L42.17 10.59 L42.5 8.06 L42.82 5.88 L43.15 4.07 L43.47 2.71 L43.8 1.92 L44.12 2.28 L44.44 3.41 L44.77 5.04 L45.09 7.06 L45.42 9.45 L45.74 12.16 L46.07 14.98 L46.39 12.97 L46.72 10.25 L47.04 7.86 L47.36 5.84 L47.69 4.23 L48.01 3.09 L48.34 2.67 L48.66 3.51 L48.99 4.98 L49.31 6.9 L49.64 9.2 L49.96 11.84 L50.28 14.79 L50.61 16.5 L50.93 13.98 L51.26 10.99 L51.58 8.4 L51.91 6.28 L52.23 4.71 L52.56 4.01 L52.88 4.79 L53.2 6.29 L53.53 8.34 L53.85 10.84 L54.18 13.77 L54.5 15.39 L54.83 15.25 L55.15 15.11 L55.47 14.98 L55.8 11.76 L56.12 8.56 L56.45 5.81 L56.77 3.56 L57.1 1.89 L57.42 1.02 L57.75 1.72 L58.07 3.28 L58.39 5.44 L58.72 8.1 L59.04 11.22 L59.37 14.75 L59.69 14.86 L60.02 14.96 L60.34 11.6 L60.67 8.65 L60.99 6.16 L61.31 4.16 L61.64 2.76 L61.96 2.25 L62.29 3.29 L62.61 5.09 L62.94 7.44 L63.26 10.27 L63.59 13.52 L63.91 16.43 L64.23 16.48 L64.56 16.5 L64.88 14.78 L65.21 11.15 L65.53 7.97 L65.86 5.29 L66.18 3.21 L66.51 1.89 L66.83 2.12 L67.15 3.55 L67.48 5.66 L67.8 8.34 L68.13 11.51 L68.45 15.15 L68.78 13.5 L69.1 10.7 L69.42 8.16 L69.75 5.91 L70.07 3.97 L70.4 2.4 L70.72 1.25 L71.05 0.71 L71.37 1.28 L71.7 2.41 L72.02 3.95 L72.34 5.85 L72.67 8.08 L72.99 10.59 L73.32 13.2 L73.64 10.88 L73.97 8.8 L74.29 6.96 L74.62 5.4 L74.94 4.13 L75.26 3.2 L75.59 2.72 L75.91 3.12 L76.24 4.13 L76.56 5.51 L76.89 7.19 L77.21 9.12 L77.54 11.29 L77.86 13.38 L78.18 10.84 L78.51 8.57 L78.83 6.59 L79.16 4.94 L79.48 3.68 L79.81 2.94 L80.13 3.28 L80.45 4.28 L80.78 5.7 L81.1 7.46 L81.43 9.54 L81.75 11.9 L82.08 14.53 L82.4 15.4 L82.73 15.26 L83.05 11.35 L83.37 7.73 L83.7 4.72 L84.02 2.42 L84.35 1.05 L84.67 1.55 L85 3.31 L85.32 5.87 L85.65 9.08 L85.97 12.88 L86.29 14.54 L86.62 14.59 L86.94 14.66 L87.27 13.1 L87.59 10.01 L87.92 7.29 L88.24 4.95 L88.57 3.05 L88.89 1.65 L89.21 0.9 L89.54 1.48 L89.86 2.92 L90.19 4.9 L90.51 7.32 L90.84 10.13 L91.16 13.28 L91.48 16.36 L91.81 15.21 L92.13 12.51 L92.46 10.07 L92.78 7.92 L93.11 6.07 L93.43 4.59 L93.76 3.55 L94.08 3.33 L94.4 4.08 L94.73 6.49 L95.05 9.54 L95.38 12.57 L95.7 15.48 L96.03 18.17 L96.35 20.02 L96.68 20.77 L97 21.54 L97 28.33 L96.68 28.81 L96.35 29.59 L96.03 32.02 L95.7 34.22 L95.38 36.61 L95.05 39.73 L94.73 43.84 L94.4 43.63 L94.08 47.04 L93.76 44.17 L93.43 45.58 L93.11 43.58 L92.78 42.6 L92.46 38.31 L92.13 36.84 L91.81 34.7 L91.48 32.68 L91.16 35.48 L90.84 39.75 L90.51 42.17 L90.19 45.64 L89.86 44.96 L89.54 46.67 L89.21 49.36 L88.89 48.95 L88.57 45.8 L88.24 43.06 L87.92 41.36 L87.59 40.06 L87.27 35.55 L86.94 34.54 L86.62 34.34 L86.29 35.83 L85.97 37.2 L85.65 41.52 L85.32 42.03 L85 45.86 L84.67 47.98 L84.35 47.34 L84.02 44.93 L83.7 44.27 L83.37 41.73 L83.05 37.05 L82.73 34.7 L82.4 33.94 L82.08 34.54 L81.75 37.24 L81.43 39.88 L81.1 41.64 L80.78 42.48 L80.45 45.99 L80.13 47.55 L79.81 46.13 L79.48 45.12 L79.16 45.71 L78.83 41.84 L78.51 42 L78.18 39.46 L77.86 35.49 L77.54 38.51 L77.21 40.79 L76.89 41.12 L76.56 44.95 L76.24 45.98 L75.91 46.6 L75.59 44.87 L75.26 45.02 L74.94 43.61 L74.62 43.64 L74.29 41.22 L73.97 39.62 L73.64 39.32 L73.32 37.17 L72.99 38.97 L72.67 40.6 L72.34 44.73 L72.02 46.47 L71.7 47.41 L71.37 49.45 L71.05 48.23 L70.72 47.93 L70.4 46.53 L70.07 45.84 L69.75 43.37 L69.42 41.19 L69.1 38.99 L68.78 35.94 L68.45 35.11 L68.13 38.51 L67.8 41.16 L67.48 43.59 L67.15 46.53 L66.83 46.15 L66.51 46.26 L66.18 46.13 L65.86 42.68 L65.53 42.12 L65.21 38.42 L64.88 34.84 L64.56 32.93 L64.23 33.26 L63.91 33.53 L63.59 35.98 L63.26 38.37 L62.94 42.7 L62.61 42.54 L62.29 44.74 L61.96 46.62 L61.64 44.63 L61.31 45.08 L60.99 43.18 L60.67 40.7 L60.34 38.76 L60.02 34.52 L59.69 35.39 L59.37 34.97 L59.04 38.14 L58.72 40.83 L58.39 45.07 L58.07 44.57 L57.75 47.05 L57.42 47.1 L57.1 47.51 L56.77 44.7 L56.45 42.79 L56.12 40.13 L55.8 37.1 L55.47 35.14 L55.15 35.08 L54.83 34.26 L54.5 34.89 L54.18 35.83 L53.85 38.93 L53.53 42.25 L53.2 41.51 L52.88 43.21 L52.56 45.31 L52.23 43.99 L51.91 43.45 L51.58 42.21 L51.26 39.18 L50.93 34.95 L50.61 33.58 L50.28 35.46 L49.96 36.9 L49.64 39.22 L49.31 41.42 L48.99 44.94 L48.66 47.17 L48.34 46.09 L48.01 45.67 L47.69 46.51 L47.36 44.31 L47.04 40.99 L46.72 39.84 L46.39 35.93 L46.07 34.58 L45.74 37.84 L45.42 40.63 L45.09 43.39 L44.77 44.68 L44.44 44.29 L44.12 47.9 L43.8 47.72 L43.47 46.32 L43.15 46.23 L42.82 44.58 L42.5 41.6 L42.17 38.15 L41.85 35.54 L41.53 34.19 L41.2 34.06 L40.88 34.16 L40.55 37.87 L40.23 40.75 L39.9 43 L39.58 43.41 L39.25 46.38 L38.93 46.14 L38.61 43.94 L38.28 42.58 L37.96 40 L37.63 37.81 L37.31 35.89 L36.98 33.19 L36.66 32.79 L36.33 33.51 L36.01 36.18 L35.69 39.84 L35.36 43.2 L35.04 46.36 L34.71 47.88 L34.39 46.93 L34.06 47.02 L33.74 47.25 L33.41 44.31 L33.09 42.35 L32.77 37.76 L32.44 35.64 L32.12 37.88 L31.79 41.23 L31.47 43.85 L31.14 46.12 L30.82 46.14 L30.49 45.42 L30.17 48.02 L29.85 46.32 L29.52 46.9 L29.2 47.09 L28.87 42.45 L28.55 41.12 L28.22 40.76 L27.9 37.07 L27.58 36.45 L27.25 38.22 L26.93 40.18 L26.6 43.14 L26.28 44.67 L25.95 47.79 L25.63 48.24 L25.3 45.92 L24.98 46.17 L24.66 44.97 L24.33 43.18 L24.01 41.13 L23.68 40.32 L23.36 38.49 L23.03 34.33 L22.71 32.98 L22.38 35.6 L22.06 39.11 L21.74 41.57 L21.41 44.03 L21.09 46.7 L20.76 46.37 L20.44 45.33 L20.11 42.87 L19.79 40.3 L19.46 38.47 L19.14 33.72 L18.82 34.19 L18.49 34.31 L18.17 35.08 L17.84 37.79 L17.52 40.89 L17.19 44.04 L16.87 43.48 L16.55 47.03 L16.22 47.08 L15.9 45.55 L15.57 44.19 L15.25 42.35 L14.92 38.3 L14.6 34.71 L14.27 34.71 L13.95 33.94 L13.63 34.25 L13.3 34.65 L12.98 37.51 L12.65 40.14 L12.33 42.74 L12 44.52 L11.68 45.6 L11.35 48.08 L11.03 45.93 L10.71 41.74 L10.38 38.81 L10.06 34.95 L9.73 33.73 L9.41 33.62 L9.08 33.69 L8.76 35.76 L8.43 38.62 L8.11 40.28 L7.79 44.85 L7.46 45.1 L7.14 45.71 L6.81 45.17 L6.49 46.25 L6.16 42.23 L5.84 40.34 L5.52 37.99 L5.19 35.66 L4.87 33.6 L4.54 37.47 L4.22 39.38 L3.89 41.3 L3.57 44.84 L3.24 47.07 L2.92 47.06 L2.6 47.79 L2.27 43.71 L1.95 42.88 L1.62 39.43 L1.3 37.46 L0.97 34.33 L0.65 31.24 L0.32 29.33 L0 28.47Z" fill="#1f44c6"/><g fill="#1f44c6" opacity=".8"><rect x="48" y="-2" width="1" height="54" opacity="1"/><path d="M45.3 -5h6.4l-3.2 4.6z M45.3 55h6.4l-3.2 -4.6z"/></g></svg><div class="pb"></div></div>
<div class="cl" style="left:649.95px;top:241.6px;height:94.9px;background:#0227b8"><span class="n" style="color:#e4eaff">Drums Biza</span><svg style="left:100.4px;top:4.6px" width="13" height="15"><path d="M0.3 0.3 L12.2 7 L0.3 13.8Z" fill="rgba(255,255,255,.56)"/></svg><svg style="left:10.3px;top:26.5px" width="97" height="50" viewBox="0 0 97 50"><path d="M0 21.45 L0.32 20.54 L0.65 18.45 L0.97 15.8 L1.3 12.92 L1.62 9.9 L1.95 6.87 L2.27 3.97 L2.6 2.03 L2.92 2.57 L3.24 3.75 L3.57 5.39 L3.89 7.39 L4.22 9.73 L4.54 12.37 L4.87 15.27 L5.19 13.82 L5.52 10.68 L5.84 7.93 L6.16 5.63 L6.49 3.81 L6.81 2.61 L7.14 2.48 L7.46 3.67 L7.79 5.53 L8.11 7.89 L8.43 10.69 L8.76 13.89 L9.08 16.5 L9.41 16.47 L9.73 16.43 L10.06 14.24 L10.38 10.41 L10.71 7.14 L11.03 4.51 L11.35 2.66 L11.68 2.22 L12 3.5 L12.33 5.66 L12.65 8.5 L12.98 11.94 L13.3 15.09 L13.63 14.96 L13.95 14.85 L14.27 14.74 L14.6 14.66 L14.92 11.29 L15.25 8.2 L15.57 5.62 L15.9 3.65 L16.22 2.44 L16.55 2.71 L16.87 4.21 L17.19 6.41 L17.52 9.18 L17.84 12.46 L18.17 14.99 L18.49 15.12 L18.82 15.26 L19.14 15.27 L19.46 11.28 L19.79 7.81 L20.11 4.94 L20.44 2.74 L20.76 1.41 L21.09 1.78 L21.41 3.58 L21.74 6.17 L22.06 9.39 L22.38 13.18 L22.71 16.5 L23.03 14.44 L23.36 11.78 L23.68 9.34 L24.01 7.15 L24.33 5.25 L24.66 3.65 L24.98 2.44 L25.3 1.75 L25.63 2.13 L25.95 3.06 L26.28 4.39 L26.6 6.05 L26.93 8.01 L27.25 10.25 L27.58 12.75 L27.9 11.92 L28.22 9.43 L28.55 7.21 L28.87 5.25 L29.2 3.6 L29.52 2.29 L29.85 1.4 L30.17 1.19 L30.49 1.91 L30.82 3.08 L31.14 4.63 L31.47 6.49 L31.79 8.63 L32.12 11.03 L32.44 13.67 L32.77 10.93 L33.09 7.71 L33.41 5 L33.74 2.85 L34.06 1.39 L34.39 1.05 L34.71 2.34 L35.04 4.42 L35.36 7.09 L35.69 10.29 L36.01 13.94 L36.33 16.48 L36.66 16.5 L36.98 16.5 L37.31 13.38 L37.63 10.52 L37.96 8.04 L38.28 5.98 L38.61 4.45 L38.93 3.67 L39.25 4.31 L39.58 5.66 L39.9 7.52 L40.23 9.83 L40.55 12.54 L40.88 15.24 L41.2 15.1 L41.53 14.97 L41.85 13.44 L42.17 10.59 L42.5 8.06 L42.82 5.88 L43.15 4.07 L43.47 2.71 L43.8 1.92 L44.12 2.28 L44.44 3.41 L44.77 5.04 L45.09 7.06 L45.42 9.45 L45.74 12.16 L46.07 14.98 L46.39 12.97 L46.72 10.25 L47.04 7.86 L47.36 5.84 L47.69 4.23 L48.01 3.09 L48.34 2.67 L48.66 3.51 L48.99 4.98 L49.31 6.9 L49.64 9.2 L49.96 11.84 L50.28 14.79 L50.61 16.5 L50.93 13.98 L51.26 10.99 L51.58 8.4 L51.91 6.28 L52.23 4.71 L52.56 4.01 L52.88 4.79 L53.2 6.29 L53.53 8.34 L53.85 10.84 L54.18 13.77 L54.5 15.39 L54.83 15.25 L55.15 15.11 L55.47 14.98 L55.8 11.76 L56.12 8.56 L56.45 5.81 L56.77 3.56 L57.1 1.89 L57.42 1.02 L57.75 1.72 L58.07 3.28 L58.39 5.44 L58.72 8.1 L59.04 11.22 L59.37 14.75 L59.69 14.86 L60.02 14.96 L60.34 11.6 L60.67 8.65 L60.99 6.16 L61.31 4.16 L61.64 2.76 L61.96 2.25 L62.29 3.29 L62.61 5.09 L62.94 7.44 L63.26 10.27 L63.59 13.52 L63.91 16.43 L64.23 16.48 L64.56 16.5 L64.88 14.78 L65.21 11.15 L65.53 7.97 L65.86 5.29 L66.18 3.21 L66.51 1.89 L66.83 2.12 L67.15 3.55 L67.48 5.66 L67.8 8.34 L68.13 11.51 L68.45 15.15 L68.78 13.5 L69.1 10.7 L69.42 8.16 L69.75 5.91 L70.07 3.97 L70.4 2.4 L70.72 1.25 L71.05 0.71 L71.37 1.28 L71.7 2.41 L72.02 3.95 L72.34 5.85 L72.67 8.08 L72.99 10.59 L73.32 13.2 L73.64 10.88 L73.97 8.8 L74.29 6.96 L74.62 5.4 L74.94 4.13 L75.26 3.2 L75.59 2.72 L75.91 3.12 L76.24 4.13 L76.56 5.51 L76.89 7.19 L77.21 9.12 L77.54 11.29 L77.86 13.38 L78.18 10.84 L78.51 8.57 L78.83 6.59 L79.16 4.94 L79.48 3.68 L79.81 2.94 L80.13 3.28 L80.45 4.28 L80.78 5.7 L81.1 7.46 L81.43 9.54 L81.75 11.9 L82.08 14.53 L82.4 15.4 L82.73 15.26 L83.05 11.35 L83.37 7.73 L83.7 4.72 L84.02 2.42 L84.35 1.05 L84.67 1.55 L85 3.31 L85.32 5.87 L85.65 9.08 L85.97 12.88 L86.29 14.54 L86.62 14.59 L86.94 14.66 L87.27 13.1 L87.59 10.01 L87.92 7.29 L88.24 4.95 L88.57 3.05 L88.89 1.65 L89.21 0.9 L89.54 1.48 L89.86 2.92 L90.19 4.9 L90.51 7.32 L90.84 10.13 L91.16 13.28 L91.48 16.36 L91.81 15.21 L92.13 12.51 L92.46 10.07 L92.78 7.92 L93.11 6.07 L93.43 4.59 L93.76 3.55 L94.08 3.33 L94.4 4.08 L94.73 6.49 L95.05 9.54 L95.38 12.57 L95.7 15.48 L96.03 18.17 L96.35 20.02 L96.68 20.77 L97 21.54 L97 28.33 L96.68 28.81 L96.35 29.59 L96.03 32.02 L95.7 34.22 L95.38 36.61 L95.05 39.73 L94.73 43.84 L94.4 43.63 L94.08 47.04 L93.76 44.17 L93.43 45.58 L93.11 43.58 L92.78 42.6 L92.46 38.31 L92.13 36.84 L91.81 34.7 L91.48 32.68 L91.16 35.48 L90.84 39.75 L90.51 42.17 L90.19 45.64 L89.86 44.96 L89.54 46.67 L89.21 49.36 L88.89 48.95 L88.57 45.8 L88.24 43.06 L87.92 41.36 L87.59 40.06 L87.27 35.55 L86.94 34.54 L86.62 34.34 L86.29 35.83 L85.97 37.2 L85.65 41.52 L85.32 42.03 L85 45.86 L84.67 47.98 L84.35 47.34 L84.02 44.93 L83.7 44.27 L83.37 41.73 L83.05 37.05 L82.73 34.7 L82.4 33.94 L82.08 34.54 L81.75 37.24 L81.43 39.88 L81.1 41.64 L80.78 42.48 L80.45 45.99 L80.13 47.55 L79.81 46.13 L79.48 45.12 L79.16 45.71 L78.83 41.84 L78.51 42 L78.18 39.46 L77.86 35.49 L77.54 38.51 L77.21 40.79 L76.89 41.12 L76.56 44.95 L76.24 45.98 L75.91 46.6 L75.59 44.87 L75.26 45.02 L74.94 43.61 L74.62 43.64 L74.29 41.22 L73.97 39.62 L73.64 39.32 L73.32 37.17 L72.99 38.97 L72.67 40.6 L72.34 44.73 L72.02 46.47 L71.7 47.41 L71.37 49.45 L71.05 48.23 L70.72 47.93 L70.4 46.53 L70.07 45.84 L69.75 43.37 L69.42 41.19 L69.1 38.99 L68.78 35.94 L68.45 35.11 L68.13 38.51 L67.8 41.16 L67.48 43.59 L67.15 46.53 L66.83 46.15 L66.51 46.26 L66.18 46.13 L65.86 42.68 L65.53 42.12 L65.21 38.42 L64.88 34.84 L64.56 32.93 L64.23 33.26 L63.91 33.53 L63.59 35.98 L63.26 38.37 L62.94 42.7 L62.61 42.54 L62.29 44.74 L61.96 46.62 L61.64 44.63 L61.31 45.08 L60.99 43.18 L60.67 40.7 L60.34 38.76 L60.02 34.52 L59.69 35.39 L59.37 34.97 L59.04 38.14 L58.72 40.83 L58.39 45.07 L58.07 44.57 L57.75 47.05 L57.42 47.1 L57.1 47.51 L56.77 44.7 L56.45 42.79 L56.12 40.13 L55.8 37.1 L55.47 35.14 L55.15 35.08 L54.83 34.26 L54.5 34.89 L54.18 35.83 L53.85 38.93 L53.53 42.25 L53.2 41.51 L52.88 43.21 L52.56 45.31 L52.23 43.99 L51.91 43.45 L51.58 42.21 L51.26 39.18 L50.93 34.95 L50.61 33.58 L50.28 35.46 L49.96 36.9 L49.64 39.22 L49.31 41.42 L48.99 44.94 L48.66 47.17 L48.34 46.09 L48.01 45.67 L47.69 46.51 L47.36 44.31 L47.04 40.99 L46.72 39.84 L46.39 35.93 L46.07 34.58 L45.74 37.84 L45.42 40.63 L45.09 43.39 L44.77 44.68 L44.44 44.29 L44.12 47.9 L43.8 47.72 L43.47 46.32 L43.15 46.23 L42.82 44.58 L42.5 41.6 L42.17 38.15 L41.85 35.54 L41.53 34.19 L41.2 34.06 L40.88 34.16 L40.55 37.87 L40.23 40.75 L39.9 43 L39.58 43.41 L39.25 46.38 L38.93 46.14 L38.61 43.94 L38.28 42.58 L37.96 40 L37.63 37.81 L37.31 35.89 L36.98 33.19 L36.66 32.79 L36.33 33.51 L36.01 36.18 L35.69 39.84 L35.36 43.2 L35.04 46.36 L34.71 47.88 L34.39 46.93 L34.06 47.02 L33.74 47.25 L33.41 44.31 L33.09 42.35 L32.77 37.76 L32.44 35.64 L32.12 37.88 L31.79 41.23 L31.47 43.85 L31.14 46.12 L30.82 46.14 L30.49 45.42 L30.17 48.02 L29.85 46.32 L29.52 46.9 L29.2 47.09 L28.87 42.45 L28.55 41.12 L28.22 40.76 L27.9 37.07 L27.58 36.45 L27.25 38.22 L26.93 40.18 L26.6 43.14 L26.28 44.67 L25.95 47.79 L25.63 48.24 L25.3 45.92 L24.98 46.17 L24.66 44.97 L24.33 43.18 L24.01 41.13 L23.68 40.32 L23.36 38.49 L23.03 34.33 L22.71 32.98 L22.38 35.6 L22.06 39.11 L21.74 41.57 L21.41 44.03 L21.09 46.7 L20.76 46.37 L20.44 45.33 L20.11 42.87 L19.79 40.3 L19.46 38.47 L19.14 33.72 L18.82 34.19 L18.49 34.31 L18.17 35.08 L17.84 37.79 L17.52 40.89 L17.19 44.04 L16.87 43.48 L16.55 47.03 L16.22 47.08 L15.9 45.55 L15.57 44.19 L15.25 42.35 L14.92 38.3 L14.6 34.71 L14.27 34.71 L13.95 33.94 L13.63 34.25 L13.3 34.65 L12.98 37.51 L12.65 40.14 L12.33 42.74 L12 44.52 L11.68 45.6 L11.35 48.08 L11.03 45.93 L10.71 41.74 L10.38 38.81 L10.06 34.95 L9.73 33.73 L9.41 33.62 L9.08 33.69 L8.76 35.76 L8.43 38.62 L8.11 40.28 L7.79 44.85 L7.46 45.1 L7.14 45.71 L6.81 45.17 L6.49 46.25 L6.16 42.23 L5.84 40.34 L5.52 37.99 L5.19 35.66 L4.87 33.6 L4.54 37.47 L4.22 39.38 L3.89 41.3 L3.57 44.84 L3.24 47.07 L2.92 47.06 L2.6 47.79 L2.27 43.71 L1.95 42.88 L1.62 39.43 L1.3 37.46 L0.97 34.33 L0.65 31.24 L0.32 29.33 L0 28.47Z" fill="#7d97f2"/><g fill="#1a38b8" opacity=".9"><rect x="48" y="-2" width="1" height="54" opacity="1"/><path d="M45.3 -5h6.4l-3.2 4.6z M45.3 55h6.4l-3.2 -4.6z"/></g></svg></div>
<div class="cl" style="left:769.4px;top:241.6px;height:94.9px;background:#0227b8"><span class="n" style="color:#e4eaff">Drums Biza</span><svg style="left:100.4px;top:4.6px" width="13" height="15"><path d="M0.3 0.3 L12.2 7 L0.3 13.8Z" fill="rgba(255,255,255,.56)"/></svg><svg style="left:10.3px;top:26.5px" width="97" height="50" viewBox="0 0 97 50"><path d="M0 21.45 L0.32 20.54 L0.65 18.45 L0.97 15.8 L1.3 12.92 L1.62 9.9 L1.95 6.87 L2.27 3.97 L2.6 2.03 L2.92 2.57 L3.24 3.75 L3.57 5.39 L3.89 7.39 L4.22 9.73 L4.54 12.37 L4.87 15.27 L5.19 13.82 L5.52 10.68 L5.84 7.93 L6.16 5.63 L6.49 3.81 L6.81 2.61 L7.14 2.48 L7.46 3.67 L7.79 5.53 L8.11 7.89 L8.43 10.69 L8.76 13.89 L9.08 16.5 L9.41 16.47 L9.73 16.43 L10.06 14.24 L10.38 10.41 L10.71 7.14 L11.03 4.51 L11.35 2.66 L11.68 2.22 L12 3.5 L12.33 5.66 L12.65 8.5 L12.98 11.94 L13.3 15.09 L13.63 14.96 L13.95 14.85 L14.27 14.74 L14.6 14.66 L14.92 11.29 L15.25 8.2 L15.57 5.62 L15.9 3.65 L16.22 2.44 L16.55 2.71 L16.87 4.21 L17.19 6.41 L17.52 9.18 L17.84 12.46 L18.17 14.99 L18.49 15.12 L18.82 15.26 L19.14 15.27 L19.46 11.28 L19.79 7.81 L20.11 4.94 L20.44 2.74 L20.76 1.41 L21.09 1.78 L21.41 3.58 L21.74 6.17 L22.06 9.39 L22.38 13.18 L22.71 16.5 L23.03 14.44 L23.36 11.78 L23.68 9.34 L24.01 7.15 L24.33 5.25 L24.66 3.65 L24.98 2.44 L25.3 1.75 L25.63 2.13 L25.95 3.06 L26.28 4.39 L26.6 6.05 L26.93 8.01 L27.25 10.25 L27.58 12.75 L27.9 11.92 L28.22 9.43 L28.55 7.21 L28.87 5.25 L29.2 3.6 L29.52 2.29 L29.85 1.4 L30.17 1.19 L30.49 1.91 L30.82 3.08 L31.14 4.63 L31.47 6.49 L31.79 8.63 L32.12 11.03 L32.44 13.67 L32.77 10.93 L33.09 7.71 L33.41 5 L33.74 2.85 L34.06 1.39 L34.39 1.05 L34.71 2.34 L35.04 4.42 L35.36 7.09 L35.69 10.29 L36.01 13.94 L36.33 16.48 L36.66 16.5 L36.98 16.5 L37.31 13.38 L37.63 10.52 L37.96 8.04 L38.28 5.98 L38.61 4.45 L38.93 3.67 L39.25 4.31 L39.58 5.66 L39.9 7.52 L40.23 9.83 L40.55 12.54 L40.88 15.24 L41.2 15.1 L41.53 14.97 L41.85 13.44 L42.17 10.59 L42.5 8.06 L42.82 5.88 L43.15 4.07 L43.47 2.71 L43.8 1.92 L44.12 2.28 L44.44 3.41 L44.77 5.04 L45.09 7.06 L45.42 9.45 L45.74 12.16 L46.07 14.98 L46.39 12.97 L46.72 10.25 L47.04 7.86 L47.36 5.84 L47.69 4.23 L48.01 3.09 L48.34 2.67 L48.66 3.51 L48.99 4.98 L49.31 6.9 L49.64 9.2 L49.96 11.84 L50.28 14.79 L50.61 16.5 L50.93 13.98 L51.26 10.99 L51.58 8.4 L51.91 6.28 L52.23 4.71 L52.56 4.01 L52.88 4.79 L53.2 6.29 L53.53 8.34 L53.85 10.84 L54.18 13.77 L54.5 15.39 L54.83 15.25 L55.15 15.11 L55.47 14.98 L55.8 11.76 L56.12 8.56 L56.45 5.81 L56.77 3.56 L57.1 1.89 L57.42 1.02 L57.75 1.72 L58.07 3.28 L58.39 5.44 L58.72 8.1 L59.04 11.22 L59.37 14.75 L59.69 14.86 L60.02 14.96 L60.34 11.6 L60.67 8.65 L60.99 6.16 L61.31 4.16 L61.64 2.76 L61.96 2.25 L62.29 3.29 L62.61 5.09 L62.94 7.44 L63.26 10.27 L63.59 13.52 L63.91 16.43 L64.23 16.48 L64.56 16.5 L64.88 14.78 L65.21 11.15 L65.53 7.97 L65.86 5.29 L66.18 3.21 L66.51 1.89 L66.83 2.12 L67.15 3.55 L67.48 5.66 L67.8 8.34 L68.13 11.51 L68.45 15.15 L68.78 13.5 L69.1 10.7 L69.42 8.16 L69.75 5.91 L70.07 3.97 L70.4 2.4 L70.72 1.25 L71.05 0.71 L71.37 1.28 L71.7 2.41 L72.02 3.95 L72.34 5.85 L72.67 8.08 L72.99 10.59 L73.32 13.2 L73.64 10.88 L73.97 8.8 L74.29 6.96 L74.62 5.4 L74.94 4.13 L75.26 3.2 L75.59 2.72 L75.91 3.12 L76.24 4.13 L76.56 5.51 L76.89 7.19 L77.21 9.12 L77.54 11.29 L77.86 13.38 L78.18 10.84 L78.51 8.57 L78.83 6.59 L79.16 4.94 L79.48 3.68 L79.81 2.94 L80.13 3.28 L80.45 4.28 L80.78 5.7 L81.1 7.46 L81.43 9.54 L81.75 11.9 L82.08 14.53 L82.4 15.4 L82.73 15.26 L83.05 11.35 L83.37 7.73 L83.7 4.72 L84.02 2.42 L84.35 1.05 L84.67 1.55 L85 3.31 L85.32 5.87 L85.65 9.08 L85.97 12.88 L86.29 14.54 L86.62 14.59 L86.94 14.66 L87.27 13.1 L87.59 10.01 L87.92 7.29 L88.24 4.95 L88.57 3.05 L88.89 1.65 L89.21 0.9 L89.54 1.48 L89.86 2.92 L90.19 4.9 L90.51 7.32 L90.84 10.13 L91.16 13.28 L91.48 16.36 L91.81 15.21 L92.13 12.51 L92.46 10.07 L92.78 7.92 L93.11 6.07 L93.43 4.59 L93.76 3.55 L94.08 3.33 L94.4 4.08 L94.73 6.49 L95.05 9.54 L95.38 12.57 L95.7 15.48 L96.03 18.17 L96.35 20.02 L96.68 20.77 L97 21.54 L97 28.33 L96.68 28.81 L96.35 29.59 L96.03 32.02 L95.7 34.22 L95.38 36.61 L95.05 39.73 L94.73 43.84 L94.4 43.63 L94.08 47.04 L93.76 44.17 L93.43 45.58 L93.11 43.58 L92.78 42.6 L92.46 38.31 L92.13 36.84 L91.81 34.7 L91.48 32.68 L91.16 35.48 L90.84 39.75 L90.51 42.17 L90.19 45.64 L89.86 44.96 L89.54 46.67 L89.21 49.36 L88.89 48.95 L88.57 45.8 L88.24 43.06 L87.92 41.36 L87.59 40.06 L87.27 35.55 L86.94 34.54 L86.62 34.34 L86.29 35.83 L85.97 37.2 L85.65 41.52 L85.32 42.03 L85 45.86 L84.67 47.98 L84.35 47.34 L84.02 44.93 L83.7 44.27 L83.37 41.73 L83.05 37.05 L82.73 34.7 L82.4 33.94 L82.08 34.54 L81.75 37.24 L81.43 39.88 L81.1 41.64 L80.78 42.48 L80.45 45.99 L80.13 47.55 L79.81 46.13 L79.48 45.12 L79.16 45.71 L78.83 41.84 L78.51 42 L78.18 39.46 L77.86 35.49 L77.54 38.51 L77.21 40.79 L76.89 41.12 L76.56 44.95 L76.24 45.98 L75.91 46.6 L75.59 44.87 L75.26 45.02 L74.94 43.61 L74.62 43.64 L74.29 41.22 L73.97 39.62 L73.64 39.32 L73.32 37.17 L72.99 38.97 L72.67 40.6 L72.34 44.73 L72.02 46.47 L71.7 47.41 L71.37 49.45 L71.05 48.23 L70.72 47.93 L70.4 46.53 L70.07 45.84 L69.75 43.37 L69.42 41.19 L69.1 38.99 L68.78 35.94 L68.45 35.11 L68.13 38.51 L67.8 41.16 L67.48 43.59 L67.15 46.53 L66.83 46.15 L66.51 46.26 L66.18 46.13 L65.86 42.68 L65.53 42.12 L65.21 38.42 L64.88 34.84 L64.56 32.93 L64.23 33.26 L63.91 33.53 L63.59 35.98 L63.26 38.37 L62.94 42.7 L62.61 42.54 L62.29 44.74 L61.96 46.62 L61.64 44.63 L61.31 45.08 L60.99 43.18 L60.67 40.7 L60.34 38.76 L60.02 34.52 L59.69 35.39 L59.37 34.97 L59.04 38.14 L58.72 40.83 L58.39 45.07 L58.07 44.57 L57.75 47.05 L57.42 47.1 L57.1 47.51 L56.77 44.7 L56.45 42.79 L56.12 40.13 L55.8 37.1 L55.47 35.14 L55.15 35.08 L54.83 34.26 L54.5 34.89 L54.18 35.83 L53.85 38.93 L53.53 42.25 L53.2 41.51 L52.88 43.21 L52.56 45.31 L52.23 43.99 L51.91 43.45 L51.58 42.21 L51.26 39.18 L50.93 34.95 L50.61 33.58 L50.28 35.46 L49.96 36.9 L49.64 39.22 L49.31 41.42 L48.99 44.94 L48.66 47.17 L48.34 46.09 L48.01 45.67 L47.69 46.51 L47.36 44.31 L47.04 40.99 L46.72 39.84 L46.39 35.93 L46.07 34.58 L45.74 37.84 L45.42 40.63 L45.09 43.39 L44.77 44.68 L44.44 44.29 L44.12 47.9 L43.8 47.72 L43.47 46.32 L43.15 46.23 L42.82 44.58 L42.5 41.6 L42.17 38.15 L41.85 35.54 L41.53 34.19 L41.2 34.06 L40.88 34.16 L40.55 37.87 L40.23 40.75 L39.9 43 L39.58 43.41 L39.25 46.38 L38.93 46.14 L38.61 43.94 L38.28 42.58 L37.96 40 L37.63 37.81 L37.31 35.89 L36.98 33.19 L36.66 32.79 L36.33 33.51 L36.01 36.18 L35.69 39.84 L35.36 43.2 L35.04 46.36 L34.71 47.88 L34.39 46.93 L34.06 47.02 L33.74 47.25 L33.41 44.31 L33.09 42.35 L32.77 37.76 L32.44 35.64 L32.12 37.88 L31.79 41.23 L31.47 43.85 L31.14 46.12 L30.82 46.14 L30.49 45.42 L30.17 48.02 L29.85 46.32 L29.52 46.9 L29.2 47.09 L28.87 42.45 L28.55 41.12 L28.22 40.76 L27.9 37.07 L27.58 36.45 L27.25 38.22 L26.93 40.18 L26.6 43.14 L26.28 44.67 L25.95 47.79 L25.63 48.24 L25.3 45.92 L24.98 46.17 L24.66 44.97 L24.33 43.18 L24.01 41.13 L23.68 40.32 L23.36 38.49 L23.03 34.33 L22.71 32.98 L22.38 35.6 L22.06 39.11 L21.74 41.57 L21.41 44.03 L21.09 46.7 L20.76 46.37 L20.44 45.33 L20.11 42.87 L19.79 40.3 L19.46 38.47 L19.14 33.72 L18.82 34.19 L18.49 34.31 L18.17 35.08 L17.84 37.79 L17.52 40.89 L17.19 44.04 L16.87 43.48 L16.55 47.03 L16.22 47.08 L15.9 45.55 L15.57 44.19 L15.25 42.35 L14.92 38.3 L14.6 34.71 L14.27 34.71 L13.95 33.94 L13.63 34.25 L13.3 34.65 L12.98 37.51 L12.65 40.14 L12.33 42.74 L12 44.52 L11.68 45.6 L11.35 48.08 L11.03 45.93 L10.71 41.74 L10.38 38.81 L10.06 34.95 L9.73 33.73 L9.41 33.62 L9.08 33.69 L8.76 35.76 L8.43 38.62 L8.11 40.28 L7.79 44.85 L7.46 45.1 L7.14 45.71 L6.81 45.17 L6.49 46.25 L6.16 42.23 L5.84 40.34 L5.52 37.99 L5.19 35.66 L4.87 33.6 L4.54 37.47 L4.22 39.38 L3.89 41.3 L3.57 44.84 L3.24 47.07 L2.92 47.06 L2.6 47.79 L2.27 43.71 L1.95 42.88 L1.62 39.43 L1.3 37.46 L0.97 34.33 L0.65 31.24 L0.32 29.33 L0 28.47Z" fill="#7d97f2"/><g fill="#1a38b8" opacity=".9"><rect x="48" y="-2" width="1" height="54" opacity="1"/><path d="M45.3 -5h6.4l-3.2 4.6z M45.3 55h6.4l-3.2 -4.6z"/></g></svg></div>
<div class="em" style="left:152.3px;top:343.55px"></div>
<div class="em" style="left:271.75px;top:343.55px"></div>
<div class="em" style="left:391.2px;top:343.55px"></div>
<div class="cl" style="left:411.05px;top:338.35px;height:94.9px;background:#287c78"><span class="n" style="color:#e2fbf6">Fx Biza</span><svg style="left:100.4px;top:4.6px" width="13" height="15"><path d="M0.3 0.3 L12.2 7 L0.3 13.8Z" fill="rgba(255,255,255,.56)"/></svg><svg style="left:10.3px;top:26.5px" width="97" height="50" viewBox="0 0 97 50"><path d="M0 24.7 L0.5 11 L1 4.5 L1.5 4.5 L2 5.11 L2.5 7.72 L3 8.29 L3.5 6.88 L4 7.45 L4.5 9.93 L5 10.46 L5.5 9.11 L6 9.65 L6.5 11.97 L7 12.45 L7.5 11.19 L8 11.68 L8.5 13.84 L9 14.28 L9.5 13.11 L10 13.57 L10.5 15.54 L11 15.94 L11.5 14.89 L12 15.31 L12.5 17.08 L13 17.44 L13.5 16.51 L14 16.89 L14.5 18.47 L15 18.8 L15.5 17.99 L16 18.33 L16.5 19.71 L17 20 L17.5 19.32 L18 19.63 L18.5 20.8 L19 21.06 L19.5 20.5 L20 20.77 L20.5 21.76 L21 21.97 L21.5 21.54 L22 21.78 L22.5 22.58 L23 22.76 L23.5 22.44 L24 22.64 L24.5 23.26 L25 23.42 L25.5 23.2 L26 23.36 L26.5 23.83 L27 23.95 L27.5 23.82 L28 23.95 L28.5 24.28 L29 24.37 L29.5 24.3 L30 24.4 L30.5 24.61 L31 24.67 L31.5 24.66 L32 24.7 L32.5 24.7 L33 24.7 L33.5 24.7 L34 24.7 L34.5 24.7 L35 24.7 L35.5 24.7 L36 24.7 L36.5 24.7 L37 24.7 L37.5 24.7 L38 24.7 L38.5 24.7 L39 24.7 L39.5 24.7 L40 24.7 L40.5 24.7 L41 24.7 L41.5 24.7 L42 24.7 L42.5 24.7 L43 24.7 L43.5 24.7 L44 24.7 L44.5 24.7 L45 24.7 L45.5 24.7 L46 24.7 L46.5 24.7 L47 24.7 L47.5 24.7 L48 24.7 L48.5 24.7 L49 24.7 L49.5 24.7 L50 24.7 L50.5 24.7 L51 24.7 L51.5 24.7 L52 24.7 L52.5 24.7 L53 24.7 L53.5 24.7 L54 24.7 L54.5 24.7 L55 24.7 L55.5 24.7 L56 24.7 L56.5 24.7 L57 24.7 L57.5 24.7 L58 24.7 L58.5 24.7 L59 24.7 L59.5 24.7 L60 24.7 L60.5 24.7 L61 24.7 L61.5 24.7 L62 24.7 L62.5 24.7 L63 24.7 L63.5 24.7 L64 24.7 L64.5 24.7 L65 24.7 L65.5 24.7 L66 24.7 L66.5 24.7 L67 24.7 L67.5 24.7 L68 24.7 L68.5 24.7 L69 24.7 L69.5 24.7 L70 24.7 L70.5 24.7 L71 24.7 L71.5 24.7 L72 24.7 L72.5 24.7 L73 24.7 L73.5 24.7 L74 24.7 L74.5 24.7 L75 24.7 L75.5 24.7 L76 24.7 L76.5 24.7 L77 24.7 L77.5 24.7 L78 24.7 L78.5 24.7 L79 24.7 L79.5 24.7 L80 24.7 L80.5 24.7 L81 24.7 L81.5 24.7 L82 24.7 L82.5 24.7 L83 24.7 L83.5 24.7 L84 24.7 L84.5 24.7 L85 24.7 L85.5 24.7 L86 24.7 L86.5 24.7 L87 24.7 L87.5 24.7 L88 24.7 L88.5 24.7 L89 24.7 L89.5 24.7 L90 24.7 L90.5 24.7 L91 24.7 L91.5 24.7 L92 24.7 L92.5 24.7 L93 24.7 L93.5 24.7 L94 24.7 L94.5 24.7 L95 24.7 L95.5 24.7 L96 24.7 L96.5 24.7 L97 24.7 L97 25.3 L96.5 25.3 L96 25.3 L95.5 25.3 L95 25.3 L94.5 25.3 L94 25.3 L93.5 25.3 L93 25.3 L92.5 25.3 L92 25.3 L91.5 25.3 L91 25.3 L90.5 25.3 L90 25.3 L89.5 25.3 L89 25.3 L88.5 25.3 L88 25.3 L87.5 25.3 L87 25.3 L86.5 25.3 L86 25.3 L85.5 25.3 L85 25.3 L84.5 25.3 L84 25.3 L83.5 25.3 L83 25.3 L82.5 25.3 L82 25.3 L81.5 25.3 L81 25.3 L80.5 25.3 L80 25.3 L79.5 25.3 L79 25.3 L78.5 25.3 L78 25.3 L77.5 25.3 L77 25.3 L76.5 25.3 L76 25.3 L75.5 25.3 L75 25.3 L74.5 25.3 L74 25.3 L73.5 25.3 L73 25.3 L72.5 25.3 L72 25.3 L71.5 25.3 L71 25.3 L70.5 25.3 L70 25.3 L69.5 25.3 L69 25.3 L68.5 25.3 L68 25.3 L67.5 25.3 L67 25.3 L66.5 25.3 L66 25.3 L65.5 25.3 L65 25.3 L64.5 25.3 L64 25.3 L63.5 25.3 L63 25.3 L62.5 25.3 L62 25.3 L61.5 25.3 L61 25.3 L60.5 25.3 L60 25.3 L59.5 25.3 L59 25.3 L58.5 25.3 L58 25.3 L57.5 25.3 L57 25.3 L56.5 25.3 L56 25.3 L55.5 25.3 L55 25.3 L54.5 25.3 L54 25.3 L53.5 25.3 L53 25.3 L52.5 25.3 L52 25.3 L51.5 25.3 L51 25.3 L50.5 25.3 L50 25.3 L49.5 25.3 L49 25.3 L48.5 25.3 L48 25.3 L47.5 25.3 L47 25.3 L46.5 25.3 L46 25.3 L45.5 25.3 L45 25.3 L44.5 25.3 L44 25.3 L43.5 25.3 L43 25.3 L42.5 25.3 L42 25.3 L41.5 25.3 L41 25.3 L40.5 25.3 L40 25.3 L39.5 25.3 L39 25.3 L38.5 25.3 L38 25.3 L37.5 25.3 L37 25.3 L36.5 25.3 L36 25.3 L35.5 25.3 L35 25.3 L34.5 25.3 L34 25.3 L33.5 25.3 L33 25.3 L32.5 25.3 L32 25.3 L31.5 25.34 L31 25.33 L30.5 25.39 L30 25.6 L29.5 25.7 L29 25.63 L28.5 25.72 L28 26.05 L27.5 26.18 L27 26.05 L26.5 26.17 L26 26.64 L25.5 26.8 L25 26.58 L24.5 26.74 L24 27.36 L23.5 27.56 L23 27.24 L22.5 27.42 L22 28.22 L21.5 28.46 L21 28.03 L20.5 28.24 L20 29.23 L19.5 29.5 L19 28.94 L18.5 29.2 L18 30.37 L17.5 30.68 L17 30 L16.5 30.29 L16 31.67 L15.5 32.01 L15 31.2 L14.5 31.53 L14 33.11 L13.5 33.49 L13 32.56 L12.5 32.92 L12 34.69 L11.5 35.11 L11 34.06 L10.5 34.46 L10 36.43 L9.5 36.89 L9 35.72 L8.5 36.16 L8 38.32 L7.5 38.81 L7 37.55 L6.5 38.03 L6 40.35 L5.5 40.89 L5 39.54 L4.5 40.07 L4 42.55 L3.5 43.12 L3 41.71 L2.5 42.28 L2 44.89 L1.5 45.5 L1 45.5 L0.5 39 L0 25.3Z" fill="#1b5c5a"/></svg></div>
<div class="cl" style="left:530.5px;top:338.35px;height:94.9px;background:#2b8782;box-shadow:0 0 0 1.2px rgba(10,12,14,.5), inset 0 0 0 1.3px rgba(255,255,255,.28)"><span class="n" style="color:#e2fbf6">Fx Biza</span><svg style="left:100.4px;top:4.6px" width="13" height="15"><path d="M0.3 0.3 L12.2 7 L0.3 13.8Z" fill="#fff"/></svg><svg style="left:10.3px;top:26.5px" width="97" height="50" viewBox="0 0 97 50"><path d="M0 24.7 L0.5 11 L1 4.5 L1.5 4.5 L2 5.11 L2.5 7.72 L3 8.29 L3.5 6.88 L4 7.45 L4.5 9.93 L5 10.46 L5.5 9.11 L6 9.65 L6.5 11.97 L7 12.45 L7.5 11.19 L8 11.68 L8.5 13.84 L9 14.28 L9.5 13.11 L10 13.57 L10.5 15.54 L11 15.94 L11.5 14.89 L12 15.31 L12.5 17.08 L13 17.44 L13.5 16.51 L14 16.89 L14.5 18.47 L15 18.8 L15.5 17.99 L16 18.33 L16.5 19.71 L17 20 L17.5 19.32 L18 19.63 L18.5 20.8 L19 21.06 L19.5 20.5 L20 20.77 L20.5 21.76 L21 21.97 L21.5 21.54 L22 21.78 L22.5 22.58 L23 22.76 L23.5 22.44 L24 22.64 L24.5 23.26 L25 23.42 L25.5 23.2 L26 23.36 L26.5 23.83 L27 23.95 L27.5 23.82 L28 23.95 L28.5 24.28 L29 24.37 L29.5 24.3 L30 24.4 L30.5 24.61 L31 24.67 L31.5 24.66 L32 24.7 L32.5 24.7 L33 24.7 L33.5 24.7 L34 24.7 L34.5 24.7 L35 24.7 L35.5 24.7 L36 24.7 L36.5 24.7 L37 24.7 L37.5 24.7 L38 24.7 L38.5 24.7 L39 24.7 L39.5 24.7 L40 24.7 L40.5 24.7 L41 24.7 L41.5 24.7 L42 24.7 L42.5 24.7 L43 24.7 L43.5 24.7 L44 24.7 L44.5 24.7 L45 24.7 L45.5 24.7 L46 24.7 L46.5 24.7 L47 24.7 L47.5 24.7 L48 24.7 L48.5 24.7 L49 24.7 L49.5 24.7 L50 24.7 L50.5 24.7 L51 24.7 L51.5 24.7 L52 24.7 L52.5 24.7 L53 24.7 L53.5 24.7 L54 24.7 L54.5 24.7 L55 24.7 L55.5 24.7 L56 24.7 L56.5 24.7 L57 24.7 L57.5 24.7 L58 24.7 L58.5 24.7 L59 24.7 L59.5 24.7 L60 24.7 L60.5 24.7 L61 24.7 L61.5 24.7 L62 24.7 L62.5 24.7 L63 24.7 L63.5 24.7 L64 24.7 L64.5 24.7 L65 24.7 L65.5 24.7 L66 24.7 L66.5 24.7 L67 24.7 L67.5 24.7 L68 24.7 L68.5 24.7 L69 24.7 L69.5 24.7 L70 24.7 L70.5 24.7 L71 24.7 L71.5 24.7 L72 24.7 L72.5 24.7 L73 24.7 L73.5 24.7 L74 24.7 L74.5 24.7 L75 24.7 L75.5 24.7 L76 24.7 L76.5 24.7 L77 24.7 L77.5 24.7 L78 24.7 L78.5 24.7 L79 24.7 L79.5 24.7 L80 24.7 L80.5 24.7 L81 24.7 L81.5 24.7 L82 24.7 L82.5 24.7 L83 24.7 L83.5 24.7 L84 24.7 L84.5 24.7 L85 24.7 L85.5 24.7 L86 24.7 L86.5 24.7 L87 24.7 L87.5 24.7 L88 24.7 L88.5 24.7 L89 24.7 L89.5 24.7 L90 24.7 L90.5 24.7 L91 24.7 L91.5 24.7 L92 24.7 L92.5 24.7 L93 24.7 L93.5 24.7 L94 24.7 L94.5 24.7 L95 24.7 L95.5 24.7 L96 24.7 L96.5 24.7 L97 24.7 L97 25.3 L96.5 25.3 L96 25.3 L95.5 25.3 L95 25.3 L94.5 25.3 L94 25.3 L93.5 25.3 L93 25.3 L92.5 25.3 L92 25.3 L91.5 25.3 L91 25.3 L90.5 25.3 L90 25.3 L89.5 25.3 L89 25.3 L88.5 25.3 L88 25.3 L87.5 25.3 L87 25.3 L86.5 25.3 L86 25.3 L85.5 25.3 L85 25.3 L84.5 25.3 L84 25.3 L83.5 25.3 L83 25.3 L82.5 25.3 L82 25.3 L81.5 25.3 L81 25.3 L80.5 25.3 L80 25.3 L79.5 25.3 L79 25.3 L78.5 25.3 L78 25.3 L77.5 25.3 L77 25.3 L76.5 25.3 L76 25.3 L75.5 25.3 L75 25.3 L74.5 25.3 L74 25.3 L73.5 25.3 L73 25.3 L72.5 25.3 L72 25.3 L71.5 25.3 L71 25.3 L70.5 25.3 L70 25.3 L69.5 25.3 L69 25.3 L68.5 25.3 L68 25.3 L67.5 25.3 L67 25.3 L66.5 25.3 L66 25.3 L65.5 25.3 L65 25.3 L64.5 25.3 L64 25.3 L63.5 25.3 L63 25.3 L62.5 25.3 L62 25.3 L61.5 25.3 L61 25.3 L60.5 25.3 L60 25.3 L59.5 25.3 L59 25.3 L58.5 25.3 L58 25.3 L57.5 25.3 L57 25.3 L56.5 25.3 L56 25.3 L55.5 25.3 L55 25.3 L54.5 25.3 L54 25.3 L53.5 25.3 L53 25.3 L52.5 25.3 L52 25.3 L51.5 25.3 L51 25.3 L50.5 25.3 L50 25.3 L49.5 25.3 L49 25.3 L48.5 25.3 L48 25.3 L47.5 25.3 L47 25.3 L46.5 25.3 L46 25.3 L45.5 25.3 L45 25.3 L44.5 25.3 L44 25.3 L43.5 25.3 L43 25.3 L42.5 25.3 L42 25.3 L41.5 25.3 L41 25.3 L40.5 25.3 L40 25.3 L39.5 25.3 L39 25.3 L38.5 25.3 L38 25.3 L37.5 25.3 L37 25.3 L36.5 25.3 L36 25.3 L35.5 25.3 L35 25.3 L34.5 25.3 L34 25.3 L33.5 25.3 L33 25.3 L32.5 25.3 L32 25.3 L31.5 25.34 L31 25.33 L30.5 25.39 L30 25.6 L29.5 25.7 L29 25.63 L28.5 25.72 L28 26.05 L27.5 26.18 L27 26.05 L26.5 26.17 L26 26.64 L25.5 26.8 L25 26.58 L24.5 26.74 L24 27.36 L23.5 27.56 L23 27.24 L22.5 27.42 L22 28.22 L21.5 28.46 L21 28.03 L20.5 28.24 L20 29.23 L19.5 29.5 L19 28.94 L18.5 29.2 L18 30.37 L17.5 30.68 L17 30 L16.5 30.29 L16 31.67 L15.5 32.01 L15 31.2 L14.5 31.53 L14 33.11 L13.5 33.49 L13 32.56 L12.5 32.92 L12 34.69 L11.5 35.11 L11 34.06 L10.5 34.46 L10 36.43 L9.5 36.89 L9 35.72 L8.5 36.16 L8 38.32 L7.5 38.81 L7 37.55 L6.5 38.03 L6 40.35 L5.5 40.89 L5 39.54 L4.5 40.07 L4 42.55 L3.5 43.12 L3 41.71 L2.5 42.28 L2 44.89 L1.5 45.5 L1 45.5 L0.5 39 L0 25.3Z" fill="#1b5c5a"/></svg><div class="pb"></div></div>
<div class="cl" style="left:649.95px;top:338.35px;height:94.9px;background:#287c78"><span class="n" style="color:#e2fbf6">Fx Biza</span><svg style="left:100.4px;top:4.6px" width="13" height="15"><path d="M0.3 0.3 L12.2 7 L0.3 13.8Z" fill="rgba(255,255,255,.56)"/></svg><svg style="left:10.3px;top:26.5px" width="97" height="50" viewBox="0 0 97 50"><path d="M0 24.7 L0.5 11 L1 4.5 L1.5 4.5 L2 5.11 L2.5 7.72 L3 8.29 L3.5 6.88 L4 7.45 L4.5 9.93 L5 10.46 L5.5 9.11 L6 9.65 L6.5 11.97 L7 12.45 L7.5 11.19 L8 11.68 L8.5 13.84 L9 14.28 L9.5 13.11 L10 13.57 L10.5 15.54 L11 15.94 L11.5 14.89 L12 15.31 L12.5 17.08 L13 17.44 L13.5 16.51 L14 16.89 L14.5 18.47 L15 18.8 L15.5 17.99 L16 18.33 L16.5 19.71 L17 20 L17.5 19.32 L18 19.63 L18.5 20.8 L19 21.06 L19.5 20.5 L20 20.77 L20.5 21.76 L21 21.97 L21.5 21.54 L22 21.78 L22.5 22.58 L23 22.76 L23.5 22.44 L24 22.64 L24.5 23.26 L25 23.42 L25.5 23.2 L26 23.36 L26.5 23.83 L27 23.95 L27.5 23.82 L28 23.95 L28.5 24.28 L29 24.37 L29.5 24.3 L30 24.4 L30.5 24.61 L31 24.67 L31.5 24.66 L32 24.7 L32.5 24.7 L33 24.7 L33.5 24.7 L34 24.7 L34.5 24.7 L35 24.7 L35.5 24.7 L36 24.7 L36.5 24.7 L37 24.7 L37.5 24.7 L38 24.7 L38.5 24.7 L39 24.7 L39.5 24.7 L40 24.7 L40.5 24.7 L41 24.7 L41.5 24.7 L42 24.7 L42.5 24.7 L43 24.7 L43.5 24.7 L44 24.7 L44.5 24.7 L45 24.7 L45.5 24.7 L46 24.7 L46.5 24.7 L47 24.7 L47.5 24.7 L48 24.7 L48.5 24.7 L49 24.7 L49.5 24.7 L50 24.7 L50.5 24.7 L51 24.7 L51.5 24.7 L52 24.7 L52.5 24.7 L53 24.7 L53.5 24.7 L54 24.7 L54.5 24.7 L55 24.7 L55.5 24.7 L56 24.7 L56.5 24.7 L57 24.7 L57.5 24.7 L58 24.7 L58.5 24.7 L59 24.7 L59.5 24.7 L60 24.7 L60.5 24.7 L61 24.7 L61.5 24.7 L62 24.7 L62.5 24.7 L63 24.7 L63.5 24.7 L64 24.7 L64.5 24.7 L65 24.7 L65.5 24.7 L66 24.7 L66.5 24.7 L67 24.7 L67.5 24.7 L68 24.7 L68.5 24.7 L69 24.7 L69.5 24.7 L70 24.7 L70.5 24.7 L71 24.7 L71.5 24.7 L72 24.7 L72.5 24.7 L73 24.7 L73.5 24.7 L74 24.7 L74.5 24.7 L75 24.7 L75.5 24.7 L76 24.7 L76.5 24.7 L77 24.7 L77.5 24.7 L78 24.7 L78.5 24.7 L79 24.7 L79.5 24.7 L80 24.7 L80.5 24.7 L81 24.7 L81.5 24.7 L82 24.7 L82.5 24.7 L83 24.7 L83.5 24.7 L84 24.7 L84.5 24.7 L85 24.7 L85.5 24.7 L86 24.7 L86.5 24.7 L87 24.7 L87.5 24.7 L88 24.7 L88.5 24.7 L89 24.7 L89.5 24.7 L90 24.7 L90.5 24.7 L91 24.7 L91.5 24.7 L92 24.7 L92.5 24.7 L93 24.7 L93.5 24.7 L94 24.7 L94.5 24.7 L95 24.7 L95.5 24.7 L96 24.7 L96.5 24.7 L97 24.7 L97 25.3 L96.5 25.3 L96 25.3 L95.5 25.3 L95 25.3 L94.5 25.3 L94 25.3 L93.5 25.3 L93 25.3 L92.5 25.3 L92 25.3 L91.5 25.3 L91 25.3 L90.5 25.3 L90 25.3 L89.5 25.3 L89 25.3 L88.5 25.3 L88 25.3 L87.5 25.3 L87 25.3 L86.5 25.3 L86 25.3 L85.5 25.3 L85 25.3 L84.5 25.3 L84 25.3 L83.5 25.3 L83 25.3 L82.5 25.3 L82 25.3 L81.5 25.3 L81 25.3 L80.5 25.3 L80 25.3 L79.5 25.3 L79 25.3 L78.5 25.3 L78 25.3 L77.5 25.3 L77 25.3 L76.5 25.3 L76 25.3 L75.5 25.3 L75 25.3 L74.5 25.3 L74 25.3 L73.5 25.3 L73 25.3 L72.5 25.3 L72 25.3 L71.5 25.3 L71 25.3 L70.5 25.3 L70 25.3 L69.5 25.3 L69 25.3 L68.5 25.3 L68 25.3 L67.5 25.3 L67 25.3 L66.5 25.3 L66 25.3 L65.5 25.3 L65 25.3 L64.5 25.3 L64 25.3 L63.5 25.3 L63 25.3 L62.5 25.3 L62 25.3 L61.5 25.3 L61 25.3 L60.5 25.3 L60 25.3 L59.5 25.3 L59 25.3 L58.5 25.3 L58 25.3 L57.5 25.3 L57 25.3 L56.5 25.3 L56 25.3 L55.5 25.3 L55 25.3 L54.5 25.3 L54 25.3 L53.5 25.3 L53 25.3 L52.5 25.3 L52 25.3 L51.5 25.3 L51 25.3 L50.5 25.3 L50 25.3 L49.5 25.3 L49 25.3 L48.5 25.3 L48 25.3 L47.5 25.3 L47 25.3 L46.5 25.3 L46 25.3 L45.5 25.3 L45 25.3 L44.5 25.3 L44 25.3 L43.5 25.3 L43 25.3 L42.5 25.3 L42 25.3 L41.5 25.3 L41 25.3 L40.5 25.3 L40 25.3 L39.5 25.3 L39 25.3 L38.5 25.3 L38 25.3 L37.5 25.3 L37 25.3 L36.5 25.3 L36 25.3 L35.5 25.3 L35 25.3 L34.5 25.3 L34 25.3 L33.5 25.3 L33 25.3 L32.5 25.3 L32 25.3 L31.5 25.34 L31 25.33 L30.5 25.39 L30 25.6 L29.5 25.7 L29 25.63 L28.5 25.72 L28 26.05 L27.5 26.18 L27 26.05 L26.5 26.17 L26 26.64 L25.5 26.8 L25 26.58 L24.5 26.74 L24 27.36 L23.5 27.56 L23 27.24 L22.5 27.42 L22 28.22 L21.5 28.46 L21 28.03 L20.5 28.24 L20 29.23 L19.5 29.5 L19 28.94 L18.5 29.2 L18 30.37 L17.5 30.68 L17 30 L16.5 30.29 L16 31.67 L15.5 32.01 L15 31.2 L14.5 31.53 L14 33.11 L13.5 33.49 L13 32.56 L12.5 32.92 L12 34.69 L11.5 35.11 L11 34.06 L10.5 34.46 L10 36.43 L9.5 36.89 L9 35.72 L8.5 36.16 L8 38.32 L7.5 38.81 L7 37.55 L6.5 38.03 L6 40.35 L5.5 40.89 L5 39.54 L4.5 40.07 L4 42.55 L3.5 43.12 L3 41.71 L2.5 42.28 L2 44.89 L1.5 45.5 L1 45.5 L0.5 39 L0 25.3Z" fill="#1b5c5a"/></svg></div>
<div class="em" style="left:869px;top:343.55px"></div>
<div class="em" style="left:152.3px;top:440.3px"></div>
<div class="em" style="left:271.75px;top:440.3px"></div>
<div class="em" style="left:391.2px;top:440.3px"></div>
<div class="cl" style="left:411.05px;top:435.1px;height:94.9px;background:#10a7b0"><span class="n" style="color:#e2fdff">Fx2 Biza</span><svg style="left:100.4px;top:4.6px" width="13" height="15"><path d="M0.3 0.3 L12.2 7 L0.3 13.8Z" fill="rgba(255,255,255,.56)"/></svg><svg style="left:10.3px;top:26.5px" width="97" height="50" viewBox="0 0 97 50"><path d="M0 24.7 L0.5 9 L1 2.5 L1.5 3 L2 3.98 L2.5 7.1 L3 8.01 L3.5 6.81 L4 7.71 L4.5 10.58 L5 11.39 L5.5 10.27 L6 11.09 L6.5 13.66 L7 14.37 L7.5 13.39 L8 14.12 L8.5 16.34 L9 16.96 L9.5 16.15 L10 16.79 L10.5 18.65 L11 19.17 L11.5 18.56 L12 19.11 L12.5 20.59 L13 21.01 L13.5 20.6 L14 21.05 L14.5 22.16 L15 22.5 L15.5 22.27 L16 22.63 L16.5 23.39 L17 23.64 L17.5 23.56 L18 23.82 L18.5 24.27 L19 24.43 L19.5 24.45 L20 24.61 L20.5 24.7 L21 24.7 L21.5 24.7 L22 24.7 L22.5 24.7 L23 24.7 L23.5 24.7 L24 24.7 L24.5 24.7 L25 24.7 L25.5 24.7 L26 24.7 L26.5 24.7 L27 24.7 L27.5 24.7 L28 24.7 L28.5 24.7 L29 24.7 L29.5 24.7 L30 24.7 L30.5 24.7 L31 24.7 L31.5 24.7 L32 24.7 L32.5 24.7 L33 24.7 L33.5 24.7 L34 24.7 L34.5 24.7 L35 24.7 L35.5 24.7 L36 24.7 L36.5 24.7 L37 24.7 L37.5 24.7 L38 24.7 L38.5 24.7 L39 24.7 L39.5 24.7 L40 24.7 L40.5 24.7 L41 24.7 L41.5 24.7 L42 24.7 L42.5 24.7 L43 24.7 L43.5 24.7 L44 24.7 L44.5 24.7 L45 24.7 L45.5 24.7 L46 24.7 L46.5 24.7 L47 24.7 L47.5 24.7 L48 24.7 L48.5 24.7 L49 3 L49.5 4 L50 4.9 L50.5 7.83 L51 8.66 L51.5 7.48 L52 8.3 L52.5 11.02 L53 11.76 L53.5 10.66 L54 11.4 L54.5 13.86 L55 14.51 L55.5 13.53 L56 14.2 L56.5 16.35 L57 16.93 L57.5 16.1 L58 16.7 L58.5 18.52 L59 19.01 L59.5 18.36 L60 18.88 L60.5 20.36 L61 20.77 L61.5 20.31 L62 20.74 L62.5 21.88 L63 22.21 L63.5 21.93 L64 22.28 L64.5 23.1 L65 23.36 L65.5 23.22 L66 23.49 L66.5 24.01 L67 24.2 L67.5 24.18 L68 24.36 L68.5 24.63 L69 24.7 L69.5 24.7 L70 24.7 L70.5 24.7 L71 24.7 L71.5 24.7 L72 24.7 L72.5 24.7 L73 24.7 L73.5 24.7 L74 24.7 L74.5 24.7 L75 24.7 L75.5 24.7 L76 24.7 L76.5 24.7 L77 24.7 L77.5 24.7 L78 24.7 L78.5 24.7 L79 24.7 L79.5 24.7 L80 24.7 L80.5 24.7 L81 24.7 L81.5 24.7 L82 24.7 L82.5 24.7 L83 24.7 L83.5 24.7 L84 24.7 L84.5 24.7 L85 24.7 L85.5 24.7 L86 24.7 L86.5 24.7 L87 24.7 L87.5 24.7 L88 24.7 L88.5 24.7 L89 24.7 L89.5 24.7 L90 24.7 L90.5 24.7 L91 24.7 L91.5 24.7 L92 24.7 L92.5 24.7 L93 24.7 L93.5 24.7 L94 24.7 L94.5 24.7 L95 24.7 L95.5 24.7 L96 24.7 L96.5 24.7 L97 24.7 L97 25.3 L96.5 25.3 L96 25.3 L95.5 25.3 L95 25.3 L94.5 25.3 L94 25.3 L93.5 25.3 L93 25.3 L92.5 25.3 L92 25.3 L91.5 25.3 L91 25.3 L90.5 25.3 L90 25.3 L89.5 25.3 L89 25.3 L88.5 25.3 L88 25.3 L87.5 25.3 L87 25.3 L86.5 25.3 L86 25.3 L85.5 25.3 L85 25.3 L84.5 25.3 L84 25.3 L83.5 25.3 L83 25.3 L82.5 25.3 L82 25.3 L81.5 25.3 L81 25.3 L80.5 25.3 L80 25.3 L79.5 25.3 L79 25.3 L78.5 25.3 L78 25.3 L77.5 25.3 L77 25.3 L76.5 25.3 L76 25.3 L75.5 25.3 L75 25.3 L74.5 25.3 L74 25.3 L73.5 25.3 L73 25.3 L72.5 25.3 L72 25.3 L71.5 25.3 L71 25.3 L70.5 25.3 L70 25.3 L69.5 25.3 L69 25.3 L68.5 25.37 L68 25.64 L67.5 25.82 L67 25.8 L66.5 25.99 L66 26.51 L65.5 26.78 L65 26.64 L64.5 26.9 L64 27.72 L63.5 28.07 L63 27.79 L62.5 28.12 L62 29.26 L61.5 29.69 L61 29.23 L60.5 29.64 L60 31.12 L59.5 31.64 L59 30.99 L58.5 31.48 L58 33.3 L57.5 33.9 L57 33.07 L56.5 33.65 L56 35.8 L55.5 36.47 L55 35.49 L54.5 36.14 L54 38.6 L53.5 39.34 L53 38.24 L52.5 38.98 L52 41.7 L51.5 42.52 L51 41.34 L50.5 42.17 L50 45.1 L49.5 46 L49 47 L48.5 25.3 L48 25.3 L47.5 25.3 L47 25.3 L46.5 25.3 L46 25.3 L45.5 25.3 L45 25.3 L44.5 25.3 L44 25.3 L43.5 25.3 L43 25.3 L42.5 25.3 L42 25.3 L41.5 25.3 L41 25.3 L40.5 25.3 L40 25.3 L39.5 25.3 L39 25.3 L38.5 25.3 L38 25.3 L37.5 25.3 L37 25.3 L36.5 25.3 L36 25.3 L35.5 25.3 L35 25.3 L34.5 25.3 L34 25.3 L33.5 25.3 L33 25.3 L32.5 25.3 L32 25.3 L31.5 25.3 L31 25.3 L30.5 25.3 L30 25.3 L29.5 25.3 L29 25.3 L28.5 25.3 L28 25.3 L27.5 25.3 L27 25.3 L26.5 25.3 L26 25.3 L25.5 25.3 L25 25.3 L24.5 25.3 L24 25.3 L23.5 25.3 L23 25.3 L22.5 25.3 L22 25.3 L21.5 25.3 L21 25.3 L20.5 25.3 L20 25.39 L19.5 25.55 L19 25.57 L18.5 25.73 L18 26.18 L17.5 26.44 L17 26.36 L16.5 26.61 L16 27.37 L15.5 27.73 L15 27.5 L14.5 27.84 L14 28.95 L13.5 29.4 L13 28.99 L12.5 29.41 L12 30.89 L11.5 31.44 L11 30.83 L10.5 31.35 L10 33.21 L9.5 33.85 L9 33.04 L8.5 33.66 L8 35.88 L7.5 36.61 L7 35.63 L6.5 36.34 L6 38.91 L5.5 39.73 L5 38.61 L4.5 39.42 L4 42.29 L3.5 43.19 L3 41.99 L2.5 42.9 L2 46.02 L1.5 47 L1 47.5 L0.5 41 L0 25.3Z" fill="#0d7a88"/><g fill="#0d7a88" opacity=".45"><rect x="48" y="-2" width="1" height="54" opacity=".45"/><path d="M45.3 -5h6.4l-3.2 4.6z M45.3 55h6.4l-3.2 -4.6z"/></g></svg></div>
<div class="cl" style="left:530.5px;top:435.1px;height:94.9px;background:#3ef1ff;box-shadow:0 0 0 1.2px rgba(10,12,14,.5), inset 0 0 0 1.3px rgba(255,255,255,.28)"><div class="st" style="background:#2ea9b2"></div><span class="n" style="color:#e2fdff">Fx2 Biza</span><svg style="left:100.4px;top:4.6px" width="13" height="15"><path d="M0.3 0.3 L12.2 7 L0.3 13.8Z" fill="#fff"/></svg><svg style="left:10.3px;top:26.5px" width="97" height="50" viewBox="0 0 97 50"><path d="M0 24.7 L0.5 9 L1 2.5 L1.5 3 L2 3.98 L2.5 7.1 L3 8.01 L3.5 6.81 L4 7.71 L4.5 10.58 L5 11.39 L5.5 10.27 L6 11.09 L6.5 13.66 L7 14.37 L7.5 13.39 L8 14.12 L8.5 16.34 L9 16.96 L9.5 16.15 L10 16.79 L10.5 18.65 L11 19.17 L11.5 18.56 L12 19.11 L12.5 20.59 L13 21.01 L13.5 20.6 L14 21.05 L14.5 22.16 L15 22.5 L15.5 22.27 L16 22.63 L16.5 23.39 L17 23.64 L17.5 23.56 L18 23.82 L18.5 24.27 L19 24.43 L19.5 24.45 L20 24.61 L20.5 24.7 L21 24.7 L21.5 24.7 L22 24.7 L22.5 24.7 L23 24.7 L23.5 24.7 L24 24.7 L24.5 24.7 L25 24.7 L25.5 24.7 L26 24.7 L26.5 24.7 L27 24.7 L27.5 24.7 L28 24.7 L28.5 24.7 L29 24.7 L29.5 24.7 L30 24.7 L30.5 24.7 L31 24.7 L31.5 24.7 L32 24.7 L32.5 24.7 L33 24.7 L33.5 24.7 L34 24.7 L34.5 24.7 L35 24.7 L35.5 24.7 L36 24.7 L36.5 24.7 L37 24.7 L37.5 24.7 L38 24.7 L38.5 24.7 L39 24.7 L39.5 24.7 L40 24.7 L40.5 24.7 L41 24.7 L41.5 24.7 L42 24.7 L42.5 24.7 L43 24.7 L43.5 24.7 L44 24.7 L44.5 24.7 L45 24.7 L45.5 24.7 L46 24.7 L46.5 24.7 L47 24.7 L47.5 24.7 L48 24.7 L48.5 24.7 L49 3 L49.5 4 L50 4.9 L50.5 7.83 L51 8.66 L51.5 7.48 L52 8.3 L52.5 11.02 L53 11.76 L53.5 10.66 L54 11.4 L54.5 13.86 L55 14.51 L55.5 13.53 L56 14.2 L56.5 16.35 L57 16.93 L57.5 16.1 L58 16.7 L58.5 18.52 L59 19.01 L59.5 18.36 L60 18.88 L60.5 20.36 L61 20.77 L61.5 20.31 L62 20.74 L62.5 21.88 L63 22.21 L63.5 21.93 L64 22.28 L64.5 23.1 L65 23.36 L65.5 23.22 L66 23.49 L66.5 24.01 L67 24.2 L67.5 24.18 L68 24.36 L68.5 24.63 L69 24.7 L69.5 24.7 L70 24.7 L70.5 24.7 L71 24.7 L71.5 24.7 L72 24.7 L72.5 24.7 L73 24.7 L73.5 24.7 L74 24.7 L74.5 24.7 L75 24.7 L75.5 24.7 L76 24.7 L76.5 24.7 L77 24.7 L77.5 24.7 L78 24.7 L78.5 24.7 L79 24.7 L79.5 24.7 L80 24.7 L80.5 24.7 L81 24.7 L81.5 24.7 L82 24.7 L82.5 24.7 L83 24.7 L83.5 24.7 L84 24.7 L84.5 24.7 L85 24.7 L85.5 24.7 L86 24.7 L86.5 24.7 L87 24.7 L87.5 24.7 L88 24.7 L88.5 24.7 L89 24.7 L89.5 24.7 L90 24.7 L90.5 24.7 L91 24.7 L91.5 24.7 L92 24.7 L92.5 24.7 L93 24.7 L93.5 24.7 L94 24.7 L94.5 24.7 L95 24.7 L95.5 24.7 L96 24.7 L96.5 24.7 L97 24.7 L97 25.3 L96.5 25.3 L96 25.3 L95.5 25.3 L95 25.3 L94.5 25.3 L94 25.3 L93.5 25.3 L93 25.3 L92.5 25.3 L92 25.3 L91.5 25.3 L91 25.3 L90.5 25.3 L90 25.3 L89.5 25.3 L89 25.3 L88.5 25.3 L88 25.3 L87.5 25.3 L87 25.3 L86.5 25.3 L86 25.3 L85.5 25.3 L85 25.3 L84.5 25.3 L84 25.3 L83.5 25.3 L83 25.3 L82.5 25.3 L82 25.3 L81.5 25.3 L81 25.3 L80.5 25.3 L80 25.3 L79.5 25.3 L79 25.3 L78.5 25.3 L78 25.3 L77.5 25.3 L77 25.3 L76.5 25.3 L76 25.3 L75.5 25.3 L75 25.3 L74.5 25.3 L74 25.3 L73.5 25.3 L73 25.3 L72.5 25.3 L72 25.3 L71.5 25.3 L71 25.3 L70.5 25.3 L70 25.3 L69.5 25.3 L69 25.3 L68.5 25.37 L68 25.64 L67.5 25.82 L67 25.8 L66.5 25.99 L66 26.51 L65.5 26.78 L65 26.64 L64.5 26.9 L64 27.72 L63.5 28.07 L63 27.79 L62.5 28.12 L62 29.26 L61.5 29.69 L61 29.23 L60.5 29.64 L60 31.12 L59.5 31.64 L59 30.99 L58.5 31.48 L58 33.3 L57.5 33.9 L57 33.07 L56.5 33.65 L56 35.8 L55.5 36.47 L55 35.49 L54.5 36.14 L54 38.6 L53.5 39.34 L53 38.24 L52.5 38.98 L52 41.7 L51.5 42.52 L51 41.34 L50.5 42.17 L50 45.1 L49.5 46 L49 47 L48.5 25.3 L48 25.3 L47.5 25.3 L47 25.3 L46.5 25.3 L46 25.3 L45.5 25.3 L45 25.3 L44.5 25.3 L44 25.3 L43.5 25.3 L43 25.3 L42.5 25.3 L42 25.3 L41.5 25.3 L41 25.3 L40.5 25.3 L40 25.3 L39.5 25.3 L39 25.3 L38.5 25.3 L38 25.3 L37.5 25.3 L37 25.3 L36.5 25.3 L36 25.3 L35.5 25.3 L35 25.3 L34.5 25.3 L34 25.3 L33.5 25.3 L33 25.3 L32.5 25.3 L32 25.3 L31.5 25.3 L31 25.3 L30.5 25.3 L30 25.3 L29.5 25.3 L29 25.3 L28.5 25.3 L28 25.3 L27.5 25.3 L27 25.3 L26.5 25.3 L26 25.3 L25.5 25.3 L25 25.3 L24.5 25.3 L24 25.3 L23.5 25.3 L23 25.3 L22.5 25.3 L22 25.3 L21.5 25.3 L21 25.3 L20.5 25.3 L20 25.39 L19.5 25.55 L19 25.57 L18.5 25.73 L18 26.18 L17.5 26.44 L17 26.36 L16.5 26.61 L16 27.37 L15.5 27.73 L15 27.5 L14.5 27.84 L14 28.95 L13.5 29.4 L13 28.99 L12.5 29.41 L12 30.89 L11.5 31.44 L11 30.83 L10.5 31.35 L10 33.21 L9.5 33.85 L9 33.04 L8.5 33.66 L8 35.88 L7.5 36.61 L7 35.63 L6.5 36.34 L6 38.91 L5.5 39.73 L5 38.61 L4.5 39.42 L4 42.29 L3.5 43.19 L3 41.99 L2.5 42.9 L2 46.02 L1.5 47 L1 47.5 L0.5 41 L0 25.3Z" fill="#2fa3b3"/><g fill="#1d5f66" opacity="1"><rect x="48" y="-2" width="1" height="54" opacity="1"/><path d="M45.3 -5h6.4l-3.2 4.6z M45.3 55h6.4l-3.2 -4.6z"/></g></svg><div class="pb"></div></div>
<div class="cl" style="left:649.95px;top:435.1px;height:94.9px;background:#10a7b0"><span class="n" style="color:#e2fdff">Fx2 Biza</span><svg style="left:100.4px;top:4.6px" width="13" height="15"><path d="M0.3 0.3 L12.2 7 L0.3 13.8Z" fill="rgba(255,255,255,.56)"/></svg><svg style="left:10.3px;top:26.5px" width="97" height="50" viewBox="0 0 97 50"><path d="M0 24.7 L0.5 9 L1 2.5 L1.5 3 L2 3.98 L2.5 7.1 L3 8.01 L3.5 6.81 L4 7.71 L4.5 10.58 L5 11.39 L5.5 10.27 L6 11.09 L6.5 13.66 L7 14.37 L7.5 13.39 L8 14.12 L8.5 16.34 L9 16.96 L9.5 16.15 L10 16.79 L10.5 18.65 L11 19.17 L11.5 18.56 L12 19.11 L12.5 20.59 L13 21.01 L13.5 20.6 L14 21.05 L14.5 22.16 L15 22.5 L15.5 22.27 L16 22.63 L16.5 23.39 L17 23.64 L17.5 23.56 L18 23.82 L18.5 24.27 L19 24.43 L19.5 24.45 L20 24.61 L20.5 24.7 L21 24.7 L21.5 24.7 L22 24.7 L22.5 24.7 L23 24.7 L23.5 24.7 L24 24.7 L24.5 24.7 L25 24.7 L25.5 24.7 L26 24.7 L26.5 24.7 L27 24.7 L27.5 24.7 L28 24.7 L28.5 24.7 L29 24.7 L29.5 24.7 L30 24.7 L30.5 24.7 L31 24.7 L31.5 24.7 L32 24.7 L32.5 24.7 L33 24.7 L33.5 24.7 L34 24.7 L34.5 24.7 L35 24.7 L35.5 24.7 L36 24.7 L36.5 24.7 L37 24.7 L37.5 24.7 L38 24.7 L38.5 24.7 L39 24.7 L39.5 24.7 L40 24.7 L40.5 24.7 L41 24.7 L41.5 24.7 L42 24.7 L42.5 24.7 L43 24.7 L43.5 24.7 L44 24.7 L44.5 24.7 L45 24.7 L45.5 24.7 L46 24.7 L46.5 24.7 L47 24.7 L47.5 24.7 L48 24.7 L48.5 24.7 L49 3 L49.5 4 L50 4.9 L50.5 7.83 L51 8.66 L51.5 7.48 L52 8.3 L52.5 11.02 L53 11.76 L53.5 10.66 L54 11.4 L54.5 13.86 L55 14.51 L55.5 13.53 L56 14.2 L56.5 16.35 L57 16.93 L57.5 16.1 L58 16.7 L58.5 18.52 L59 19.01 L59.5 18.36 L60 18.88 L60.5 20.36 L61 20.77 L61.5 20.31 L62 20.74 L62.5 21.88 L63 22.21 L63.5 21.93 L64 22.28 L64.5 23.1 L65 23.36 L65.5 23.22 L66 23.49 L66.5 24.01 L67 24.2 L67.5 24.18 L68 24.36 L68.5 24.63 L69 24.7 L69.5 24.7 L70 24.7 L70.5 24.7 L71 24.7 L71.5 24.7 L72 24.7 L72.5 24.7 L73 24.7 L73.5 24.7 L74 24.7 L74.5 24.7 L75 24.7 L75.5 24.7 L76 24.7 L76.5 24.7 L77 24.7 L77.5 24.7 L78 24.7 L78.5 24.7 L79 24.7 L79.5 24.7 L80 24.7 L80.5 24.7 L81 24.7 L81.5 24.7 L82 24.7 L82.5 24.7 L83 24.7 L83.5 24.7 L84 24.7 L84.5 24.7 L85 24.7 L85.5 24.7 L86 24.7 L86.5 24.7 L87 24.7 L87.5 24.7 L88 24.7 L88.5 24.7 L89 24.7 L89.5 24.7 L90 24.7 L90.5 24.7 L91 24.7 L91.5 24.7 L92 24.7 L92.5 24.7 L93 24.7 L93.5 24.7 L94 24.7 L94.5 24.7 L95 24.7 L95.5 24.7 L96 24.7 L96.5 24.7 L97 24.7 L97 25.3 L96.5 25.3 L96 25.3 L95.5 25.3 L95 25.3 L94.5 25.3 L94 25.3 L93.5 25.3 L93 25.3 L92.5 25.3 L92 25.3 L91.5 25.3 L91 25.3 L90.5 25.3 L90 25.3 L89.5 25.3 L89 25.3 L88.5 25.3 L88 25.3 L87.5 25.3 L87 25.3 L86.5 25.3 L86 25.3 L85.5 25.3 L85 25.3 L84.5 25.3 L84 25.3 L83.5 25.3 L83 25.3 L82.5 25.3 L82 25.3 L81.5 25.3 L81 25.3 L80.5 25.3 L80 25.3 L79.5 25.3 L79 25.3 L78.5 25.3 L78 25.3 L77.5 25.3 L77 25.3 L76.5 25.3 L76 25.3 L75.5 25.3 L75 25.3 L74.5 25.3 L74 25.3 L73.5 25.3 L73 25.3 L72.5 25.3 L72 25.3 L71.5 25.3 L71 25.3 L70.5 25.3 L70 25.3 L69.5 25.3 L69 25.3 L68.5 25.37 L68 25.64 L67.5 25.82 L67 25.8 L66.5 25.99 L66 26.51 L65.5 26.78 L65 26.64 L64.5 26.9 L64 27.72 L63.5 28.07 L63 27.79 L62.5 28.12 L62 29.26 L61.5 29.69 L61 29.23 L60.5 29.64 L60 31.12 L59.5 31.64 L59 30.99 L58.5 31.48 L58 33.3 L57.5 33.9 L57 33.07 L56.5 33.65 L56 35.8 L55.5 36.47 L55 35.49 L54.5 36.14 L54 38.6 L53.5 39.34 L53 38.24 L52.5 38.98 L52 41.7 L51.5 42.52 L51 41.34 L50.5 42.17 L50 45.1 L49.5 46 L49 47 L48.5 25.3 L48 25.3 L47.5 25.3 L47 25.3 L46.5 25.3 L46 25.3 L45.5 25.3 L45 25.3 L44.5 25.3 L44 25.3 L43.5 25.3 L43 25.3 L42.5 25.3 L42 25.3 L41.5 25.3 L41 25.3 L40.5 25.3 L40 25.3 L39.5 25.3 L39 25.3 L38.5 25.3 L38 25.3 L37.5 25.3 L37 25.3 L36.5 25.3 L36 25.3 L35.5 25.3 L35 25.3 L34.5 25.3 L34 25.3 L33.5 25.3 L33 25.3 L32.5 25.3 L32 25.3 L31.5 25.3 L31 25.3 L30.5 25.3 L30 25.3 L29.5 25.3 L29 25.3 L28.5 25.3 L28 25.3 L27.5 25.3 L27 25.3 L26.5 25.3 L26 25.3 L25.5 25.3 L25 25.3 L24.5 25.3 L24 25.3 L23.5 25.3 L23 25.3 L22.5 25.3 L22 25.3 L21.5 25.3 L21 25.3 L20.5 25.3 L20 25.39 L19.5 25.55 L19 25.57 L18.5 25.73 L18 26.18 L17.5 26.44 L17 26.36 L16.5 26.61 L16 27.37 L15.5 27.73 L15 27.5 L14.5 27.84 L14 28.95 L13.5 29.4 L13 28.99 L12.5 29.41 L12 30.89 L11.5 31.44 L11 30.83 L10.5 31.35 L10 33.21 L9.5 33.85 L9 33.04 L8.5 33.66 L8 35.88 L7.5 36.61 L7 35.63 L6.5 36.34 L6 38.91 L5.5 39.73 L5 38.61 L4.5 39.42 L4 42.29 L3.5 43.19 L3 41.99 L2.5 42.9 L2 46.02 L1.5 47 L1 47.5 L0.5 41 L0 25.3Z" fill="#0d7a88"/><g fill="#0d7a88" opacity=".45"><rect x="48" y="-2" width="1" height="54" opacity=".45"/><path d="M45.3 -5h6.4l-3.2 4.6z M45.3 55h6.4l-3.2 -4.6z"/></g></svg></div>
<div class="em" style="left:869px;top:440.3px"></div>
<div class="em" style="left:152.3px;top:537.05px"></div>
<div class="em" style="left:271.75px;top:537.05px"></div>
<div class="em" style="left:391.2px;top:537.05px"></div>
<div class="em" style="left:510.65px;top:537.05px"></div>
<div class="cl" style="left:530.5px;top:531.85px;height:94.9px;background:#2b60ff;box-shadow:0 0 0 1.2px rgba(10,12,14,.5), inset 0 0 0 1.3px rgba(255,255,255,.28)"><span class="n" style="color:#e4eaff">Kick Biza</span><svg style="left:100.4px;top:4.6px" width="13" height="15"><path d="M0.3 0.3 L12.2 7 L0.3 13.8Z" fill="#fff"/></svg><svg style="left:10.3px;top:26.5px" width="97" height="50" viewBox="0 0 97 50"><path d="M0.3 25 L2.3 1.5 L5.46 25 L2.3 48.5 ZM6.36 25 L8.37 2.2 L11.53 25 L8.37 47.7 ZM12.43 25 L14.43 2.9 L17.59 25 L14.43 48.5 ZM18.49 25 L20.49 1.5 L23.65 25 L20.49 47.7 ZM24.55 25 L26.55 2.2 L29.71 25 L26.55 48.5 ZM30.61 25 L32.62 2.9 L35.77 25 L32.62 47.7 ZM36.67 25 L38.68 1.5 L41.84 25 L38.68 48.5 ZM42.74 25 L44.74 2.2 L47.9 25 L44.74 47.7 ZM48.8 25 L50.8 2.9 L53.96 25 L50.8 48.5 ZM54.86 25 L56.87 1.5 L60.02 25 L56.87 47.7 ZM60.92 25 L62.93 2.2 L66.09 25 L62.93 48.5 ZM66.99 25 L68.99 2.9 L72.15 25 L68.99 47.7 ZM73.05 25 L75.05 1.5 L78.21 25 L75.05 48.5 ZM79.11 25 L81.12 2.2 L84.28 25 L81.12 47.7 ZM85.17 25 L87.18 2.9 L90.34 25 L87.18 48.5 ZM91.24 25 L93.24 1.5 L96.4 25 L93.24 47.7 ZM0 24.5H97V25.5H0Z" fill="#2348c8"/><g fill="#2348c8" opacity=".8"><rect x="48" y="-2" width="1" height="54" opacity="1"/><path d="M45.3 -5h6.4l-3.2 4.6z M45.3 55h6.4l-3.2 -4.6z"/></g></svg><div class="pb"></div></div>
<div class="cl" style="left:649.95px;top:531.85px;height:94.9px;background:#0227b8"><span class="n" style="color:#e4eaff">Kick Biza</span><svg style="left:100.4px;top:4.6px" width="13" height="15"><path d="M0.3 0.3 L12.2 7 L0.3 13.8Z" fill="rgba(255,255,255,.56)"/></svg><svg style="left:10.3px;top:26.5px" width="97" height="50" viewBox="0 0 97 50"><path d="M0.3 25 L2.3 1.5 L5.46 25 L2.3 48.5 ZM6.36 25 L8.37 2.2 L11.53 25 L8.37 47.7 ZM12.43 25 L14.43 2.9 L17.59 25 L14.43 48.5 ZM18.49 25 L20.49 1.5 L23.65 25 L20.49 47.7 ZM24.55 25 L26.55 2.2 L29.71 25 L26.55 48.5 ZM30.61 25 L32.62 2.9 L35.77 25 L32.62 47.7 ZM36.67 25 L38.68 1.5 L41.84 25 L38.68 48.5 ZM42.74 25 L44.74 2.2 L47.9 25 L44.74 47.7 ZM48.8 25 L50.8 2.9 L53.96 25 L50.8 48.5 ZM54.86 25 L56.87 1.5 L60.02 25 L56.87 47.7 ZM60.92 25 L62.93 2.2 L66.09 25 L62.93 48.5 ZM66.99 25 L68.99 2.9 L72.15 25 L68.99 47.7 ZM73.05 25 L75.05 1.5 L78.21 25 L75.05 48.5 ZM79.11 25 L81.12 2.2 L84.28 25 L81.12 47.7 ZM85.17 25 L87.18 2.9 L90.34 25 L87.18 48.5 ZM91.24 25 L93.24 1.5 L96.4 25 L93.24 47.7 ZM0 24.5H97V25.5H0Z" fill="#7d97f2"/><g fill="#2a48c4" opacity=".55"><rect x="48" y="-2" width="1" height="54" opacity="1"/><path d="M45.3 -5h6.4l-3.2 4.6z M45.3 55h6.4l-3.2 -4.6z"/></g></svg></div>
<div class="cl" style="left:769.4px;top:531.85px;height:94.9px;background:#0227b8"><span class="n" style="color:#e4eaff">Kick Biza</span><svg style="left:100.4px;top:4.6px" width="13" height="15"><path d="M0.3 0.3 L12.2 7 L0.3 13.8Z" fill="rgba(255,255,255,.56)"/></svg><svg style="left:10.3px;top:26.5px" width="97" height="50" viewBox="0 0 97 50"><path d="M0.3 25 L2.3 1.5 L5.46 25 L2.3 48.5 ZM6.36 25 L8.37 2.2 L11.53 25 L8.37 47.7 ZM12.43 25 L14.43 2.9 L17.59 25 L14.43 48.5 ZM18.49 25 L20.49 1.5 L23.65 25 L20.49 47.7 ZM24.55 25 L26.55 2.2 L29.71 25 L26.55 48.5 ZM30.61 25 L32.62 2.9 L35.77 25 L32.62 47.7 ZM36.67 25 L38.68 1.5 L41.84 25 L38.68 48.5 ZM42.74 25 L44.74 2.2 L47.9 25 L44.74 47.7 ZM48.8 25 L50.8 2.9 L53.96 25 L50.8 48.5 ZM54.86 25 L56.87 1.5 L60.02 25 L56.87 47.7 ZM60.92 25 L62.93 2.2 L66.09 25 L62.93 48.5 ZM66.99 25 L68.99 2.9 L72.15 25 L68.99 47.7 ZM73.05 25 L75.05 1.5 L78.21 25 L75.05 48.5 ZM79.11 25 L81.12 2.2 L84.28 25 L81.12 47.7 ZM85.17 25 L87.18 2.9 L90.34 25 L87.18 48.5 ZM91.24 25 L93.24 1.5 L96.4 25 L93.24 47.7 ZM0 24.5H97V25.5H0Z" fill="#7d97f2"/><g fill="#2a48c4" opacity=".55"><rect x="48" y="-2" width="1" height="54" opacity="1"/><path d="M45.3 -5h6.4l-3.2 4.6z M45.3 55h6.4l-3.2 -4.6z"/></g></svg></div>
<div class="em" style="left:152.3px;top:633.8px"></div>
<div class="em" style="left:271.75px;top:633.8px"></div>
<div class="em" style="left:391.2px;top:633.8px"></div>
<div class="em" style="left:510.65px;top:633.8px"></div>
<div class="cl" style="left:530.5px;top:628.6px;height:94.9px;background:#fb2a68;box-shadow:0 0 0 1.2px rgba(10,12,14,.5), inset 0 0 0 1.3px rgba(255,255,255,.28)"><span class="n" style="color:#ffdfe8">Lead Biza</span><svg style="left:100.4px;top:4.6px" width="13" height="15"><path d="M0.3 0.3 L12.2 7 L0.3 13.8Z" fill="#fff"/></svg><svg style="left:10.3px;top:26.5px" width="97" height="50" viewBox="0 0 97 50"><path d="M0 24.4 L0.33 24.4 L0.67 24.4 L1 22.25 L1.33 21.37 L1.67 18.87 L2 16.38 L2.33 13.89 L2.67 11.39 L3 8.9 L3.33 11.39 L3.67 13.89 L4 16.38 L4.33 18.87 L4.67 21.37 L5 23.48 L5.33 22.55 L5.67 20.51 L6 18.47 L6.33 16.43 L6.67 14.39 L7 12.35 L7.33 14.39 L7.67 16.43 L8 18.47 L8.33 20.51 L8.67 22.1 L9 22.12 L9.33 21.37 L9.67 18.87 L10 16.38 L10.33 13.89 L10.67 11.39 L11 8.9 L11.33 11.39 L11.67 13.89 L12 16.38 L12.33 18.87 L12.67 21.37 L13 23.33 L13.33 23.18 L13.67 22.98 L14 22.78 L14.33 22.57 L14.67 21.32 L15 19.94 L15.33 18.56 L15.67 17.18 L16 15.8 L16.33 17.18 L16.67 18.56 L17 19.94 L17.33 21.32 L17.67 22.7 L18 23.13 L18.33 23.3 L18.67 23.42 L19 23.49 L19.33 23.49 L19.67 23.44 L20 21.69 L20.33 19.87 L20.67 18.05 L21 16.23 L21.33 14.41 L21.67 14.41 L22 16.23 L22.33 18.05 L22.67 19.87 L23 21.69 L23.33 22.21 L23.67 22.35 L24 22.53 L24.33 22.74 L24.67 22.95 L25 22.71 L25.33 21.68 L25.67 20.66 L26 19.64 L26.33 18.61 L26.67 18.61 L27 19.64 L27.33 20.66 L27.67 21.68 L28 22.71 L28.33 22.55 L28.67 22.37 L29 22.22 L29.33 22.13 L29.67 22.1 L30 22.13 L30.33 21.37 L30.67 18.87 L31 16.38 L31.33 13.89 L31.67 11.39 L32 8.9 L32.33 11.39 L32.67 13.89 L33 16.38 L33.33 18.87 L33.67 21.37 L34 20.65 L34.33 18.66 L34.67 16.68 L35 14.69 L35.33 14.29 L35.67 16.28 L36 18.26 L36.33 20.25 L36.67 22.1 L37 22.13 L37.33 22.23 L37.67 22.37 L38 22.56 L38.33 22.76 L38.67 22.58 L39 19.89 L39.33 17.19 L39.67 14.49 L40 11.8 L40.33 9.1 L40.67 9.1 L41 11.8 L41.33 14.49 L41.67 14.72 L42 11.82 L42.33 8.92 L42.67 7.18 L43 10.08 L43.33 12.98 L43.67 15.59 L44 12.69 L44.33 9.79 L44.67 6.89 L45 9.21 L45.33 12.11 L45.67 15.01 L46 14.22 L46.33 11.53 L46.67 8.83 L47 9.37 L47.33 12.06 L47.67 14.76 L48 17.46 L48.33 20.15 L48.67 22.85 L49 22.72 L49.33 22.52 L49.67 22.34 L50 20.36 L50.33 18.07 L50.67 15.78 L51 13.49 L51.33 11.2 L51.67 11.2 L52 13.49 L52.33 15.78 L52.67 18.07 L53 20.36 L53.33 22.65 L53.67 23.45 L54 23.5 L54.33 23.49 L54.67 23.41 L55 23.29 L55.33 21.37 L55.67 18.87 L56 16.38 L56.33 13.89 L56.67 11.39 L57 8.9 L57.33 11.39 L57.67 13.89 L58 16.38 L58.33 18.87 L58.67 21.37 L59 22.59 L59.33 22.8 L59.67 23 L60 23.19 L60.33 23.35 L60.67 23.45 L61 21.69 L61.33 19.87 L61.67 18.05 L62 16.23 L62.33 14.41 L62.67 14.41 L63 16.23 L63.33 18.05 L63.67 19.87 L64 21.69 L64.33 22.12 L64.67 22.1 L65 22.15 L65.33 22.26 L65.67 22.41 L66 20.36 L66.33 18.07 L66.67 15.78 L67 13.49 L67.33 11.2 L67.67 11.2 L68 13.49 L68.33 15.78 L68.67 18.07 L69 20.36 L69.33 22.65 L69.67 22.89 L70 22.68 L70.33 22.48 L70.67 22.31 L71 22.19 L71.33 22.11 L71.67 21.82 L72 20.31 L72.33 18.81 L72.67 17.3 L73 15.8 L73.33 17.3 L73.67 18.81 L74 20.31 L74.33 21.82 L74.67 23.46 L75 23.5 L75.33 23.48 L75.67 23.39 L76 23.26 L76.33 21.63 L76.67 19.55 L77 17.46 L77.33 15.37 L77.67 13.29 L78 11.2 L78.33 13.29 L78.67 15.37 L79 17.46 L79.33 19.55 L79.67 21.63 L80 22.62 L80.33 22.83 L80.67 23.04 L81 23.22 L81.33 22.65 L81.67 21.05 L82 19.45 L82.33 17.85 L82.67 16.25 L83 14.65 L83.33 16.25 L83.67 17.85 L84 19.45 L84.33 21.05 L84.67 22.3 L85 22.18 L85.33 22.11 L85.67 22.11 L86 22.16 L86.33 22.28 L86.67 21.12 L87 18.62 L87.33 16.13 L87.67 13.64 L88 11.14 L88.33 9.15 L88.67 11.64 L89 14.14 L89.33 16.5 L89.67 13.85 L90 10.95 L90.33 8.05 L90.67 8.05 L91 10.95 L91.33 13.85 L91.67 15.59 L92 12.69 L92.33 9.79 L92.67 6.89 L93 9.21 L93.33 12.11 L93.67 15.01 L94 14.76 L94.33 11.84 L94.67 8.92 L95 9.5 L95.33 12.42 L95.67 15.35 L96 18.27 L96.33 24.4 L96.67 24.4 L97 24.4 L97 25.6 L96.67 25.6 L96.33 25.6 L96 31.73 L95.67 34.65 L95.33 37.58 L95 40.5 L94.67 41.08 L94.33 38.16 L94 35.24 L93.67 34.99 L93.33 37.89 L93 40.79 L92.67 43.11 L92.33 40.21 L92 37.31 L91.67 34.41 L91.33 36.15 L91 39.05 L90.67 41.95 L90.33 41.95 L90 39.05 L89.67 36.15 L89.33 33.5 L89 35.86 L88.67 38.36 L88.33 40.85 L88 38.86 L87.67 36.36 L87.33 33.87 L87 31.38 L86.67 28.88 L86.33 27.72 L86 27.84 L85.67 27.89 L85.33 27.89 L85 27.82 L84.67 27.7 L84.33 28.95 L84 30.55 L83.67 32.15 L83.33 33.75 L83 35.35 L82.67 33.75 L82.33 32.15 L82 30.55 L81.67 28.95 L81.33 27.35 L81 26.78 L80.67 26.96 L80.33 27.17 L80 27.38 L79.67 28.37 L79.33 30.45 L79 32.54 L78.67 34.63 L78.33 36.71 L78 38.8 L77.67 36.71 L77.33 34.63 L77 32.54 L76.67 30.45 L76.33 28.37 L76 26.74 L75.67 26.61 L75.33 26.52 L75 26.5 L74.67 26.54 L74.33 28.18 L74 29.69 L73.67 31.19 L73.33 32.7 L73 34.2 L72.67 32.7 L72.33 31.19 L72 29.69 L71.67 28.18 L71.33 27.89 L71 27.81 L70.67 27.69 L70.33 27.52 L70 27.32 L69.67 27.11 L69.33 27.35 L69 29.64 L68.67 31.93 L68.33 34.22 L68 36.51 L67.67 38.8 L67.33 38.8 L67 36.51 L66.67 34.22 L66.33 31.93 L66 29.64 L65.67 27.59 L65.33 27.74 L65 27.85 L64.67 27.9 L64.33 27.88 L64 28.31 L63.67 30.13 L63.33 31.95 L63 33.77 L62.67 35.59 L62.33 35.59 L62 33.77 L61.67 31.95 L61.33 30.13 L61 28.31 L60.67 26.55 L60.33 26.65 L60 26.81 L59.67 27 L59.33 27.2 L59 27.41 L58.67 28.63 L58.33 31.13 L58 33.62 L57.67 36.11 L57.33 38.61 L57 41.1 L56.67 38.61 L56.33 36.11 L56 33.62 L55.67 31.13 L55.33 28.63 L55 26.71 L54.67 26.59 L54.33 26.51 L54 26.5 L53.67 26.55 L53.33 27.35 L53 29.64 L52.67 31.93 L52.33 34.22 L52 36.51 L51.67 38.8 L51.33 38.8 L51 36.51 L50.67 34.22 L50.33 31.93 L50 29.64 L49.67 27.66 L49.33 27.48 L49 27.28 L48.67 27.15 L48.33 29.85 L48 32.54 L47.67 35.24 L47.33 37.94 L47 40.63 L46.67 41.17 L46.33 38.47 L46 35.78 L45.67 34.99 L45.33 37.89 L45 40.79 L44.67 43.11 L44.33 40.21 L44 37.31 L43.67 34.41 L43.33 37.02 L43 39.92 L42.67 42.82 L42.33 41.08 L42 38.18 L41.67 35.28 L41.33 35.51 L41 38.2 L40.67 40.9 L40.33 40.9 L40 38.2 L39.67 35.51 L39.33 32.81 L39 30.11 L38.67 27.42 L38.33 27.24 L38 27.44 L37.67 27.63 L37.33 27.77 L37 27.87 L36.67 27.9 L36.33 29.75 L36 31.74 L35.67 33.72 L35.33 35.71 L35 35.31 L34.67 33.32 L34.33 31.34 L34 29.35 L33.67 28.63 L33.33 31.13 L33 33.62 L32.67 36.11 L32.33 38.61 L32 41.1 L31.67 38.61 L31.33 36.11 L31 33.62 L30.67 31.13 L30.33 28.63 L30 27.87 L29.67 27.9 L29.33 27.87 L29 27.78 L28.67 27.63 L28.33 27.45 L28 27.29 L27.67 28.32 L27.33 29.34 L27 30.36 L26.67 31.39 L26.33 31.39 L26 30.36 L25.67 29.34 L25.33 28.32 L25 27.29 L24.67 27.05 L24.33 27.26 L24 27.47 L23.67 27.65 L23.33 27.79 L23 28.31 L22.67 30.13 L22.33 31.95 L22 33.77 L21.67 35.59 L21.33 35.59 L21 33.77 L20.67 31.95 L20.33 30.13 L20 28.31 L19.67 26.56 L19.33 26.51 L19 26.51 L18.67 26.58 L18.33 26.7 L18 26.87 L17.67 27.3 L17.33 28.68 L17 30.06 L16.67 31.44 L16.33 32.82 L16 34.2 L15.67 32.82 L15.33 31.44 L15 30.06 L14.67 28.68 L14.33 27.43 L14 27.22 L13.67 27.02 L13.33 26.82 L13 26.67 L12.67 28.63 L12.33 31.13 L12 33.62 L11.67 36.11 L11.33 38.61 L11 41.1 L10.67 38.61 L10.33 36.11 L10 33.62 L9.67 31.13 L9.33 28.63 L9 27.88 L8.67 27.9 L8.33 29.49 L8 31.53 L7.67 33.57 L7.33 35.61 L7 37.65 L6.67 35.61 L6.33 33.57 L6 31.53 L5.67 29.49 L5.33 27.45 L5 26.52 L4.67 28.63 L4.33 31.13 L4 33.62 L3.67 36.11 L3.33 38.61 L3 41.1 L2.67 38.61 L2.33 36.11 L2 33.62 L1.67 31.13 L1.33 28.63 L1 27.75 L0.67 25.6 L0.33 25.6 L0 25.6Z" fill="#b31a4a"/></svg><div class="pb"></div></div>
<div class="cl" style="left:649.95px;top:628.6px;height:94.9px;background:#b8003a"><span class="n" style="color:#ffdfe8">Lead Biza</span><svg style="left:100.4px;top:4.6px" width="13" height="15"><path d="M0.3 0.3 L12.2 7 L0.3 13.8Z" fill="rgba(255,255,255,.56)"/></svg><svg style="left:10.3px;top:26.5px" width="97" height="50" viewBox="0 0 97 50"><path d="M0 24.4 L0.33 24.4 L0.67 24.4 L1 22.25 L1.33 21.37 L1.67 18.87 L2 16.38 L2.33 13.89 L2.67 11.39 L3 8.9 L3.33 11.39 L3.67 13.89 L4 16.38 L4.33 18.87 L4.67 21.37 L5 23.48 L5.33 22.55 L5.67 20.51 L6 18.47 L6.33 16.43 L6.67 14.39 L7 12.35 L7.33 14.39 L7.67 16.43 L8 18.47 L8.33 20.51 L8.67 22.1 L9 22.12 L9.33 21.37 L9.67 18.87 L10 16.38 L10.33 13.89 L10.67 11.39 L11 8.9 L11.33 11.39 L11.67 13.89 L12 16.38 L12.33 18.87 L12.67 21.37 L13 23.33 L13.33 23.18 L13.67 22.98 L14 22.78 L14.33 22.57 L14.67 21.32 L15 19.94 L15.33 18.56 L15.67 17.18 L16 15.8 L16.33 17.18 L16.67 18.56 L17 19.94 L17.33 21.32 L17.67 22.7 L18 23.13 L18.33 23.3 L18.67 23.42 L19 23.49 L19.33 23.49 L19.67 23.44 L20 21.69 L20.33 19.87 L20.67 18.05 L21 16.23 L21.33 14.41 L21.67 14.41 L22 16.23 L22.33 18.05 L22.67 19.87 L23 21.69 L23.33 22.21 L23.67 22.35 L24 22.53 L24.33 22.74 L24.67 22.95 L25 22.71 L25.33 21.68 L25.67 20.66 L26 19.64 L26.33 18.61 L26.67 18.61 L27 19.64 L27.33 20.66 L27.67 21.68 L28 22.71 L28.33 22.55 L28.67 22.37 L29 22.22 L29.33 22.13 L29.67 22.1 L30 22.13 L30.33 21.37 L30.67 18.87 L31 16.38 L31.33 13.89 L31.67 11.39 L32 8.9 L32.33 11.39 L32.67 13.89 L33 16.38 L33.33 18.87 L33.67 21.37 L34 20.65 L34.33 18.66 L34.67 16.68 L35 14.69 L35.33 14.29 L35.67 16.28 L36 18.26 L36.33 20.25 L36.67 22.1 L37 22.13 L37.33 22.23 L37.67 22.37 L38 22.56 L38.33 22.76 L38.67 22.58 L39 19.89 L39.33 17.19 L39.67 14.49 L40 11.8 L40.33 9.1 L40.67 9.1 L41 11.8 L41.33 14.49 L41.67 14.72 L42 11.82 L42.33 8.92 L42.67 7.18 L43 10.08 L43.33 12.98 L43.67 15.59 L44 12.69 L44.33 9.79 L44.67 6.89 L45 9.21 L45.33 12.11 L45.67 15.01 L46 14.22 L46.33 11.53 L46.67 8.83 L47 9.37 L47.33 12.06 L47.67 14.76 L48 17.46 L48.33 20.15 L48.67 22.85 L49 22.72 L49.33 22.52 L49.67 22.34 L50 20.36 L50.33 18.07 L50.67 15.78 L51 13.49 L51.33 11.2 L51.67 11.2 L52 13.49 L52.33 15.78 L52.67 18.07 L53 20.36 L53.33 22.65 L53.67 23.45 L54 23.5 L54.33 23.49 L54.67 23.41 L55 23.29 L55.33 21.37 L55.67 18.87 L56 16.38 L56.33 13.89 L56.67 11.39 L57 8.9 L57.33 11.39 L57.67 13.89 L58 16.38 L58.33 18.87 L58.67 21.37 L59 22.59 L59.33 22.8 L59.67 23 L60 23.19 L60.33 23.35 L60.67 23.45 L61 21.69 L61.33 19.87 L61.67 18.05 L62 16.23 L62.33 14.41 L62.67 14.41 L63 16.23 L63.33 18.05 L63.67 19.87 L64 21.69 L64.33 22.12 L64.67 22.1 L65 22.15 L65.33 22.26 L65.67 22.41 L66 20.36 L66.33 18.07 L66.67 15.78 L67 13.49 L67.33 11.2 L67.67 11.2 L68 13.49 L68.33 15.78 L68.67 18.07 L69 20.36 L69.33 22.65 L69.67 22.89 L70 22.68 L70.33 22.48 L70.67 22.31 L71 22.19 L71.33 22.11 L71.67 21.82 L72 20.31 L72.33 18.81 L72.67 17.3 L73 15.8 L73.33 17.3 L73.67 18.81 L74 20.31 L74.33 21.82 L74.67 23.46 L75 23.5 L75.33 23.48 L75.67 23.39 L76 23.26 L76.33 21.63 L76.67 19.55 L77 17.46 L77.33 15.37 L77.67 13.29 L78 11.2 L78.33 13.29 L78.67 15.37 L79 17.46 L79.33 19.55 L79.67 21.63 L80 22.62 L80.33 22.83 L80.67 23.04 L81 23.22 L81.33 22.65 L81.67 21.05 L82 19.45 L82.33 17.85 L82.67 16.25 L83 14.65 L83.33 16.25 L83.67 17.85 L84 19.45 L84.33 21.05 L84.67 22.3 L85 22.18 L85.33 22.11 L85.67 22.11 L86 22.16 L86.33 22.28 L86.67 21.12 L87 18.62 L87.33 16.13 L87.67 13.64 L88 11.14 L88.33 9.15 L88.67 11.64 L89 14.14 L89.33 16.5 L89.67 13.85 L90 10.95 L90.33 8.05 L90.67 8.05 L91 10.95 L91.33 13.85 L91.67 15.59 L92 12.69 L92.33 9.79 L92.67 6.89 L93 9.21 L93.33 12.11 L93.67 15.01 L94 14.76 L94.33 11.84 L94.67 8.92 L95 9.5 L95.33 12.42 L95.67 15.35 L96 18.27 L96.33 24.4 L96.67 24.4 L97 24.4 L97 25.6 L96.67 25.6 L96.33 25.6 L96 31.73 L95.67 34.65 L95.33 37.58 L95 40.5 L94.67 41.08 L94.33 38.16 L94 35.24 L93.67 34.99 L93.33 37.89 L93 40.79 L92.67 43.11 L92.33 40.21 L92 37.31 L91.67 34.41 L91.33 36.15 L91 39.05 L90.67 41.95 L90.33 41.95 L90 39.05 L89.67 36.15 L89.33 33.5 L89 35.86 L88.67 38.36 L88.33 40.85 L88 38.86 L87.67 36.36 L87.33 33.87 L87 31.38 L86.67 28.88 L86.33 27.72 L86 27.84 L85.67 27.89 L85.33 27.89 L85 27.82 L84.67 27.7 L84.33 28.95 L84 30.55 L83.67 32.15 L83.33 33.75 L83 35.35 L82.67 33.75 L82.33 32.15 L82 30.55 L81.67 28.95 L81.33 27.35 L81 26.78 L80.67 26.96 L80.33 27.17 L80 27.38 L79.67 28.37 L79.33 30.45 L79 32.54 L78.67 34.63 L78.33 36.71 L78 38.8 L77.67 36.71 L77.33 34.63 L77 32.54 L76.67 30.45 L76.33 28.37 L76 26.74 L75.67 26.61 L75.33 26.52 L75 26.5 L74.67 26.54 L74.33 28.18 L74 29.69 L73.67 31.19 L73.33 32.7 L73 34.2 L72.67 32.7 L72.33 31.19 L72 29.69 L71.67 28.18 L71.33 27.89 L71 27.81 L70.67 27.69 L70.33 27.52 L70 27.32 L69.67 27.11 L69.33 27.35 L69 29.64 L68.67 31.93 L68.33 34.22 L68 36.51 L67.67 38.8 L67.33 38.8 L67 36.51 L66.67 34.22 L66.33 31.93 L66 29.64 L65.67 27.59 L65.33 27.74 L65 27.85 L64.67 27.9 L64.33 27.88 L64 28.31 L63.67 30.13 L63.33 31.95 L63 33.77 L62.67 35.59 L62.33 35.59 L62 33.77 L61.67 31.95 L61.33 30.13 L61 28.31 L60.67 26.55 L60.33 26.65 L60 26.81 L59.67 27 L59.33 27.2 L59 27.41 L58.67 28.63 L58.33 31.13 L58 33.62 L57.67 36.11 L57.33 38.61 L57 41.1 L56.67 38.61 L56.33 36.11 L56 33.62 L55.67 31.13 L55.33 28.63 L55 26.71 L54.67 26.59 L54.33 26.51 L54 26.5 L53.67 26.55 L53.33 27.35 L53 29.64 L52.67 31.93 L52.33 34.22 L52 36.51 L51.67 38.8 L51.33 38.8 L51 36.51 L50.67 34.22 L50.33 31.93 L50 29.64 L49.67 27.66 L49.33 27.48 L49 27.28 L48.67 27.15 L48.33 29.85 L48 32.54 L47.67 35.24 L47.33 37.94 L47 40.63 L46.67 41.17 L46.33 38.47 L46 35.78 L45.67 34.99 L45.33 37.89 L45 40.79 L44.67 43.11 L44.33 40.21 L44 37.31 L43.67 34.41 L43.33 37.02 L43 39.92 L42.67 42.82 L42.33 41.08 L42 38.18 L41.67 35.28 L41.33 35.51 L41 38.2 L40.67 40.9 L40.33 40.9 L40 38.2 L39.67 35.51 L39.33 32.81 L39 30.11 L38.67 27.42 L38.33 27.24 L38 27.44 L37.67 27.63 L37.33 27.77 L37 27.87 L36.67 27.9 L36.33 29.75 L36 31.74 L35.67 33.72 L35.33 35.71 L35 35.31 L34.67 33.32 L34.33 31.34 L34 29.35 L33.67 28.63 L33.33 31.13 L33 33.62 L32.67 36.11 L32.33 38.61 L32 41.1 L31.67 38.61 L31.33 36.11 L31 33.62 L30.67 31.13 L30.33 28.63 L30 27.87 L29.67 27.9 L29.33 27.87 L29 27.78 L28.67 27.63 L28.33 27.45 L28 27.29 L27.67 28.32 L27.33 29.34 L27 30.36 L26.67 31.39 L26.33 31.39 L26 30.36 L25.67 29.34 L25.33 28.32 L25 27.29 L24.67 27.05 L24.33 27.26 L24 27.47 L23.67 27.65 L23.33 27.79 L23 28.31 L22.67 30.13 L22.33 31.95 L22 33.77 L21.67 35.59 L21.33 35.59 L21 33.77 L20.67 31.95 L20.33 30.13 L20 28.31 L19.67 26.56 L19.33 26.51 L19 26.51 L18.67 26.58 L18.33 26.7 L18 26.87 L17.67 27.3 L17.33 28.68 L17 30.06 L16.67 31.44 L16.33 32.82 L16 34.2 L15.67 32.82 L15.33 31.44 L15 30.06 L14.67 28.68 L14.33 27.43 L14 27.22 L13.67 27.02 L13.33 26.82 L13 26.67 L12.67 28.63 L12.33 31.13 L12 33.62 L11.67 36.11 L11.33 38.61 L11 41.1 L10.67 38.61 L10.33 36.11 L10 33.62 L9.67 31.13 L9.33 28.63 L9 27.88 L8.67 27.9 L8.33 29.49 L8 31.53 L7.67 33.57 L7.33 35.61 L7 37.65 L6.67 35.61 L6.33 33.57 L6 31.53 L5.67 29.49 L5.33 27.45 L5 26.52 L4.67 28.63 L4.33 31.13 L4 33.62 L3.67 36.11 L3.33 38.61 L3 41.1 L2.67 38.61 L2.33 36.11 L2 33.62 L1.67 31.13 L1.33 28.63 L1 27.75 L0.67 25.6 L0.33 25.6 L0 25.6Z" fill="#86002f"/></svg></div>
<div class="cl" style="left:769.4px;top:628.6px;height:94.9px;background:#b8003a"><span class="n" style="color:#ffdfe8">Lead Biza</span><svg style="left:100.4px;top:4.6px" width="13" height="15"><path d="M0.3 0.3 L12.2 7 L0.3 13.8Z" fill="rgba(255,255,255,.56)"/></svg><svg style="left:10.3px;top:26.5px" width="97" height="50" viewBox="0 0 97 50"><path d="M0 24.4 L0.33 24.4 L0.67 24.4 L1 22.25 L1.33 21.37 L1.67 18.87 L2 16.38 L2.33 13.89 L2.67 11.39 L3 8.9 L3.33 11.39 L3.67 13.89 L4 16.38 L4.33 18.87 L4.67 21.37 L5 23.48 L5.33 22.55 L5.67 20.51 L6 18.47 L6.33 16.43 L6.67 14.39 L7 12.35 L7.33 14.39 L7.67 16.43 L8 18.47 L8.33 20.51 L8.67 22.1 L9 22.12 L9.33 21.37 L9.67 18.87 L10 16.38 L10.33 13.89 L10.67 11.39 L11 8.9 L11.33 11.39 L11.67 13.89 L12 16.38 L12.33 18.87 L12.67 21.37 L13 23.33 L13.33 23.18 L13.67 22.98 L14 22.78 L14.33 22.57 L14.67 21.32 L15 19.94 L15.33 18.56 L15.67 17.18 L16 15.8 L16.33 17.18 L16.67 18.56 L17 19.94 L17.33 21.32 L17.67 22.7 L18 23.13 L18.33 23.3 L18.67 23.42 L19 23.49 L19.33 23.49 L19.67 23.44 L20 21.69 L20.33 19.87 L20.67 18.05 L21 16.23 L21.33 14.41 L21.67 14.41 L22 16.23 L22.33 18.05 L22.67 19.87 L23 21.69 L23.33 22.21 L23.67 22.35 L24 22.53 L24.33 22.74 L24.67 22.95 L25 22.71 L25.33 21.68 L25.67 20.66 L26 19.64 L26.33 18.61 L26.67 18.61 L27 19.64 L27.33 20.66 L27.67 21.68 L28 22.71 L28.33 22.55 L28.67 22.37 L29 22.22 L29.33 22.13 L29.67 22.1 L30 22.13 L30.33 21.37 L30.67 18.87 L31 16.38 L31.33 13.89 L31.67 11.39 L32 8.9 L32.33 11.39 L32.67 13.89 L33 16.38 L33.33 18.87 L33.67 21.37 L34 20.65 L34.33 18.66 L34.67 16.68 L35 14.69 L35.33 14.29 L35.67 16.28 L36 18.26 L36.33 20.25 L36.67 22.1 L37 22.13 L37.33 22.23 L37.67 22.37 L38 22.56 L38.33 22.76 L38.67 22.58 L39 19.89 L39.33 17.19 L39.67 14.49 L40 11.8 L40.33 9.1 L40.67 9.1 L41 11.8 L41.33 14.49 L41.67 14.72 L42 11.82 L42.33 8.92 L42.67 7.18 L43 10.08 L43.33 12.98 L43.67 15.59 L44 12.69 L44.33 9.79 L44.67 6.89 L45 9.21 L45.33 12.11 L45.67 15.01 L46 14.22 L46.33 11.53 L46.67 8.83 L47 9.37 L47.33 12.06 L47.67 14.76 L48 17.46 L48.33 20.15 L48.67 22.85 L49 22.72 L49.33 22.52 L49.67 22.34 L50 20.36 L50.33 18.07 L50.67 15.78 L51 13.49 L51.33 11.2 L51.67 11.2 L52 13.49 L52.33 15.78 L52.67 18.07 L53 20.36 L53.33 22.65 L53.67 23.45 L54 23.5 L54.33 23.49 L54.67 23.41 L55 23.29 L55.33 21.37 L55.67 18.87 L56 16.38 L56.33 13.89 L56.67 11.39 L57 8.9 L57.33 11.39 L57.67 13.89 L58 16.38 L58.33 18.87 L58.67 21.37 L59 22.59 L59.33 22.8 L59.67 23 L60 23.19 L60.33 23.35 L60.67 23.45 L61 21.69 L61.33 19.87 L61.67 18.05 L62 16.23 L62.33 14.41 L62.67 14.41 L63 16.23 L63.33 18.05 L63.67 19.87 L64 21.69 L64.33 22.12 L64.67 22.1 L65 22.15 L65.33 22.26 L65.67 22.41 L66 20.36 L66.33 18.07 L66.67 15.78 L67 13.49 L67.33 11.2 L67.67 11.2 L68 13.49 L68.33 15.78 L68.67 18.07 L69 20.36 L69.33 22.65 L69.67 22.89 L70 22.68 L70.33 22.48 L70.67 22.31 L71 22.19 L71.33 22.11 L71.67 21.82 L72 20.31 L72.33 18.81 L72.67 17.3 L73 15.8 L73.33 17.3 L73.67 18.81 L74 20.31 L74.33 21.82 L74.67 23.46 L75 23.5 L75.33 23.48 L75.67 23.39 L76 23.26 L76.33 21.63 L76.67 19.55 L77 17.46 L77.33 15.37 L77.67 13.29 L78 11.2 L78.33 13.29 L78.67 15.37 L79 17.46 L79.33 19.55 L79.67 21.63 L80 22.62 L80.33 22.83 L80.67 23.04 L81 23.22 L81.33 22.65 L81.67 21.05 L82 19.45 L82.33 17.85 L82.67 16.25 L83 14.65 L83.33 16.25 L83.67 17.85 L84 19.45 L84.33 21.05 L84.67 22.3 L85 22.18 L85.33 22.11 L85.67 22.11 L86 22.16 L86.33 22.28 L86.67 21.12 L87 18.62 L87.33 16.13 L87.67 13.64 L88 11.14 L88.33 9.15 L88.67 11.64 L89 14.14 L89.33 16.5 L89.67 13.85 L90 10.95 L90.33 8.05 L90.67 8.05 L91 10.95 L91.33 13.85 L91.67 15.59 L92 12.69 L92.33 9.79 L92.67 6.89 L93 9.21 L93.33 12.11 L93.67 15.01 L94 14.76 L94.33 11.84 L94.67 8.92 L95 9.5 L95.33 12.42 L95.67 15.35 L96 18.27 L96.33 24.4 L96.67 24.4 L97 24.4 L97 25.6 L96.67 25.6 L96.33 25.6 L96 31.73 L95.67 34.65 L95.33 37.58 L95 40.5 L94.67 41.08 L94.33 38.16 L94 35.24 L93.67 34.99 L93.33 37.89 L93 40.79 L92.67 43.11 L92.33 40.21 L92 37.31 L91.67 34.41 L91.33 36.15 L91 39.05 L90.67 41.95 L90.33 41.95 L90 39.05 L89.67 36.15 L89.33 33.5 L89 35.86 L88.67 38.36 L88.33 40.85 L88 38.86 L87.67 36.36 L87.33 33.87 L87 31.38 L86.67 28.88 L86.33 27.72 L86 27.84 L85.67 27.89 L85.33 27.89 L85 27.82 L84.67 27.7 L84.33 28.95 L84 30.55 L83.67 32.15 L83.33 33.75 L83 35.35 L82.67 33.75 L82.33 32.15 L82 30.55 L81.67 28.95 L81.33 27.35 L81 26.78 L80.67 26.96 L80.33 27.17 L80 27.38 L79.67 28.37 L79.33 30.45 L79 32.54 L78.67 34.63 L78.33 36.71 L78 38.8 L77.67 36.71 L77.33 34.63 L77 32.54 L76.67 30.45 L76.33 28.37 L76 26.74 L75.67 26.61 L75.33 26.52 L75 26.5 L74.67 26.54 L74.33 28.18 L74 29.69 L73.67 31.19 L73.33 32.7 L73 34.2 L72.67 32.7 L72.33 31.19 L72 29.69 L71.67 28.18 L71.33 27.89 L71 27.81 L70.67 27.69 L70.33 27.52 L70 27.32 L69.67 27.11 L69.33 27.35 L69 29.64 L68.67 31.93 L68.33 34.22 L68 36.51 L67.67 38.8 L67.33 38.8 L67 36.51 L66.67 34.22 L66.33 31.93 L66 29.64 L65.67 27.59 L65.33 27.74 L65 27.85 L64.67 27.9 L64.33 27.88 L64 28.31 L63.67 30.13 L63.33 31.95 L63 33.77 L62.67 35.59 L62.33 35.59 L62 33.77 L61.67 31.95 L61.33 30.13 L61 28.31 L60.67 26.55 L60.33 26.65 L60 26.81 L59.67 27 L59.33 27.2 L59 27.41 L58.67 28.63 L58.33 31.13 L58 33.62 L57.67 36.11 L57.33 38.61 L57 41.1 L56.67 38.61 L56.33 36.11 L56 33.62 L55.67 31.13 L55.33 28.63 L55 26.71 L54.67 26.59 L54.33 26.51 L54 26.5 L53.67 26.55 L53.33 27.35 L53 29.64 L52.67 31.93 L52.33 34.22 L52 36.51 L51.67 38.8 L51.33 38.8 L51 36.51 L50.67 34.22 L50.33 31.93 L50 29.64 L49.67 27.66 L49.33 27.48 L49 27.28 L48.67 27.15 L48.33 29.85 L48 32.54 L47.67 35.24 L47.33 37.94 L47 40.63 L46.67 41.17 L46.33 38.47 L46 35.78 L45.67 34.99 L45.33 37.89 L45 40.79 L44.67 43.11 L44.33 40.21 L44 37.31 L43.67 34.41 L43.33 37.02 L43 39.92 L42.67 42.82 L42.33 41.08 L42 38.18 L41.67 35.28 L41.33 35.51 L41 38.2 L40.67 40.9 L40.33 40.9 L40 38.2 L39.67 35.51 L39.33 32.81 L39 30.11 L38.67 27.42 L38.33 27.24 L38 27.44 L37.67 27.63 L37.33 27.77 L37 27.87 L36.67 27.9 L36.33 29.75 L36 31.74 L35.67 33.72 L35.33 35.71 L35 35.31 L34.67 33.32 L34.33 31.34 L34 29.35 L33.67 28.63 L33.33 31.13 L33 33.62 L32.67 36.11 L32.33 38.61 L32 41.1 L31.67 38.61 L31.33 36.11 L31 33.62 L30.67 31.13 L30.33 28.63 L30 27.87 L29.67 27.9 L29.33 27.87 L29 27.78 L28.67 27.63 L28.33 27.45 L28 27.29 L27.67 28.32 L27.33 29.34 L27 30.36 L26.67 31.39 L26.33 31.39 L26 30.36 L25.67 29.34 L25.33 28.32 L25 27.29 L24.67 27.05 L24.33 27.26 L24 27.47 L23.67 27.65 L23.33 27.79 L23 28.31 L22.67 30.13 L22.33 31.95 L22 33.77 L21.67 35.59 L21.33 35.59 L21 33.77 L20.67 31.95 L20.33 30.13 L20 28.31 L19.67 26.56 L19.33 26.51 L19 26.51 L18.67 26.58 L18.33 26.7 L18 26.87 L17.67 27.3 L17.33 28.68 L17 30.06 L16.67 31.44 L16.33 32.82 L16 34.2 L15.67 32.82 L15.33 31.44 L15 30.06 L14.67 28.68 L14.33 27.43 L14 27.22 L13.67 27.02 L13.33 26.82 L13 26.67 L12.67 28.63 L12.33 31.13 L12 33.62 L11.67 36.11 L11.33 38.61 L11 41.1 L10.67 38.61 L10.33 36.11 L10 33.62 L9.67 31.13 L9.33 28.63 L9 27.88 L8.67 27.9 L8.33 29.49 L8 31.53 L7.67 33.57 L7.33 35.61 L7 37.65 L6.67 35.61 L6.33 33.57 L6 31.53 L5.67 29.49 L5.33 27.45 L5 26.52 L4.67 28.63 L4.33 31.13 L4 33.62 L3.67 36.11 L3.33 38.61 L3 41.1 L2.67 38.61 L2.33 36.11 L2 33.62 L1.67 31.13 L1.33 28.63 L1 27.75 L0.67 25.6 L0.33 25.6 L0 25.6Z" fill="#86002f"/></svg></div>
<div class="em" style="left:152.3px;top:730.55px"></div>
<div class="em" style="left:271.75px;top:730.55px"></div>
<div class="em" style="left:391.2px;top:730.55px"></div>
<div class="em" style="left:510.65px;top:730.55px"></div>
<div class="em" style="left:630.1px;top:730.55px"></div>
<div class="cl" style="left:649.95px;top:725.35px;height:94.9px;background:#2b827c"><span class="n" style="color:#e2fbf6">Snare Biza</span><svg style="left:100.4px;top:4.6px" width="13" height="15"><path d="M0.3 0.3 L12.2 7 L0.3 13.8Z" fill="rgba(255,255,255,.56)"/></svg><svg style="left:10.3px;top:26.5px" width="97" height="50" viewBox="0 0 97 50"><path d="M7 6 Q10.3 25 7 44 Q3.7 25 7 6ZM23.5 7.5 Q26.8 25 23.5 42.5 Q20.2 25 23.5 7.5ZM39.5 6 Q42.8 25 39.5 44 Q36.2 25 39.5 6ZM56 7.5 Q59.3 25 56 42.5 Q52.7 25 56 7.5ZM72.5 6 Q75.8 25 72.5 44 Q69.2 25 72.5 6ZM89 7.5 Q92.3 25 89 42.5 Q85.7 25 89 7.5ZM2 24.8H95V25.2H2Z" fill="#145856"/><g fill="#186260" opacity=".75"><rect x="31.5" y="-2" width="1" height="54" opacity=".45"/><path d="M28.8 -5h6.4l-3.2 4.6z M28.8 55h6.4l-3.2 -4.6z"/></g><g fill="#186260" opacity=".75"><rect x="64.5" y="-2" width="1" height="54" opacity=".45"/><path d="M61.8 -5h6.4l-3.2 4.6z M61.8 55h6.4l-3.2 -4.6z"/></g></svg></div>
<div class="cl" style="left:769.4px;top:725.35px;height:94.9px;background:#2b827c"><span class="n" style="color:#e2fbf6">Snare Biza</span><svg style="left:100.4px;top:4.6px" width="13" height="15"><path d="M0.3 0.3 L12.2 7 L0.3 13.8Z" fill="rgba(255,255,255,.56)"/></svg><svg style="left:10.3px;top:26.5px" width="97" height="50" viewBox="0 0 97 50"><path d="M7 6 Q10.3 25 7 44 Q3.7 25 7 6ZM23.5 7.5 Q26.8 25 23.5 42.5 Q20.2 25 23.5 7.5ZM39.5 6 Q42.8 25 39.5 44 Q36.2 25 39.5 6ZM56 7.5 Q59.3 25 56 42.5 Q52.7 25 56 7.5ZM72.5 6 Q75.8 25 72.5 44 Q69.2 25 72.5 6ZM89 7.5 Q92.3 25 89 42.5 Q85.7 25 89 7.5ZM2 24.8H95V25.2H2Z" fill="#145856"/><g fill="#186260" opacity=".75"><rect x="31.5" y="-2" width="1" height="54" opacity=".45"/><path d="M28.8 -5h6.4l-3.2 4.6z M28.8 55h6.4l-3.2 -4.6z"/></g><g fill="#186260" opacity=".75"><rect x="64.5" y="-2" width="1" height="54" opacity=".45"/><path d="M61.8 -5h6.4l-3.2 4.6z M61.8 55h6.4l-3.2 -4.6z"/></g></svg></div>
<div class="em" style="left:152.3px;top:827.3px"></div>
<div class="em" style="left:271.75px;top:827.3px"></div>
<div class="em" style="left:391.2px;top:827.3px"></div>
<div class="em" style="left:510.65px;top:827.3px"></div>
<div class="em" style="left:630.1px;top:827.3px"></div>
<div class="cl" style="left:649.95px;top:822.1px;height:87.4px;background:#1e6c66;border-radius:5.5px 5.5px 0 0"><span class="n" style="color:#e2fbf6">Tops Biza</span><svg style="left:100.4px;top:4.6px" width="13" height="15"><path d="M0.3 0.3 L12.2 7 L0.3 13.8Z" fill="rgba(255,255,255,.56)"/></svg><svg style="left:10.3px;top:26.5px" width="97" height="50" viewBox="0 0 97 50"><path d="M0 22.85 L0.29 19.12 L0.57 16.06 L0.86 12.9 L1.14 9.57 L1.43 6.07 L1.72 5.29 L2 5.57 L2.29 6.59 L2.58 9.07 L2.86 14.77 L3.15 18.06 L3.43 14.11 L3.72 8.88 L4.01 5.49 L4.29 2.78 L4.58 1.26 L4.86 4 L5.15 7.19 L5.44 11.24 L5.72 10.75 L6.01 7.87 L6.29 5.55 L6.58 3.56 L6.87 2.56 L7.15 4.78 L7.44 7.25 L7.73 10.09 L8.01 13.68 L8.3 20.78 L8.58 12.65 L8.87 8.45 L9.16 5.18 L9.44 2.38 L9.73 4.05 L10.01 7.1 L10.3 10.84 L10.59 16.56 L10.87 16.4 L11.16 11.74 L11.45 8.49 L11.73 5.78 L12.02 3.38 L12.3 1.28 L12.59 3.12 L12.88 5.17 L13.16 7.55 L13.45 10.51 L13.73 15.02 L14.02 16.32 L14.31 10.38 L14.59 6.77 L14.88 3.87 L15.17 1.36 L15.45 3.3 L15.74 5.93 L16.02 9.2 L16.31 11 L16.6 6.84 L16.88 3.72 L17.17 1.11 L17.45 -0.5 L17.74 -0.5 L18.03 1.2 L18.31 3.96 L18.6 7.21 L18.88 11.41 L19.17 18.97 L19.46 11.86 L19.74 7.95 L20.03 5.02 L20.32 2.56 L20.6 0.39 L20.89 1.23 L21.17 3.83 L21.46 6.75 L21.75 10.23 L22.03 14.99 L22.32 18.72 L22.6 11.34 L22.89 7.22 L23.18 3.92 L23.46 1.07 L23.75 3.37 L24.04 6.56 L24.32 10.47 L24.61 16.49 L24.89 13.65 L25.18 9.8 L25.47 6.77 L25.75 4.16 L26.04 1.81 L26.32 2.39 L26.61 4.46 L26.9 6.85 L27.18 9.77 L27.47 13.93 L27.76 9.7 L28.04 5.91 L28.33 2.82 L28.61 0.14 L28.9 1.71 L29.19 4.38 L29.47 7.62 L29.76 12.18 L30.04 18.03 L30.33 11.68 L30.62 6.92 L30.9 3.49 L31.19 0.65 L31.47 1.76 L31.76 4.93 L32.05 8.85 L32.33 15.07 L32.62 16.65 L32.91 10.68 L33.19 7.33 L33.48 4.71 L33.76 2.49 L34.05 0.52 L34.34 0.44 L34.62 2.76 L34.91 5.32 L35.19 8.24 L35.48 11.79 L35.77 11.1 L36.05 8.02 L36.34 5.47 L36.63 3.23 L36.91 2.3 L37.2 4.54 L37.48 7.02 L37.77 9.91 L38.06 13.61 L38.34 10 L38.63 6.47 L38.91 3.49 L39.2 0.85 L39.49 3.21 L39.77 5.92 L40.06 9.19 L40.35 13.76 L40.63 16.75 L40.92 11.19 L41.2 7.65 L41.49 4.77 L41.78 2.25 L42.06 1.97 L42.35 4.12 L42.63 6.65 L42.92 9.82 L43.21 14.84 L43.49 11.39 L43.78 7.33 L44.06 4.26 L44.35 1.69 L44.64 -0.5 L44.92 1.15 L45.21 3.68 L45.5 6.65 L45.78 10.42 L46.07 18.4 L46.35 11.95 L46.64 8.34 L46.93 5.63 L47.21 3.38 L47.5 2 L47.78 4.42 L48.07 7.15 L48.36 10.4 L48.64 14.87 L48.93 18.15 L49.22 11.66 L49.5 8.03 L49.79 5.16 L50.07 2.91 L50.36 5.62 L50.65 8.75 L50.93 12.69 L51.22 21 L51.5 17.31 L51.79 12.71 L52.08 9.61 L52.36 7.05 L52.65 4.79 L52.94 4.01 L53.22 5.96 L53.51 8.17 L53.79 10.83 L54.08 14.46 L54.37 19.85 L54.65 13.1 L54.94 9.1 L55.22 6.01 L55.51 3.38 L55.8 1.02 L56.08 1.54 L56.37 3.64 L56.65 6.07 L56.94 9.05 L57.23 13.38 L57.51 14.8 L57.8 9.11 L58.09 5.53 L58.37 2.66 L58.66 1.51 L58.94 4.21 L59.23 7.44 L59.52 11.8 L59.8 16.78 L60.09 9.77 L60.37 6.04 L60.66 3.13 L60.95 0.67 L61.23 -0.5 L61.52 1.55 L61.81 4.45 L62.09 7.83 L62.38 10.86 L62.66 8.01 L62.95 5.68 L63.24 3.65 L63.52 1.9 L63.81 4.02 L64.09 6.34 L64.38 8.96 L64.67 12.1 L64.95 16.6 L65.24 21 L65.53 18.18 L65.81 11.04 L66.1 6.79 L66.38 3.36 L66.67 0.71 L66.96 3.53 L67.24 6.83 L67.53 11.04 L67.81 20.17 L68.1 13.34 L68.39 9.4 L68.67 6.33 L68.96 3.7 L69.24 1.35 L69.53 1.98 L69.82 4.05 L70.1 6.46 L70.39 9.44 L70.68 6.96 L70.96 3.39 L71.25 0.41 L71.53 -0.5 L71.82 -0.5 L72.11 1.69 L72.39 4.82 L72.68 8.77 L72.96 15.5 L73.25 18.12 L73.54 10.79 L73.82 7.43 L74.11 4.84 L74.4 2.64 L74.68 1.11 L74.97 3.41 L75.25 5.99 L75.54 9.01 L75.83 12.91 L76.11 15.03 L76.4 9.82 L76.68 6.37 L76.97 3.56 L77.26 1.13 L77.54 3.65 L77.83 6.71 L78.12 10.38 L78.4 15.6 L78.69 20.94 L78.97 15.61 L79.26 10.81 L79.55 7.4 L79.83 4.55 L80.12 3.06 L80.4 5.57 L80.69 8.49 L80.98 12.2 L81.26 19.4 L81.55 11.87 L81.83 7.08 L82.12 3.35 L82.41 0.15 L82.69 2.71 L82.98 6.01 L83.27 10.32 L83.55 19.01 L83.84 14.84 L84.12 10.23 L84.41 7.06 L84.7 4.45 L84.98 2.18 L85.27 1.66 L85.55 3.68 L85.84 6.02 L86.13 8.87 L86.41 12.82 L86.7 18.02 L86.99 18.07 L87.27 8.93 L87.56 4.67 L87.84 1.36 L88.13 0.07 L88.42 3.38 L88.7 7.37 L88.99 12.98 L89.27 19.15 L89.56 19.34 L89.85 11.25 L90.13 7.23 L90.42 4.14 L90.71 1.92 L90.99 4.95 L91.28 8.48 L91.56 13.07 L91.85 20.7 L92.14 14.49 L92.42 8.74 L92.71 4.7 L92.99 1.36 L93.28 1.71 L93.57 5.14 L93.85 9.31 L94.14 15.49 L94.42 20.81 L94.71 16.93 L95 13.37 L95.28 11.71 L95.57 10.95 L95.86 10.81 L96.14 12.32 L96.43 15.01 L96.71 17.52 L97 19.88 L97 29.56 L96.71 32.26 L96.43 34.49 L96.14 37.72 L95.86 37.85 L95.57 39.27 L95.28 37.67 L95 36.61 L94.71 32.55 L94.42 28.72 L94.14 34.74 L93.85 40.06 L93.57 43.86 L93.28 46.39 L92.99 46.52 L92.71 44.66 L92.42 40.76 L92.14 35.74 L91.85 29.3 L91.56 36.87 L91.28 41.52 L90.99 44.37 L90.71 46.93 L90.42 45.97 L90.13 42.23 L89.85 38.4 L89.56 30.73 L89.27 30.52 L88.99 36.65 L88.7 41.32 L88.42 45.51 L88.13 48.29 L87.84 48.79 L87.56 42.96 L87.27 40.11 L86.99 31.79 L86.7 32.05 L86.41 36.8 L86.13 40.47 L85.84 44.04 L85.55 45.8 L85.27 48.53 L84.98 48.53 L84.7 45.16 L84.41 42.41 L84.12 39.76 L83.84 34.12 L83.55 30.99 L83.27 39.69 L82.98 42.81 L82.69 44.68 L82.41 50.47 L82.12 44.57 L81.83 41.47 L81.55 37.64 L81.26 29.93 L80.98 36.55 L80.69 40.64 L80.4 43.49 L80.12 47.18 L79.83 45.6 L79.55 40.77 L79.26 37.69 L78.97 34.59 L78.69 28.57 L78.4 33.82 L78.12 38.64 L77.83 41.78 L77.54 46.22 L77.26 47.61 L76.97 45.84 L76.68 43.5 L76.4 38.61 L76.11 34.48 L75.83 35.84 L75.54 39.85 L75.25 42.39 L74.97 46.79 L74.68 47 L74.4 48.13 L74.11 45.51 L73.82 40.91 L73.54 38.99 L73.25 31.16 L72.96 34.45 L72.68 40.01 L72.39 45.68 L72.11 47.58 L71.82 49.8 L71.53 48.59 L71.25 47.61 L70.96 45.47 L70.68 42.11 L70.39 40.45 L70.1 41.83 L69.82 46.05 L69.53 47.18 L69.24 47.77 L68.96 45.86 L68.67 41.59 L68.39 39.12 L68.1 36.85 L67.81 29.86 L67.53 38.85 L67.24 43.05 L66.96 46.16 L66.67 49.81 L66.38 46.01 L66.1 41.7 L65.81 37.4 L65.53 31.76 L65.24 28.53 L64.95 32.61 L64.67 36.79 L64.38 40.11 L64.09 41.62 L63.81 43.89 L63.52 45.74 L63.24 44.09 L62.95 45.01 L62.66 40.51 L62.38 38.11 L62.09 42.67 L61.81 43.76 L61.52 49.27 L61.23 48.66 L60.95 47.68 L60.66 44.75 L60.37 42.34 L60.09 38.6 L59.8 33.22 L59.52 37.81 L59.23 41.61 L58.94 44.79 L58.66 49.38 L58.37 47.46 L58.09 44.67 L57.8 40.03 L57.51 34.76 L57.23 35.37 L56.94 39.99 L56.65 43.73 L56.37 46.92 L56.08 48.16 L55.8 47.4 L55.51 47.32 L55.22 43.06 L54.94 41.36 L54.65 36.26 L54.37 30 L54.08 35.12 L53.79 39.32 L53.51 40.83 L53.22 44.43 L52.94 46.08 L52.65 44.44 L52.36 42.55 L52.08 40.12 L51.79 35.93 L51.5 32.5 L51.22 28.99 L50.93 36.1 L50.65 39.97 L50.36 43.88 L50.07 46.8 L49.79 44.74 L49.5 41.78 L49.22 38.52 L48.93 31.92 L48.64 35.42 L48.36 39.98 L48.07 40.99 L47.78 45.55 L47.5 48.6 L47.21 45.51 L46.93 44.21 L46.64 39.8 L46.35 36.94 L46.07 31.17 L45.78 39.61 L45.5 42.47 L45.21 43.79 L44.92 48.01 L44.64 48.43 L44.35 47.78 L44.06 44.86 L43.78 41.28 L43.49 38.99 L43.21 34.75 L42.92 38.49 L42.63 41.6 L42.35 46.18 L42.06 45.8 L41.78 48.16 L41.49 42.88 L41.2 42.93 L40.92 38.1 L40.63 33.12 L40.35 36.23 L40.06 39.46 L39.77 44.34 L39.49 45.99 L39.2 48.18 L38.91 46.97 L38.63 42.22 L38.34 39.61 L38.06 35.21 L37.77 38.71 L37.48 43.18 L37.2 43.12 L36.91 47.06 L36.63 44.82 L36.34 43.67 L36.05 40.97 L35.77 37.66 L35.48 37.76 L35.19 42.17 L34.91 43.77 L34.62 45.5 L34.34 48.51 L34.05 49.53 L33.76 48.39 L33.48 44.2 L33.19 42.96 L32.91 39.55 L32.62 32.68 L32.33 35.23 L32.05 40.07 L31.76 43.5 L31.47 45.56 L31.19 46.44 L30.9 45.48 L30.62 43.18 L30.33 37.29 L30.04 31.66 L29.76 38.33 L29.47 41.15 L29.19 43.51 L28.9 48.33 L28.61 48.03 L28.33 47.06 L28.04 44.34 L27.76 39.99 L27.47 35.49 L27.18 40.37 L26.9 43.87 L26.61 45.92 L26.32 47.49 L26.04 45.8 L25.75 45.76 L25.47 41.13 L25.18 38.51 L24.89 35.14 L24.61 32.89 L24.32 40.02 L24.04 42.12 L23.75 45.88 L23.46 49.17 L23.18 45.35 L22.89 41.04 L22.6 37.27 L22.32 31.43 L22.03 35.15 L21.75 39.47 L21.46 42.73 L21.17 45.12 L20.89 49.42 L20.6 48.7 L20.32 48.11 L20.03 44.72 L19.74 41.96 L19.46 37.01 L19.17 31.08 L18.88 37.71 L18.6 41.71 L18.31 45.12 L18.03 46.51 L17.74 50.98 L17.45 48.45 L17.17 46.04 L16.88 44.15 L16.6 42.56 L16.31 39.33 L16.02 39.72 L15.74 44.24 L15.45 44.55 L15.17 47.83 L14.88 43.75 L14.59 43.93 L14.31 39.91 L14.02 33.25 L13.73 34.36 L13.45 38.05 L13.16 40.45 L12.88 43.68 L12.59 45.32 L12.3 46.7 L12.02 46.88 L11.73 42.26 L11.45 41.81 L11.16 36.96 L10.87 33.16 L10.59 32.82 L10.3 38.21 L10.01 42.34 L9.73 45.05 L9.44 45.59 L9.16 44.89 L8.87 39.58 L8.58 37.05 L8.3 29.22 L8.01 35.12 L7.73 39.06 L7.44 40.73 L7.15 43.93 L6.87 45.48 L6.58 44.86 L6.29 42.87 L6.01 41.05 L5.72 38.88 L5.44 37.67 L5.15 43.09 L4.86 45.78 L4.58 46.87 L4.29 47.18 L4.01 45.01 L3.72 40.48 L3.43 34.64 L3.15 31.44 L2.86 35.1 L2.58 40.23 L2.29 42.73 L2 45.12 L1.72 43.91 L1.43 42.67 L1.14 38.59 L0.86 37.26 L0.57 33.4 L0.29 30.61 L0 26.91Z" fill="#0f4d49"/><g fill="#2f7d77" opacity=".7"><rect x="37.5" y="-2" width="1" height="54" opacity="1"/><path d="M34.8 -5h6.4l-3.2 4.6z M34.8 55h6.4l-3.2 -4.6z"/></g><g fill="#2f7d77" opacity=".7"><rect x="75.5" y="-2" width="1" height="54" opacity="1"/><path d="M72.8 -5h6.4l-3.2 4.6z M72.8 55h6.4l-3.2 -4.6z"/></g></svg></div>
<div class="cl" style="left:769.4px;top:822.1px;height:87.4px;background:#1e6c66;border-radius:5.5px 5.5px 0 0"><span class="n" style="color:#e2fbf6">Tops Biza</span><svg style="left:100.4px;top:4.6px" width="13" height="15"><path d="M0.3 0.3 L12.2 7 L0.3 13.8Z" fill="rgba(255,255,255,.56)"/></svg><svg style="left:10.3px;top:26.5px" width="97" height="50" viewBox="0 0 97 50"><path d="M0 22.85 L0.29 19.12 L0.57 16.06 L0.86 12.9 L1.14 9.57 L1.43 6.07 L1.72 5.29 L2 5.57 L2.29 6.59 L2.58 9.07 L2.86 14.77 L3.15 18.06 L3.43 14.11 L3.72 8.88 L4.01 5.49 L4.29 2.78 L4.58 1.26 L4.86 4 L5.15 7.19 L5.44 11.24 L5.72 10.75 L6.01 7.87 L6.29 5.55 L6.58 3.56 L6.87 2.56 L7.15 4.78 L7.44 7.25 L7.73 10.09 L8.01 13.68 L8.3 20.78 L8.58 12.65 L8.87 8.45 L9.16 5.18 L9.44 2.38 L9.73 4.05 L10.01 7.1 L10.3 10.84 L10.59 16.56 L10.87 16.4 L11.16 11.74 L11.45 8.49 L11.73 5.78 L12.02 3.38 L12.3 1.28 L12.59 3.12 L12.88 5.17 L13.16 7.55 L13.45 10.51 L13.73 15.02 L14.02 16.32 L14.31 10.38 L14.59 6.77 L14.88 3.87 L15.17 1.36 L15.45 3.3 L15.74 5.93 L16.02 9.2 L16.31 11 L16.6 6.84 L16.88 3.72 L17.17 1.11 L17.45 -0.5 L17.74 -0.5 L18.03 1.2 L18.31 3.96 L18.6 7.21 L18.88 11.41 L19.17 18.97 L19.46 11.86 L19.74 7.95 L20.03 5.02 L20.32 2.56 L20.6 0.39 L20.89 1.23 L21.17 3.83 L21.46 6.75 L21.75 10.23 L22.03 14.99 L22.32 18.72 L22.6 11.34 L22.89 7.22 L23.18 3.92 L23.46 1.07 L23.75 3.37 L24.04 6.56 L24.32 10.47 L24.61 16.49 L24.89 13.65 L25.18 9.8 L25.47 6.77 L25.75 4.16 L26.04 1.81 L26.32 2.39 L26.61 4.46 L26.9 6.85 L27.18 9.77 L27.47 13.93 L27.76 9.7 L28.04 5.91 L28.33 2.82 L28.61 0.14 L28.9 1.71 L29.19 4.38 L29.47 7.62 L29.76 12.18 L30.04 18.03 L30.33 11.68 L30.62 6.92 L30.9 3.49 L31.19 0.65 L31.47 1.76 L31.76 4.93 L32.05 8.85 L32.33 15.07 L32.62 16.65 L32.91 10.68 L33.19 7.33 L33.48 4.71 L33.76 2.49 L34.05 0.52 L34.34 0.44 L34.62 2.76 L34.91 5.32 L35.19 8.24 L35.48 11.79 L35.77 11.1 L36.05 8.02 L36.34 5.47 L36.63 3.23 L36.91 2.3 L37.2 4.54 L37.48 7.02 L37.77 9.91 L38.06 13.61 L38.34 10 L38.63 6.47 L38.91 3.49 L39.2 0.85 L39.49 3.21 L39.77 5.92 L40.06 9.19 L40.35 13.76 L40.63 16.75 L40.92 11.19 L41.2 7.65 L41.49 4.77 L41.78 2.25 L42.06 1.97 L42.35 4.12 L42.63 6.65 L42.92 9.82 L43.21 14.84 L43.49 11.39 L43.78 7.33 L44.06 4.26 L44.35 1.69 L44.64 -0.5 L44.92 1.15 L45.21 3.68 L45.5 6.65 L45.78 10.42 L46.07 18.4 L46.35 11.95 L46.64 8.34 L46.93 5.63 L47.21 3.38 L47.5 2 L47.78 4.42 L48.07 7.15 L48.36 10.4 L48.64 14.87 L48.93 18.15 L49.22 11.66 L49.5 8.03 L49.79 5.16 L50.07 2.91 L50.36 5.62 L50.65 8.75 L50.93 12.69 L51.22 21 L51.5 17.31 L51.79 12.71 L52.08 9.61 L52.36 7.05 L52.65 4.79 L52.94 4.01 L53.22 5.96 L53.51 8.17 L53.79 10.83 L54.08 14.46 L54.37 19.85 L54.65 13.1 L54.94 9.1 L55.22 6.01 L55.51 3.38 L55.8 1.02 L56.08 1.54 L56.37 3.64 L56.65 6.07 L56.94 9.05 L57.23 13.38 L57.51 14.8 L57.8 9.11 L58.09 5.53 L58.37 2.66 L58.66 1.51 L58.94 4.21 L59.23 7.44 L59.52 11.8 L59.8 16.78 L60.09 9.77 L60.37 6.04 L60.66 3.13 L60.95 0.67 L61.23 -0.5 L61.52 1.55 L61.81 4.45 L62.09 7.83 L62.38 10.86 L62.66 8.01 L62.95 5.68 L63.24 3.65 L63.52 1.9 L63.81 4.02 L64.09 6.34 L64.38 8.96 L64.67 12.1 L64.95 16.6 L65.24 21 L65.53 18.18 L65.81 11.04 L66.1 6.79 L66.38 3.36 L66.67 0.71 L66.96 3.53 L67.24 6.83 L67.53 11.04 L67.81 20.17 L68.1 13.34 L68.39 9.4 L68.67 6.33 L68.96 3.7 L69.24 1.35 L69.53 1.98 L69.82 4.05 L70.1 6.46 L70.39 9.44 L70.68 6.96 L70.96 3.39 L71.25 0.41 L71.53 -0.5 L71.82 -0.5 L72.11 1.69 L72.39 4.82 L72.68 8.77 L72.96 15.5 L73.25 18.12 L73.54 10.79 L73.82 7.43 L74.11 4.84 L74.4 2.64 L74.68 1.11 L74.97 3.41 L75.25 5.99 L75.54 9.01 L75.83 12.91 L76.11 15.03 L76.4 9.82 L76.68 6.37 L76.97 3.56 L77.26 1.13 L77.54 3.65 L77.83 6.71 L78.12 10.38 L78.4 15.6 L78.69 20.94 L78.97 15.61 L79.26 10.81 L79.55 7.4 L79.83 4.55 L80.12 3.06 L80.4 5.57 L80.69 8.49 L80.98 12.2 L81.26 19.4 L81.55 11.87 L81.83 7.08 L82.12 3.35 L82.41 0.15 L82.69 2.71 L82.98 6.01 L83.27 10.32 L83.55 19.01 L83.84 14.84 L84.12 10.23 L84.41 7.06 L84.7 4.45 L84.98 2.18 L85.27 1.66 L85.55 3.68 L85.84 6.02 L86.13 8.87 L86.41 12.82 L86.7 18.02 L86.99 18.07 L87.27 8.93 L87.56 4.67 L87.84 1.36 L88.13 0.07 L88.42 3.38 L88.7 7.37 L88.99 12.98 L89.27 19.15 L89.56 19.34 L89.85 11.25 L90.13 7.23 L90.42 4.14 L90.71 1.92 L90.99 4.95 L91.28 8.48 L91.56 13.07 L91.85 20.7 L92.14 14.49 L92.42 8.74 L92.71 4.7 L92.99 1.36 L93.28 1.71 L93.57 5.14 L93.85 9.31 L94.14 15.49 L94.42 20.81 L94.71 16.93 L95 13.37 L95.28 11.71 L95.57 10.95 L95.86 10.81 L96.14 12.32 L96.43 15.01 L96.71 17.52 L97 19.88 L97 29.56 L96.71 32.26 L96.43 34.49 L96.14 37.72 L95.86 37.85 L95.57 39.27 L95.28 37.67 L95 36.61 L94.71 32.55 L94.42 28.72 L94.14 34.74 L93.85 40.06 L93.57 43.86 L93.28 46.39 L92.99 46.52 L92.71 44.66 L92.42 40.76 L92.14 35.74 L91.85 29.3 L91.56 36.87 L91.28 41.52 L90.99 44.37 L90.71 46.93 L90.42 45.97 L90.13 42.23 L89.85 38.4 L89.56 30.73 L89.27 30.52 L88.99 36.65 L88.7 41.32 L88.42 45.51 L88.13 48.29 L87.84 48.79 L87.56 42.96 L87.27 40.11 L86.99 31.79 L86.7 32.05 L86.41 36.8 L86.13 40.47 L85.84 44.04 L85.55 45.8 L85.27 48.53 L84.98 48.53 L84.7 45.16 L84.41 42.41 L84.12 39.76 L83.84 34.12 L83.55 30.99 L83.27 39.69 L82.98 42.81 L82.69 44.68 L82.41 50.47 L82.12 44.57 L81.83 41.47 L81.55 37.64 L81.26 29.93 L80.98 36.55 L80.69 40.64 L80.4 43.49 L80.12 47.18 L79.83 45.6 L79.55 40.77 L79.26 37.69 L78.97 34.59 L78.69 28.57 L78.4 33.82 L78.12 38.64 L77.83 41.78 L77.54 46.22 L77.26 47.61 L76.97 45.84 L76.68 43.5 L76.4 38.61 L76.11 34.48 L75.83 35.84 L75.54 39.85 L75.25 42.39 L74.97 46.79 L74.68 47 L74.4 48.13 L74.11 45.51 L73.82 40.91 L73.54 38.99 L73.25 31.16 L72.96 34.45 L72.68 40.01 L72.39 45.68 L72.11 47.58 L71.82 49.8 L71.53 48.59 L71.25 47.61 L70.96 45.47 L70.68 42.11 L70.39 40.45 L70.1 41.83 L69.82 46.05 L69.53 47.18 L69.24 47.77 L68.96 45.86 L68.67 41.59 L68.39 39.12 L68.1 36.85 L67.81 29.86 L67.53 38.85 L67.24 43.05 L66.96 46.16 L66.67 49.81 L66.38 46.01 L66.1 41.7 L65.81 37.4 L65.53 31.76 L65.24 28.53 L64.95 32.61 L64.67 36.79 L64.38 40.11 L64.09 41.62 L63.81 43.89 L63.52 45.74 L63.24 44.09 L62.95 45.01 L62.66 40.51 L62.38 38.11 L62.09 42.67 L61.81 43.76 L61.52 49.27 L61.23 48.66 L60.95 47.68 L60.66 44.75 L60.37 42.34 L60.09 38.6 L59.8 33.22 L59.52 37.81 L59.23 41.61 L58.94 44.79 L58.66 49.38 L58.37 47.46 L58.09 44.67 L57.8 40.03 L57.51 34.76 L57.23 35.37 L56.94 39.99 L56.65 43.73 L56.37 46.92 L56.08 48.16 L55.8 47.4 L55.51 47.32 L55.22 43.06 L54.94 41.36 L54.65 36.26 L54.37 30 L54.08 35.12 L53.79 39.32 L53.51 40.83 L53.22 44.43 L52.94 46.08 L52.65 44.44 L52.36 42.55 L52.08 40.12 L51.79 35.93 L51.5 32.5 L51.22 28.99 L50.93 36.1 L50.65 39.97 L50.36 43.88 L50.07 46.8 L49.79 44.74 L49.5 41.78 L49.22 38.52 L48.93 31.92 L48.64 35.42 L48.36 39.98 L48.07 40.99 L47.78 45.55 L47.5 48.6 L47.21 45.51 L46.93 44.21 L46.64 39.8 L46.35 36.94 L46.07 31.17 L45.78 39.61 L45.5 42.47 L45.21 43.79 L44.92 48.01 L44.64 48.43 L44.35 47.78 L44.06 44.86 L43.78 41.28 L43.49 38.99 L43.21 34.75 L42.92 38.49 L42.63 41.6 L42.35 46.18 L42.06 45.8 L41.78 48.16 L41.49 42.88 L41.2 42.93 L40.92 38.1 L40.63 33.12 L40.35 36.23 L40.06 39.46 L39.77 44.34 L39.49 45.99 L39.2 48.18 L38.91 46.97 L38.63 42.22 L38.34 39.61 L38.06 35.21 L37.77 38.71 L37.48 43.18 L37.2 43.12 L36.91 47.06 L36.63 44.82 L36.34 43.67 L36.05 40.97 L35.77 37.66 L35.48 37.76 L35.19 42.17 L34.91 43.77 L34.62 45.5 L34.34 48.51 L34.05 49.53 L33.76 48.39 L33.48 44.2 L33.19 42.96 L32.91 39.55 L32.62 32.68 L32.33 35.23 L32.05 40.07 L31.76 43.5 L31.47 45.56 L31.19 46.44 L30.9 45.48 L30.62 43.18 L30.33 37.29 L30.04 31.66 L29.76 38.33 L29.47 41.15 L29.19 43.51 L28.9 48.33 L28.61 48.03 L28.33 47.06 L28.04 44.34 L27.76 39.99 L27.47 35.49 L27.18 40.37 L26.9 43.87 L26.61 45.92 L26.32 47.49 L26.04 45.8 L25.75 45.76 L25.47 41.13 L25.18 38.51 L24.89 35.14 L24.61 32.89 L24.32 40.02 L24.04 42.12 L23.75 45.88 L23.46 49.17 L23.18 45.35 L22.89 41.04 L22.6 37.27 L22.32 31.43 L22.03 35.15 L21.75 39.47 L21.46 42.73 L21.17 45.12 L20.89 49.42 L20.6 48.7 L20.32 48.11 L20.03 44.72 L19.74 41.96 L19.46 37.01 L19.17 31.08 L18.88 37.71 L18.6 41.71 L18.31 45.12 L18.03 46.51 L17.74 50.98 L17.45 48.45 L17.17 46.04 L16.88 44.15 L16.6 42.56 L16.31 39.33 L16.02 39.72 L15.74 44.24 L15.45 44.55 L15.17 47.83 L14.88 43.75 L14.59 43.93 L14.31 39.91 L14.02 33.25 L13.73 34.36 L13.45 38.05 L13.16 40.45 L12.88 43.68 L12.59 45.32 L12.3 46.7 L12.02 46.88 L11.73 42.26 L11.45 41.81 L11.16 36.96 L10.87 33.16 L10.59 32.82 L10.3 38.21 L10.01 42.34 L9.73 45.05 L9.44 45.59 L9.16 44.89 L8.87 39.58 L8.58 37.05 L8.3 29.22 L8.01 35.12 L7.73 39.06 L7.44 40.73 L7.15 43.93 L6.87 45.48 L6.58 44.86 L6.29 42.87 L6.01 41.05 L5.72 38.88 L5.44 37.67 L5.15 43.09 L4.86 45.78 L4.58 46.87 L4.29 47.18 L4.01 45.01 L3.72 40.48 L3.43 34.64 L3.15 31.44 L2.86 35.1 L2.58 40.23 L2.29 42.73 L2 45.12 L1.72 43.91 L1.43 42.67 L1.14 38.59 L0.86 37.26 L0.57 33.4 L0.29 30.61 L0 26.91Z" fill="#0f4d49"/><g fill="#2f7d77" opacity=".7"><rect x="37.5" y="-2" width="1" height="54" opacity="1"/><path d="M34.8 -5h6.4l-3.2 4.6z M34.8 55h6.4l-3.2 -4.6z"/></g><g fill="#2f7d77" opacity=".7"><rect x="75.5" y="-2" width="1" height="54" opacity="1"/><path d="M72.8 -5h6.4l-3.2 4.6z M72.8 55h6.4l-3.2 -4.6z"/></g></svg></div>
<div class="sq" style="left:907.3px;top:19px;width:14px;height:14px;background:#c9cbcc"></div>
<div class="sq" style="top:92.1px"></div>
<div class="sq" style="top:179.6px"></div>
<div class="sq" style="top:238.9px"></div>
<div class="sq" style="top:313.3px"></div>
<div class="sq" style="top:409.9px"></div>
<div class="sq" style="top:506.6px"></div>
<div class="sq" style="top:603.3px"></div>
<div class="sq" style="top:700.1px"></div>
<div class="sq" style="top:797.1px"></div>
<div class="sq" style="top:893.7px"></div>
<div class="a" style="left:939.4px;top:68.8px;width:6px;height:696px;background:#858789;border-radius:3px"></div>
<svg style="left:936.6px;top:50.9px" width="12" height="8"><path d="M0.3 7.6 L5.8 0.3 L11.3 7.6Z" fill="#8b8d8f"/></svg>
<svg style="left:936.6px;top:896.5px" width="12" height="8"><path d="M0.3 0.3 L5.8 7.5 L11.3 0.3Z" fill="#8b8d8f"/></svg>
<svg style="left:959.6px;top:18.6px" width="15" height="16"><path d="M0.3 0.3 L13.6 7.7 L0.3 15.2Z" fill="#bdbfc0"/></svg>
<span class="t" style="left:1001px;top:19.1px;font-size:14.6px;color:#f2f3f3;-webkit-text-stroke:.2px #f2f3f3">Scene Playlist</span>
<svg style="left:1137px;top:18.5px" width="21" height="15" fill="#4d5154"><path d="M0.3 0.5 L9.5 7.2 L0.3 14Z"/><rect x="5" y="0.6" width="15.4" height="2.6"/><rect x="11" y="5.8" width="9.4" height="2.6"/><rect x="5" y="11.2" width="15.4" height="2.6"/></svg>
<svg style="left:1175.8px;top:19.3px" width="9" height="14"><rect x="0" y="0" width="8.6" height="4.8" fill="#fff"/><rect x="0" y="7.2" width="8.6" height="1.5" fill="#d0d1d2"/><rect x="0" y="9.9" width="8.6" height="1.5" fill="#a5a7a8"/><rect x="0" y="12.3" width="8.6" height="1.6" fill="#f0f0f0"/></svg>
<div class="a" style="left:951px;top:46.6px;width:239.5px;height:32.6px;background:#22262a"></div>
<svg style="left:958.2px;top:54.5px" width="16" height="16" fill="none" stroke="#808386" stroke-width="2" stroke-linecap="round"><path d="M5.2 4.0 A5.1 5.1 0 1 0 10.8 4.0"/><path d="M8 2.3 V7.6"/></svg>
<span class="t" style="left:1001.4px;top:55.9px;font-size:14.6px;color:#f2f3f3;-webkit-text-stroke:.2px #f2f3f3">Playlist 1</span>
<svg style="left:1174.2px;top:60px" width="10" height="7"><path d="M0.3 0.4 L9.4 0.4 L4.85 6.4Z" fill="#85888a"/></svg>
<div class="pr" style="top:80.8px;background:#d16923;color:#571b06;box-shadow:0 0 0 1px rgba(8,8,10,.6)"><span class="t" style="-webkit-text-stroke:.25px #d16923">Scene 1</span><span class="c">2</span></div>
<div class="pr" style="top:107.13px;background:#cf21a6;color:#ffb9f2;box-shadow:0 0 0 1px rgba(8,8,10,.6)"><span class="t" style="-webkit-text-stroke:.25px #cf21a6">Scene 14</span><span class="c">2</span></div>
<div class="pr" style="top:133.46px;background:#1dbb84;color:#0b5a36;box-shadow:0 0 0 1px rgba(8,8,10,.6)"><span class="t" style="-webkit-text-stroke:.25px #1dbb84">Scene 13</span><span class="c">2</span></div>
<div class="pr" style="top:159.79px;background:#205050;color:#c9f5ec;box-shadow:0 0 0 1px rgba(8,8,10,.6)"><span class="t" style="-webkit-text-stroke:.25px #205050">Scene 12</span><span class="c">4</span></div>
<div class="pr" style="top:186.12px;background:#33b9cb;color:#0d4e5c;box-shadow:0 0 0 1px rgba(8,8,10,.6)"><span class="t" style="-webkit-text-stroke:.25px #33b9cb">Scene 11</span><span class="c">4</span></div>
<div class="pr" style="top:212.45px;background:#d16923;color:#571b06;box-shadow:0 0 0 1px rgba(8,8,10,.6)"><span class="t" style="-webkit-text-stroke:.25px #d16923">Scene 1</span><span class="c">1</span></div>
<div class="pr" style="top:238.78px;background:#7a22d0;color:#ecc5ff;box-shadow:0 0 0 1px rgba(8,8,10,.6)"><span class="t" style="-webkit-text-stroke:.25px #7a22d0">Scene 10</span><span class="c">2</span></div>
<div class="pr" style="top:265.11px;background:#d16923;color:#571b06;box-shadow:0 0 0 1px rgba(8,8,10,.6)"><span class="t" style="-webkit-text-stroke:.25px #d16923">Scene 9</span><span class="c">2</span></div>
<div class="a" style="left:951px;top:411px;width:239.5px;height:2px;background:#2b2f33"></div>
<div class="a" style="left:1046.8px;top:410.8px;width:48.4px;height:4.5px;border-radius:2.3px;background:#87898b"></div>
<span class="t" style="left:965.6px;top:424.4px;font-size:14.6px;color:#f2f3f3;-webkit-text-stroke:.2px #f2f3f3">Scenes</span>
<svg style="left:1159px;top:421px" width="18" height="18" fill="none" stroke="#c2c4c5" stroke-width="1.9" stroke-linecap="round" stroke-linejoin="round"><path d="M1.8 9.4 L8.6 2.6 L15.4 9.4 M8.6 2.8 V16"/></svg>
<div class="sr" style="top:448.4px;background:#7b4119;box-shadow:0 0 0 1px rgba(8,8,10,.55)"><i style="background:#ff842c"></i><span class="t" style="color:#ffe6cf">Scene 1</span></div>
<div class="sr" style="top:474.73px;background:#771a5f;box-shadow:0 0 0 1px rgba(8,8,10,.55)"><i style="background:#ff33d3"></i><span class="t" style="color:#ffd8f6">Scene 14</span></div>
<div class="sr" style="top:501.06px;background:#177650;box-shadow:0 0 0 1px rgba(8,8,10,.55)"><i style="background:#22f3a4"></i><span class="t" style="color:#d6ffec">Scene 13</span></div>
<div class="sr" style="top:527.39px;background:#163031;box-shadow:0 0 0 1px rgba(8,8,10,.55)"><i style="background:#216362"></i><span class="t" style="color:#e2f7f4">Scene 12</span></div>
<div class="sr" style="top:553.72px;background:#217079;box-shadow:0 0 0 1px rgba(8,8,10,.55)"><i style="background:#35ecff"></i><span class="t" style="color:#d9fbff">Scene 11</span></div>
<div class="sr" style="top:580.05px;background:#50198d;box-shadow:0 0 0 1px rgba(8,8,10,.55)"><i style="background:#9a33ff"></i><span class="t" style="color:#f0dcff">Scene 10</span></div>
<div class="sr" style="top:606.38px;background:#7b4119;box-shadow:0 0 0 1px rgba(8,8,10,.55)"><i style="background:#ff842c"></i><span class="t" style="color:#ffe6cf">Scene 9</span></div>
<div class="sr" style="top:632.71px;background:#1c2228;box-shadow:0 0 0 1px rgba(8,8,10,.55)"><i style="background:#2b3644"></i><span class="t" style="color:#f4f5f6">Scene 3</span></div>
<div class="sr" style="top:659.04px;background:#1c2228;box-shadow:0 0 0 1px rgba(8,8,10,.55)"><i style="background:#2b3644"></i><span class="t" style="color:#f4f5f6">Scene 4</span></div>
<div class="sr" style="top:685.37px;background:#1c2228;box-shadow:0 0 0 1px rgba(8,8,10,.55)"><i style="background:#2b3644"></i><span class="t" style="color:#f4f5f6">Scene 5</span></div>
<div class="sr" style="top:711.7px;background:#1c2228;box-shadow:0 0 0 1px rgba(8,8,10,.55)"><i style="background:#2b3644"></i><span class="t" style="color:#f4f5f6">Scene 6</span></div>
<div class="sr" style="top:738.03px;background:#1c2228;box-shadow:0 0 0 1px rgba(8,8,10,.55)"><i style="background:#2b3644"></i><span class="t" style="color:#f4f5f6">Scene 7</span></div>
<div class="sr" style="top:764.36px;background:#1c2228;box-shadow:0 0 0 1px rgba(8,8,10,.55)"><i style="background:#2b3644"></i><span class="t" style="color:#f4f5f6">Scene 8</span></div>
<svg style="left:976.6px;top:557.8px" width="16" height="18"><path d="M7.6 16.6 C5 13.4 0.6 8.4 0.6 4.2 C0.6 2.2 1.7 1.1 3.4 .8 C6.1 .3 9.1 .3 11.8 .8 C13.5 1.1 14.6 2.2 14.6 4.2 C14.6 8.4 10.2 13.4 7.6 16.6Z" fill="#fff"/><circle cx="7.5" cy="6" r="1.8" fill="#2c6f72"/></svg>
<span class="t" style="left:965.4px;top:841.6px;font-size:14.8px;color:#f2f3f3;-webkit-text-stroke:.2px #f2f3f3">Global Settings</span>
<div class="a" style="left:951.6px;top:865.2px;width:238.9px;height:64px;background:#34383b"></div>
<span class="t" style="left:958.4px;top:873.6px;font-size:13.6px;color:#cfd1d2">Launch Mode</span>
<span class="t" style="left:958.4px;top:905.6px;font-size:13.6px;color:#cfd1d2">Quantize</span>
<div class="dd" style="top:870.3px"><span class="t">Trigger</span><svg style="left:97.4px;top:7.2px" width="10" height="7"><path d="M0.3 0.3 L9.3 0.3 L4.8 6.2Z" fill="#9a9c9e"/></svg></div>
<div class="dd" style="top:902.4px"><span class="t">1 Bar</span><svg style="left:97.4px;top:7.2px" width="10" height="7"><path d="M0.3 0.3 L9.3 0.3 L4.8 6.2Z" fill="#9a9c9e"/></svg></div>
<div class="a" style="left:-12px;top:2.9px;width:1208.4px;height:933px;border:1.4px solid #46596c;border-radius:6.5px"></div>
</body></html>
